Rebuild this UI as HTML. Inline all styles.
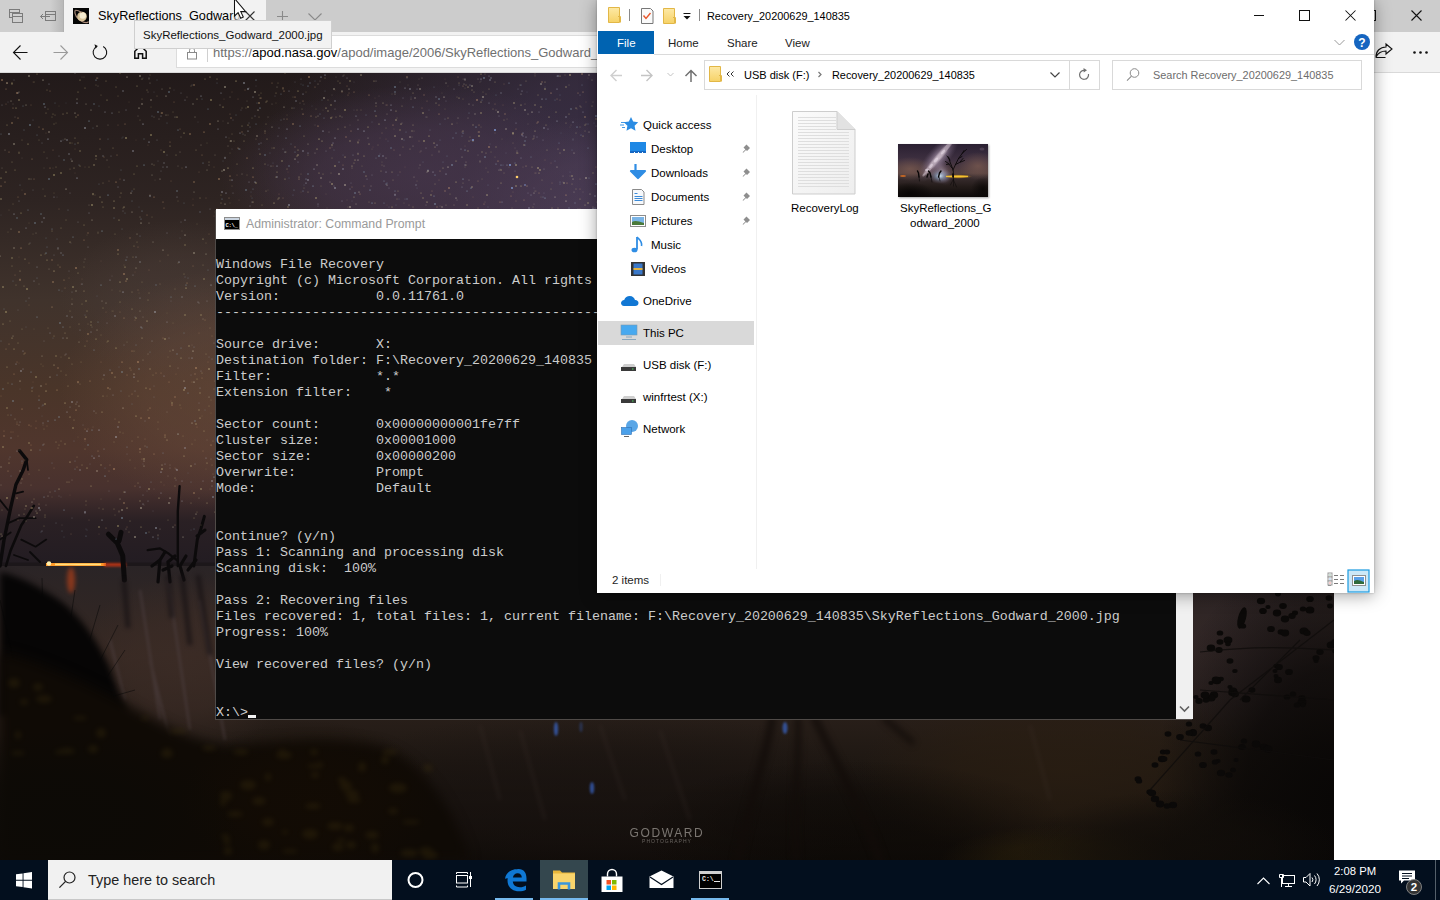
<!DOCTYPE html>
<html><head><meta charset="utf-8">
<style>
*{margin:0;padding:0;box-sizing:border-box}
html,body{width:1440px;height:900px;overflow:hidden;background:#fff;font-family:"Liberation Sans",sans-serif}
.a{position:absolute}
.t{position:absolute;white-space:nowrap;line-height:1}
svg{position:absolute;overflow:visible}
/* browser */
#tabstrip{left:0;top:0;width:1440px;height:32px;background:#cccccc}
#tableft{left:0;top:0;width:64px;height:32px;background:linear-gradient(90deg,#cfcfcf 0,#cfcfcf 50px,#b8b8b8 63px,#a8a8a8 64px)}
#tab{left:64px;top:0;width:202px;height:32px;background:#f2f2f2}
#toolbar{left:0;top:32px;width:1440px;height:41px;background:#f2f2f2}
#addr{left:176px;top:35px;width:1184px;height:33px;background:#fff;border:1px solid #dcdcdc}
#photo{left:0;top:73px;width:1334px;height:787px;overflow:hidden;background:#1a1412}
#tip{left:134px;top:20px;width:198px;height:29px;background:#f2f2f2;border:1px solid #cfcfcf}
/* cmd */
#cmd{left:216px;top:209px;width:977px;height:510px;background:#0c0c0c;box-shadow:-1px 1px 0 #4f4a47}
#cmdtitle{left:0;top:0;width:977px;height:30px;background:#fff}
#cmdtext{left:0;top:48px;font-family:"Liberation Mono",monospace;font-size:13.33px;line-height:16px;color:#cccccc;white-space:pre}
#cmdscroll{left:960px;top:30px;width:17px;height:480px;background:#f0f0f0}
/* explorer */
#exp{left:597px;top:0;width:777px;height:593px;background:#fff;box-shadow:0 2px 16px rgba(0,0,0,.38),0 0 2px rgba(0,0,0,.25)}
.ui{font-size:11.5px;color:#000}
#taskbar{left:0;top:860px;width:1440px;height:40px;background:#030f1e}
#search{left:48px;top:860px;width:344px;height:40px;background:#f1f1f1;border-bottom:1px solid #c8c8c8}
</style></head><body>
<!-- ============ BROWSER CHROME ============ -->
<div id="tabstrip" class="a"></div>
<div id="tableft" class="a"></div>
<svg style="left:0;top:0" width="64" height="32">
  <g fill="none" stroke="#7b7b7b" stroke-width="1">
    <rect x="9.5" y="9.5" width="10" height="8"/><path d="M9.5 12.5h10"/>
    <rect x="12.5" y="13.5" width="10" height="9" fill="#cfcfcf"/><path d="M12.5 16.5h10"/>
    <rect x="45.5" y="11.5" width="10" height="9"/><path d="M45.5 14.5h10"/>
    <path d="M50 16.5h-9.5M43 14l-2.5 2.5L43 19"/>
  </g>
</svg>
<div id="tab" class="a"></div>
<svg style="left:73px;top:8px" width="16" height="16">
  <rect width="16" height="16" fill="#050505"/>
  <path d="M2 2.5C1 6 4 11 9 13.5C12 15 15 15 15.5 13.5" stroke="#a88a78" stroke-width="1.2" fill="none"/>
  <circle cx="9" cy="8.5" r="4.8" fill="#d9c49a"/>
  <circle cx="9.8" cy="7.6" r="3.2" fill="#f6ecd0"/>
  <path d="M2 2.5C3 2 6 3 9 4.5" stroke="#a88a78" stroke-width="1.1" fill="none"/>
</svg>
<div class="t" style="left:98px;top:10px;font-size:12.7px;color:#000">SkyReflections_Godward</div>
<div class="a" style="left:230px;top:0;width:36px;height:32px;background:linear-gradient(90deg,rgba(242,242,242,0),#f2f2f2 12px)"></div>
<svg style="left:245px;top:11px" width="10" height="10"><path d="M0.5 0.5l9 9M9.5 0.5l-9 9" stroke="#333" stroke-width="1.1"/></svg>
<svg style="left:277px;top:11px" width="12" height="11"><path d="M5.5 0v10.5M0 5.5h11" stroke="#8a8a8a" stroke-width="1.1"/></svg>
<svg style="left:308px;top:13px" width="14" height="8"><path d="M0.5 0.5l6.5 6.5 6.5-6.5" stroke="#8a8a8a" stroke-width="1.1" fill="none"/></svg>
<!-- right side browser caption -->
<svg style="left:1360px;top:0" width="20" height="31"><rect x="5.5" y="10.5" width="10" height="10" fill="none" stroke="#111"/></svg>
<svg style="left:1411px;top:10px" width="12" height="12"><path d="M0.5 0.5l10 10M10.5 0.5l-10 10" stroke="#111" stroke-width="1.1"/></svg>
<div id="toolbar" class="a"></div>
<svg style="left:0;top:32px" width="160" height="41">
  <path d="M13.5 20.5h14M20.5 13.5l-7 7 7 7" stroke="#111" stroke-width="1.1" fill="none"/>
  <path d="M53.5 20.5h14M60.5 13.5l7 7-7 7" stroke="#9a9a9a" stroke-width="1.1" fill="none"/>
  <path d="M96.3 14.6A6.8 6.8 0 1 0 103.2 14.4" stroke="#111" stroke-width="1.1" fill="none"/>
  <path d="M94.5 12.3l3.3 1.8-2.2 2.6z" fill="#111"/>
  <path d="M134.8 26.3v-7l5.7-5.5 5.7 5.5v7h-3.6v-4.5h-4.2v4.5z" stroke="#111" stroke-width="1.5" fill="none"/>
</svg>
<div id="addr" class="a"></div>
<svg style="left:176px;top:35px" width="40" height="33">
  <rect x="11.5" y="17.5" width="9" height="6.5" fill="none" stroke="#8a8a8a"/>
  <path d="M13.5 17.5v-2a2.5 2.5 0 0 1 5 0v2" fill="none" stroke="#8a8a8a"/>
  <path d="M31.5 6v21" stroke="#d0d0d0"/>
</svg>
<div class="t" style="left:213px;top:46px;font-size:13px;color:#707070">https://<span style="color:#000">apod.nasa.gov</span>/apod/image/2006/SkyReflections_Godward_2000.jpg</div>
<svg style="left:1374px;top:32px" width="66" height="41">
  <path d="M1.5 25.5h10M2 25c0-6 4-10 10-10v-3l6 5-6 5v-3c-5 0-8 2-10 6z" stroke="#111" stroke-width="1.1" fill="none"/>
  <circle cx="40.5" cy="20.5" r="1.3" fill="#111"/><circle cx="46.5" cy="20.5" r="1.3" fill="#111"/><circle cx="52.5" cy="20.5" r="1.3" fill="#111"/>
</svg>
<div class="a" style="left:0;top:72px;width:1440px;height:1px;background:#d9d9d9"></div>

<!-- ============ PHOTO ============ -->
<div id="photo" class="a">
<svg style="left:0;top:0" width="1334" height="787" viewBox="0 73 1334 787">
<defs>
<linearGradient id="sky" x1="0" y1="73" x2="0" y2="568" gradientUnits="userSpaceOnUse">
 <stop offset="0" stop-color="#221a1a"/><stop offset="0.257" stop-color="#2e2422"/><stop offset="0.46" stop-color="#40332c"/>
 <stop offset="0.64" stop-color="#4a3529"/><stop offset="0.76" stop-color="#50362d"/><stop offset="0.84" stop-color="#48312e"/><stop offset="0.905" stop-color="#2a2024"/><stop offset="1" stop-color="#221c22"/>
</linearGradient>
<linearGradient id="water" x1="0" y1="565" x2="0" y2="865" gradientUnits="userSpaceOnUse">
 <stop offset="0" stop-color="#2a2426"/><stop offset="0.3" stop-color="#352822"/><stop offset="0.65" stop-color="#1f1813"/><stop offset="1" stop-color="#0e0a07"/>
</linearGradient>
<radialGradient id="g0"><stop offset="0" stop-color="#3a3048" stop-opacity="1.0"/><stop offset="0.5" stop-color="#3a3048" stop-opacity="0.750"/><stop offset="1" stop-color="#3a3048" stop-opacity="0"/></radialGradient>
<radialGradient id="g1"><stop offset="0" stop-color="#4d3f58" stop-opacity="0.9"/><stop offset="0.5" stop-color="#4d3f58" stop-opacity="0.675"/><stop offset="1" stop-color="#4d3f58" stop-opacity="0"/></radialGradient>
<radialGradient id="g2"><stop offset="0" stop-color="#45354a" stop-opacity="0.8"/><stop offset="0.5" stop-color="#45354a" stop-opacity="0.600"/><stop offset="1" stop-color="#45354a" stop-opacity="0"/></radialGradient>
<radialGradient id="g3"><stop offset="0" stop-color="#4a3c38" stop-opacity="0.5"/><stop offset="0.5" stop-color="#4a3c38" stop-opacity="0.375"/><stop offset="1" stop-color="#4a3c38" stop-opacity="0"/></radialGradient>
<radialGradient id="g4"><stop offset="0" stop-color="#6a4c3c" stop-opacity="0.55"/><stop offset="0.5" stop-color="#6a4c3c" stop-opacity="0.413"/><stop offset="1" stop-color="#6a4c3c" stop-opacity="0"/></radialGradient>
<radialGradient id="g5"><stop offset="0" stop-color="#3c2c26" stop-opacity="0.8"/><stop offset="0.5" stop-color="#3c2c26" stop-opacity="0.600"/><stop offset="1" stop-color="#3c2c26" stop-opacity="0"/></radialGradient>
<radialGradient id="g6"><stop offset="0" stop-color="#302628" stop-opacity="0.8"/><stop offset="0.5" stop-color="#302628" stop-opacity="0.600"/><stop offset="1" stop-color="#302628" stop-opacity="0"/></radialGradient>
<radialGradient id="g7"><stop offset="0" stop-color="#2a1e12" stop-opacity="0.8"/><stop offset="0.5" stop-color="#2a1e12" stop-opacity="0.600"/><stop offset="1" stop-color="#2a1e12" stop-opacity="0"/></radialGradient>
<radialGradient id="g8"><stop offset="0" stop-color="#181210" stop-opacity="0.6"/><stop offset="0.5" stop-color="#181210" stop-opacity="0.450"/><stop offset="1" stop-color="#181210" stop-opacity="0"/></radialGradient>
<radialGradient id="g9"><stop offset="0" stop-color="#0c0906" stop-opacity="0.6"/><stop offset="0.5" stop-color="#0c0906" stop-opacity="0.450"/><stop offset="1" stop-color="#0c0906" stop-opacity="0"/></radialGradient>
<radialGradient id="g10"><stop offset="0" stop-color="#140c04" stop-opacity="0.7"/><stop offset="0.5" stop-color="#140c04" stop-opacity="0.525"/><stop offset="1" stop-color="#140c04" stop-opacity="0"/></radialGradient>
<radialGradient id="g11"><stop offset="0" stop-color="#0c0a06" stop-opacity="0.9"/><stop offset="0.5" stop-color="#0c0a06" stop-opacity="0.675"/><stop offset="1" stop-color="#0c0a06" stop-opacity="0"/></radialGradient>
<radialGradient id="g12"><stop offset="0" stop-color="#2a200c" stop-opacity="0.7"/><stop offset="0.5" stop-color="#2a200c" stop-opacity="0.525"/><stop offset="1" stop-color="#2a200c" stop-opacity="0"/></radialGradient>
<radialGradient id="g13"><stop offset="0" stop-color="#090706" stop-opacity="1.0"/><stop offset="0.5" stop-color="#090706" stop-opacity="0.750"/><stop offset="1" stop-color="#090706" stop-opacity="0"/></radialGradient>
<radialGradient id="g14"><stop offset="0" stop-color="#120e0a" stop-opacity="0.8"/><stop offset="0.5" stop-color="#120e0a" stop-opacity="0.600"/><stop offset="1" stop-color="#120e0a" stop-opacity="0"/></radialGradient>
</defs>
<rect x="0" y="73" width="1334" height="495" fill="url(#sky)"/>
<ellipse cx="720" cy="180" rx="470" ry="250" fill="url(#g0)"/>
<ellipse cx="610" cy="205" rx="160" ry="90" fill="url(#g1)"/>
<ellipse cx="420" cy="175" rx="200" ry="90" fill="url(#g2)"/>
<ellipse cx="180" cy="300" rx="120" ry="80" fill="url(#g3)"/>
<ellipse cx="230" cy="390" rx="170" ry="120" fill="url(#g4)"/>
<rect x="0" y="565" width="1334" height="300" fill="url(#water)"/>
<ellipse cx="185" cy="665" rx="110" ry="90" fill="url(#g5)"/>
<ellipse cx="1260" cy="660" rx="140" ry="90" fill="url(#g6)"/>
<ellipse cx="1060" cy="770" rx="200" ry="90" fill="url(#g7)"/>
<ellipse cx="600" cy="800" rx="300" ry="90" fill="url(#g8)"/>
<ellipse cx="850" cy="830" rx="220" ry="70" fill="url(#g9)"/>
<g stroke="#524548" stroke-width="2.5" opacity="0.45" style="filter:blur(1.5px)"><path d="M140 590L160 720M168 580L190 730M200 600L225 740M110 640L125 700M150 660L170 740"/></g><g stroke="#4a3c38" stroke-width="3" opacity="0.2" style="filter:blur(2px)"><path d="M480 725L500 800M520 730L545 820M600 725L625 800M660 730L690 820M1030 725L1050 800"/></g>
<rect x="0" y="562.5" width="215" height="3.5" fill="#1c171a"/>
<rect x="46" y="563" width="60" height="3" fill="#ff9a28" style="filter:blur(0.7px)"/>
<rect x="55" y="563.6" width="46" height="1.6" fill="#ffe080"/>
<rect x="104" y="563" width="22" height="3.5" fill="#d03a18" opacity="0.85" style="filter:blur(0.8px)"/>
<circle cx="49" cy="563.5" r="2.2" fill="#fff0b0" style="filter:blur(0.6px)"/>
<ellipse cx="71" cy="580" rx="4" ry="13" fill="#b0401a" opacity="0.7" style="filter:blur(2px)"/>
<g fill="none" stroke="#0c0a0b" stroke-linecap="round" stroke-linejoin="round">
 <path d="M0 566L4 540L10.7 507.6L16 484.4L23.1 470.2L26.7 459.6L19.6 450.7" stroke-width="3.4"/>
 <path d="M6 566L10.7 550.2L21.3 525.3L28.4 514.7L33.8 505.8" stroke-width="2.6"/>
 <path d="M7.1 523.6L19.6 518.2L35.6 518.2M16 493.3L23.1 491.6M0 539.6L10.7 532.4M21.3 539.6L35.6 546.7L46.2 539.6M26.7 459.6L28 470M0 500L8 510M14 555L28 560M30 552L40 562" stroke-width="1.8"/>
 <path d="M124.4 580L122.7 555.6L117.3 543.1L108.4 534.2M119 541L121 532.4" stroke-width="5"/>
 <path d="M177.8 566L177.8 511L179.6 486.2" stroke-width="2.4"/>
 <path d="M193.8 566L197.3 539.6L200.9 528.9L204.4 516.4M197 536L205 530" stroke-width="3"/>
 <path d="M147.6 550.2L160 548.4L168.9 553.8L177.8 560.9" stroke-width="2.2"/>
</g>
<g fill="none" stroke="#0c0a0b" stroke-linecap="round"><path d="M158 582L160 560L165 552M170 582L168 562L175 556M184 580L180 566L186 556M152 566L160 560M163 570L172 566M188 570L196 560" stroke-width="3.2"/></g>
<g fill="none" stroke="#161113" opacity="0.7" style="filter:blur(2px)"><path d="M124 580L128 628M168 575L172 618M182 575L190 645M198 575L210 655" stroke-width="5"/></g>
<path d="M0 572C20 576 42 588 62 602C82 618 98 642 110 668C116 686 121 700 128 712L0 716z" fill="#060505" style="filter:blur(3px)"/>
<g stroke="#060505" stroke-width="1" opacity="0.5" fill="none"><path d="M30 690L10 585M45 690L42 578M60 690L75 590M75 690L100 605M85 690L118 625M95 695L125 650M20 690L0 600M100 700L135 690"/></g>
<path d="M0 652C50 664 100 690 140 712C170 728 195 742 230 746C280 742 330 736 380 746C420 760 450 800 470 860H0z" fill="#0f0a05" style="filter:blur(6px)"/>
<ellipse cx="310" cy="800" rx="130" ry="80" fill="url(#g10)"/>
<ellipse cx="60" cy="820" rx="180" ry="90" fill="url(#g11)"/>
<g fill="#3a2e0e" opacity="0.35" style="filter:blur(2.5px)"><ellipse cx="338" cy="847" rx="6" ry="4"/><ellipse cx="259" cy="801" rx="7" ry="4"/><ellipse cx="284" cy="755" rx="8" ry="4"/><ellipse cx="426" cy="851" rx="7" ry="4"/><ellipse cx="223" cy="803" rx="3" ry="3"/><ellipse cx="226" cy="796" rx="6" ry="5"/><ellipse cx="354" cy="800" rx="7" ry="3"/><ellipse cx="430" cy="855" rx="8" ry="4"/><ellipse cx="268" cy="777" rx="3" ry="4"/><ellipse cx="398" cy="788" rx="9" ry="5"/><ellipse cx="264" cy="845" rx="6" ry="5"/><ellipse cx="235" cy="814" rx="8" ry="3"/><ellipse cx="290" cy="851" rx="8" ry="2"/><ellipse cx="241" cy="752" rx="8" ry="3"/><ellipse cx="314" cy="766" rx="7" ry="2"/><ellipse cx="24" cy="702" rx="4" ry="3"/><ellipse cx="44" cy="699" rx="8" ry="4"/><ellipse cx="428" cy="768" rx="5" ry="4"/><ellipse cx="282" cy="753" rx="4" ry="4"/><ellipse cx="346" cy="786" rx="6" ry="5"/><ellipse cx="341" cy="840" rx="4" ry="2"/><ellipse cx="375" cy="848" rx="4" ry="5"/><ellipse cx="228" cy="851" rx="4" ry="4"/><ellipse cx="393" cy="811" rx="5" ry="3"/><ellipse cx="14" cy="683" rx="6" ry="5"/><ellipse cx="59" cy="752" rx="4" ry="2"/><ellipse cx="314" cy="752" rx="4" ry="3"/><ellipse cx="248" cy="785" rx="8" ry="5"/><ellipse cx="145" cy="718" rx="4" ry="2"/><ellipse cx="411" cy="822" rx="9" ry="2"/><ellipse cx="101" cy="733" rx="5" ry="5"/><ellipse cx="335" cy="826" rx="8" ry="4"/><ellipse cx="167" cy="752" rx="5" ry="4"/><ellipse cx="80" cy="718" rx="7" ry="2"/><ellipse cx="209" cy="748" rx="7" ry="3"/><ellipse cx="18" cy="735" rx="3" ry="4"/><ellipse cx="268" cy="822" rx="6" ry="4"/><ellipse cx="362" cy="767" rx="4" ry="5"/><ellipse cx="93" cy="749" rx="5" ry="4"/><ellipse cx="310" cy="834" rx="8" ry="5"/><ellipse cx="342" cy="780" rx="4" ry="3"/><ellipse cx="178" cy="731" rx="9" ry="3"/><ellipse cx="315" cy="775" rx="4" ry="3"/><ellipse cx="227" cy="841" rx="3" ry="4"/><ellipse cx="285" cy="832" rx="3" ry="2"/><ellipse cx="225" cy="836" rx="4" ry="2"/><ellipse cx="352" cy="794" rx="7" ry="4"/><ellipse cx="320" cy="765" rx="3" ry="3"/><ellipse cx="38" cy="687" rx="5" ry="4"/><ellipse cx="349" cy="828" rx="5" ry="4"/><ellipse cx="18" cy="753" rx="7" ry="2"/><ellipse cx="351" cy="845" rx="5" ry="4"/><ellipse cx="167" cy="754" rx="6" ry="4"/><ellipse cx="372" cy="835" rx="7" ry="4"/><ellipse cx="409" cy="853" rx="9" ry="4"/><ellipse cx="67" cy="751" rx="8" ry="3"/><ellipse cx="313" cy="806" rx="8" ry="3"/><ellipse cx="390" cy="752" rx="8" ry="3"/><ellipse cx="385" cy="760" rx="4" ry="4"/></g>
<g fill="none" stroke="#120c09" stroke-linecap="round" opacity="0.8" style="filter:blur(3px)">
 <path d="M772 719C768 750 752 790 738 860" stroke-width="8"/>
 <path d="M798 719C800 760 792 805 796 860" stroke-width="6"/>
 <path d="M815 719C835 760 860 805 880 860" stroke-width="8"/>
 <path d="M885 719L912 742" stroke-width="6"/>
</g>
<g fill="#3a66c8" opacity="0.7" style="filter:blur(1.2px)"><ellipse cx="556" cy="729" rx="2.2" ry="7"/><ellipse cx="785" cy="728" rx="2.5" ry="6"/><ellipse cx="592" cy="788" rx="2.2" ry="6"/><ellipse cx="581" cy="727" rx="1.5" ry="5" opacity="0.5"/></g>
<ellipse cx="1060" cy="860" rx="120" ry="35" fill="url(#g12)"/>
<ellipse cx="1334" cy="800" rx="180" ry="260" fill="url(#g13)"/>
<ellipse cx="1180" cy="850" rx="160" ry="60" fill="url(#g14)"/>
<g fill="#0b0908" style="filter:blur(0.5px)"><ellipse cx="1242" cy="618" rx="4" ry="11" transform="rotate(15 1242 618)"/><ellipse cx="1243" cy="626" rx="3.2" ry="2.6"/><ellipse cx="1268" cy="607" rx="2.6" ry="2.1"/><ellipse cx="1295" cy="613" rx="3.0" ry="2.4"/><ellipse cx="1281" cy="632" rx="3.4" ry="2.8"/><ellipse cx="1283" cy="606" rx="3.8" ry="3.0"/><ellipse cx="1285" cy="619" rx="4.2" ry="3.4"/><ellipse cx="1263" cy="611" rx="3.8" ry="3.1"/><ellipse cx="1292" cy="616" rx="3.7" ry="2.9"/><ellipse cx="1277" cy="613" rx="4.2" ry="3.4"/><ellipse cx="1211" cy="648" rx="4.3" ry="3.4"/><ellipse cx="1220" cy="633" rx="3.3" ry="2.6"/><ellipse cx="1228" cy="640" rx="4.4" ry="3.5"/><ellipse cx="1228" cy="644" rx="2.8" ry="2.2"/><ellipse cx="1230" cy="661" rx="3.4" ry="2.7"/><ellipse cx="1220" cy="642" rx="3.5" ry="2.8"/><ellipse cx="1219" cy="650" rx="3.7" ry="2.9"/><ellipse cx="1271" cy="629" rx="3.9" ry="3.1"/><ellipse cx="1304" cy="631" rx="4.5" ry="3.6"/><ellipse cx="1285" cy="633" rx="4.2" ry="3.4"/><ellipse cx="1307" cy="633" rx="3.6" ry="2.9"/><ellipse cx="1217" cy="681" rx="4.2" ry="3.3"/><ellipse cx="1211" cy="683" rx="2.6" ry="2.1"/><ellipse cx="1235" cy="671" rx="2.7" ry="2.1"/><ellipse cx="1221" cy="679" rx="2.8" ry="2.2"/><ellipse cx="1214" cy="695" rx="4.2" ry="3.4"/><ellipse cx="1230" cy="687" rx="2.6" ry="2.1"/><ellipse cx="1216" cy="680" rx="4.3" ry="3.4"/><ellipse cx="1211" cy="698" rx="4.5" ry="3.6"/><ellipse cx="1199" cy="701" rx="3.7" ry="3.0"/><ellipse cx="1206" cy="700" rx="3.3" ry="2.7"/><ellipse cx="1196" cy="697" rx="2.6" ry="2.1"/><ellipse cx="1205" cy="695" rx="4.4" ry="3.5"/><ellipse cx="1252" cy="690" rx="3.4" ry="2.7"/><ellipse cx="1232" cy="693" rx="3.7" ry="3.0"/><ellipse cx="1233" cy="691" rx="4.4" ry="3.5"/><ellipse cx="1235" cy="694" rx="3.9" ry="3.2"/><ellipse cx="1246" cy="699" rx="4.5" ry="3.6"/><ellipse cx="1275" cy="671" rx="2.5" ry="2.0"/><ellipse cx="1276" cy="676" rx="2.5" ry="2.0"/><ellipse cx="1276" cy="666" rx="2.6" ry="2.1"/><ellipse cx="1279" cy="667" rx="3.9" ry="3.1"/><ellipse cx="1278" cy="680" rx="4.0" ry="3.2"/><ellipse cx="1289" cy="672" rx="3.9" ry="3.1"/><ellipse cx="1203" cy="726" rx="3.4" ry="2.7"/><ellipse cx="1189" cy="724" rx="3.2" ry="2.6"/><ellipse cx="1193" cy="732" rx="3.7" ry="3.0"/><ellipse cx="1193" cy="733" rx="4.0" ry="3.2"/><ellipse cx="1208" cy="728" rx="4.0" ry="3.2"/><ellipse cx="1162" cy="759" rx="4.1" ry="3.3"/><ellipse cx="1164" cy="759" rx="3.4" ry="2.7"/><ellipse cx="1163" cy="752" rx="3.1" ry="2.5"/><ellipse cx="1155" cy="765" rx="3.4" ry="2.7"/><ellipse cx="1167" cy="752" rx="3.2" ry="2.5"/><ellipse cx="1138" cy="779" rx="3.4" ry="2.7"/><ellipse cx="1150" cy="792" rx="3.6" ry="2.8"/><ellipse cx="1155" cy="799" rx="4.2" ry="3.3"/><ellipse cx="1152" cy="793" rx="4.1" ry="3.3"/><ellipse cx="1139" cy="781" rx="3.2" ry="2.6"/><ellipse cx="1173" cy="805" rx="4.1" ry="3.3"/><ellipse cx="1167" cy="806" rx="3.3" ry="2.7"/><ellipse cx="1160" cy="804" rx="4.3" ry="3.5"/><ellipse cx="1310" cy="610" rx="4.4" ry="3.5"/><ellipse cx="1329" cy="598" rx="3.4" ry="2.7"/><ellipse cx="1330" cy="606" rx="2.9" ry="2.4"/><ellipse cx="1310" cy="599" rx="3.8" ry="3.1"/><ellipse cx="1303" cy="609" rx="3.2" ry="2.5"/><ellipse cx="1320" cy="652" rx="3.7" ry="2.9"/><ellipse cx="1316" cy="661" rx="2.6" ry="2.1"/><ellipse cx="1331" cy="645" rx="4.3" ry="3.5"/><ellipse cx="1335" cy="642" rx="3.7" ry="2.9"/><ellipse cx="1335" cy="651" rx="2.8" ry="2.3"/><ellipse cx="1316" cy="658" rx="3.5" ry="2.8"/><ellipse cx="1242" cy="747" rx="3.7" ry="3.0"/><ellipse cx="1256" cy="744" rx="4.2" ry="3.4"/><ellipse cx="1244" cy="741" rx="3.2" ry="2.6"/><ellipse cx="1264" cy="747" rx="4.1" ry="3.3"/><ellipse cx="1268" cy="749" rx="4.3" ry="3.5"/><ellipse cx="1236" cy="760" rx="2.5" ry="2.0"/><ellipse cx="1218" cy="761" rx="2.6" ry="2.1"/><ellipse cx="1229" cy="775" rx="3.6" ry="2.8"/><ellipse cx="1221" cy="773" rx="4.1" ry="3.2"/><ellipse cx="1233" cy="770" rx="2.8" ry="2.2"/><ellipse cx="1302" cy="702" rx="4.4" ry="3.6"/><ellipse cx="1302" cy="698" rx="3.5" ry="2.8"/><ellipse cx="1297" cy="705" rx="3.2" ry="2.6"/><ellipse cx="1293" cy="694" rx="3.2" ry="2.6"/><ellipse cx="1303" cy="705" rx="2.7" ry="2.2"/><ellipse cx="1287" cy="697" rx="3.3" ry="2.6"/><ellipse cx="1215" cy="762" rx="3.2" ry="2.6"/><ellipse cx="1198" cy="754" rx="3.3" ry="2.6"/><ellipse cx="1214" cy="752" rx="3.4" ry="2.7"/><ellipse cx="1203" cy="765" rx="3.9" ry="3.1"/><ellipse cx="1168" cy="734" rx="3.4" ry="2.7"/><ellipse cx="1180" cy="737" rx="3.9" ry="3.1"/><ellipse cx="1189" cy="733" rx="3.4" ry="2.7"/><ellipse cx="1280" cy="590" rx="3.2" ry="2.6"/><ellipse cx="1278" cy="594" rx="3.0" ry="2.4"/><ellipse cx="1261" cy="601" rx="4.1" ry="3.3"/><ellipse cx="1255" cy="589" rx="4.1" ry="3.3"/></g>
<g stroke="#0f0c0b" stroke-width="1.2" fill="none" opacity="0.8"><path d="M1334 650C1300 648 1260 645 1200 652M1334 700L1200 690M1334 620L1230 700L1150 790M1300 640L1240 700M1334 760L1180 740"/></g>
<g><circle cx="70" cy="143" r="0.75" fill="#e8d89a" opacity="0.35"/><circle cx="177" cy="117" r="0.6" fill="#e8d89a" opacity="0.8"/><circle cx="46" cy="113" r="0.55" fill="#e8d89a" opacity="0.45"/><circle cx="20" cy="271" r="0.6" fill="#e8d89a" opacity="0.45"/><circle cx="136" cy="345" r="0.4" fill="#9fc0d8" opacity="0.8"/><circle cx="86" cy="529" r="0.4" fill="#9fc0d8" opacity="0.45"/><circle cx="63" cy="140" r="0.4" fill="#9fc0d8" opacity="0.55"/><circle cx="121" cy="391" r="0.4" fill="#9fc0d8" opacity="0.8"/><circle cx="138" cy="247" r="0.6" fill="#e0b080" opacity="0.35"/><circle cx="122" cy="362" r="0.55" fill="#e0b080" opacity="0.8"/><circle cx="92" cy="220" r="0.6" fill="#f0e6c8" opacity="0.55"/><circle cx="65" cy="444" r="0.75" fill="#d8c88a" opacity="0.35"/><circle cx="124" cy="318" r="0.5" fill="#e0b080" opacity="0.65"/><circle cx="62" cy="531" r="0.4" fill="#9fc0d8" opacity="0.65"/><circle cx="36" cy="233" r="0.55" fill="#f0e6c8" opacity="0.35"/><circle cx="208" cy="109" r="0.6" fill="#9fc0d8" opacity="0.55"/><circle cx="73" cy="237" r="0.55" fill="#9fc0d8" opacity="0.65"/><circle cx="15" cy="117" r="0.5" fill="#f0e6c8" opacity="0.35"/><circle cx="13" cy="401" r="0.75" fill="#9fc0d8" opacity="0.65"/><circle cx="61" cy="253" r="0.75" fill="#cfd8e8" opacity="0.35"/><circle cx="203" cy="239" r="0.6" fill="#e8d89a" opacity="0.65"/><circle cx="13" cy="432" r="0.45" fill="#e0b080" opacity="0.45"/><circle cx="86" cy="501" r="0.55" fill="#e8d89a" opacity="0.45"/><circle cx="97" cy="330" r="0.45" fill="#f0e6c8" opacity="0.8"/><circle cx="60" cy="267" r="0.5" fill="#e0b080" opacity="0.65"/><circle cx="207" cy="143" r="0.45" fill="#d8c88a" opacity="0.45"/><circle cx="142" cy="79" r="0.6" fill="#d8c88a" opacity="0.55"/><circle cx="61" cy="141" r="0.6" fill="#cfd8e8" opacity="0.8"/><circle cx="122" cy="518" r="0.75" fill="#9fc0d8" opacity="0.8"/><circle cx="141" cy="418" r="0.55" fill="#e0b080" opacity="0.8"/><circle cx="85" cy="259" r="0.4" fill="#f0e6c8" opacity="0.65"/><circle cx="13" cy="104" r="0.45" fill="#f0e6c8" opacity="0.45"/><circle cx="24" cy="354" r="0.4" fill="#e8d89a" opacity="0.8"/><circle cx="33" cy="120" r="0.5" fill="#9fc0d8" opacity="0.35"/><circle cx="15" cy="170" r="0.55" fill="#d8c88a" opacity="0.55"/><circle cx="206" cy="354" r="0.55" fill="#e8d89a" opacity="0.35"/><circle cx="183" cy="537" r="0.55" fill="#f0e6c8" opacity="0.65"/><circle cx="67" cy="140" r="0.75" fill="#cfd8e8" opacity="0.55"/><circle cx="103" cy="396" r="0.6" fill="#e8d89a" opacity="0.45"/><circle cx="205" cy="320" r="0.45" fill="#e0b080" opacity="0.8"/><circle cx="197" cy="427" r="0.5" fill="#e0b080" opacity="0.35"/><circle cx="150" cy="195" r="0.5" fill="#d8c88a" opacity="0.55"/><circle cx="167" cy="322" r="0.6" fill="#cfd8e8" opacity="0.45"/><circle cx="132" cy="441" r="0.45" fill="#d8c88a" opacity="0.65"/><circle cx="160" cy="179" r="0.6" fill="#f0e6c8" opacity="0.55"/><circle cx="158" cy="535" r="0.5" fill="#f0e6c8" opacity="0.55"/><circle cx="42" cy="356" r="0.5" fill="#f0e6c8" opacity="0.55"/><circle cx="206" cy="243" r="0.45" fill="#e8d89a" opacity="0.45"/><circle cx="102" cy="231" r="0.55" fill="#9fc0d8" opacity="0.8"/><circle cx="182" cy="297" r="0.75" fill="#cfd8e8" opacity="0.35"/><circle cx="180" cy="129" r="0.55" fill="#e0b080" opacity="0.45"/><circle cx="103" cy="156" r="0.75" fill="#cfd8e8" opacity="0.35"/><circle cx="173" cy="527" r="0.55" fill="#f0e6c8" opacity="0.65"/><circle cx="161" cy="113" r="0.45" fill="#d8c88a" opacity="0.45"/><circle cx="6" cy="349" r="0.55" fill="#e0b080" opacity="0.45"/><circle cx="132" cy="351" r="0.55" fill="#e0b080" opacity="0.55"/><circle cx="34" cy="329" r="0.4" fill="#e8d89a" opacity="0.35"/><circle cx="114" cy="509" r="0.55" fill="#d8c88a" opacity="0.45"/><circle cx="6" cy="172" r="0.6" fill="#d8c88a" opacity="0.8"/><circle cx="70" cy="327" r="0.45" fill="#e8d89a" opacity="0.55"/><circle cx="194" cy="382" r="0.6" fill="#f0e6c8" opacity="0.8"/><circle cx="28" cy="144" r="0.6" fill="#e8d89a" opacity="0.65"/><circle cx="168" cy="357" r="0.45" fill="#d8c88a" opacity="0.45"/><circle cx="102" cy="412" r="0.6" fill="#e8d89a" opacity="0.55"/><circle cx="147" cy="321" r="0.55" fill="#e8d89a" opacity="0.8"/><circle cx="12" cy="162" r="0.4" fill="#e8d89a" opacity="0.8"/><circle cx="98" cy="86" r="0.4" fill="#f0e6c8" opacity="0.55"/><circle cx="132" cy="309" r="0.6" fill="#d8c88a" opacity="0.55"/><circle cx="98" cy="322" r="0.55" fill="#9fc0d8" opacity="0.45"/><circle cx="151" cy="482" r="0.5" fill="#9fc0d8" opacity="0.45"/><circle cx="181" cy="137" r="0.4" fill="#f0e6c8" opacity="0.65"/><circle cx="68" cy="386" r="0.55" fill="#e8d89a" opacity="0.45"/><circle cx="145" cy="439" r="0.45" fill="#e0b080" opacity="0.55"/><circle cx="31" cy="485" r="0.55" fill="#d8c88a" opacity="0.35"/><circle cx="86" cy="301" r="0.75" fill="#d8c88a" opacity="0.45"/><circle cx="153" cy="537" r="0.55" fill="#cfd8e8" opacity="0.65"/><circle cx="42" cy="222" r="0.75" fill="#cfd8e8" opacity="0.35"/><circle cx="73" cy="287" r="0.75" fill="#e8d89a" opacity="0.65"/><circle cx="72" cy="364" r="0.6" fill="#e8d89a" opacity="0.35"/><circle cx="213" cy="441" r="0.4" fill="#e8d89a" opacity="0.55"/><circle cx="59" cy="496" r="0.45" fill="#cfd8e8" opacity="0.45"/><circle cx="177" cy="470" r="0.75" fill="#cfd8e8" opacity="0.65"/><circle cx="32" cy="502" r="0.6" fill="#f0e6c8" opacity="0.55"/><circle cx="19" cy="100" r="0.75" fill="#d8c88a" opacity="0.65"/><circle cx="193" cy="199" r="0.4" fill="#e0b080" opacity="0.35"/><circle cx="173" cy="112" r="0.45" fill="#e8d89a" opacity="0.55"/><circle cx="186" cy="285" r="0.5" fill="#9fc0d8" opacity="0.65"/><circle cx="200" cy="198" r="0.45" fill="#e8d89a" opacity="0.8"/><circle cx="153" cy="511" r="0.45" fill="#cfd8e8" opacity="0.35"/><circle cx="39" cy="508" r="0.75" fill="#cfd8e8" opacity="0.8"/><circle cx="164" cy="208" r="0.6" fill="#e0b080" opacity="0.45"/><circle cx="58" cy="448" r="0.5" fill="#e8d89a" opacity="0.35"/><circle cx="4" cy="309" r="0.45" fill="#9fc0d8" opacity="0.65"/><circle cx="53" cy="282" r="0.75" fill="#e0b080" opacity="0.65"/><circle cx="142" cy="328" r="0.55" fill="#9fc0d8" opacity="0.55"/><circle cx="149" cy="532" r="0.5" fill="#d8c88a" opacity="0.45"/><circle cx="87" cy="235" r="0.4" fill="#d8c88a" opacity="0.35"/><circle cx="15" cy="419" r="0.5" fill="#f0e6c8" opacity="0.45"/><circle cx="12" cy="384" r="0.55" fill="#9fc0d8" opacity="0.55"/><circle cx="129" cy="396" r="0.4" fill="#f0e6c8" opacity="0.45"/><circle cx="34" cy="281" r="0.5" fill="#cfd8e8" opacity="0.55"/><circle cx="210" cy="328" r="0.45" fill="#e8d89a" opacity="0.55"/><circle cx="47" cy="158" r="0.5" fill="#f0e6c8" opacity="0.35"/><circle cx="103" cy="308" r="0.45" fill="#d8c88a" opacity="0.8"/><circle cx="168" cy="115" r="0.4" fill="#d8c88a" opacity="0.65"/><circle cx="127" cy="257" r="0.5" fill="#cfd8e8" opacity="0.45"/><circle cx="18" cy="520" r="0.45" fill="#e0b080" opacity="0.8"/><circle cx="84" cy="225" r="0.55" fill="#d8c88a" opacity="0.55"/><circle cx="156" cy="373" r="0.4" fill="#e0b080" opacity="0.8"/><circle cx="136" cy="416" r="0.6" fill="#d8c88a" opacity="0.8"/><circle cx="163" cy="338" r="0.4" fill="#e0b080" opacity="0.8"/><circle cx="172" cy="405" r="0.75" fill="#e0b080" opacity="0.45"/><circle cx="18" cy="93" r="0.75" fill="#cfd8e8" opacity="0.35"/><circle cx="81" cy="284" r="0.4" fill="#e0b080" opacity="0.35"/><circle cx="135" cy="391" r="0.55" fill="#cfd8e8" opacity="0.35"/><circle cx="99" cy="106" r="0.6" fill="#9fc0d8" opacity="0.35"/><circle cx="142" cy="104" r="0.75" fill="#f0e6c8" opacity="0.55"/><circle cx="175" cy="468" r="0.45" fill="#e0b080" opacity="0.45"/><circle cx="50" cy="377" r="0.55" fill="#f0e6c8" opacity="0.65"/><circle cx="17" cy="498" r="0.5" fill="#e8d89a" opacity="0.8"/><circle cx="137" cy="166" r="0.6" fill="#d8c88a" opacity="0.55"/><circle cx="55" cy="420" r="0.5" fill="#9fc0d8" opacity="0.8"/><circle cx="29" cy="298" r="0.55" fill="#cfd8e8" opacity="0.35"/><circle cx="150" cy="389" r="0.5" fill="#e0b080" opacity="0.8"/><circle cx="62" cy="291" r="0.4" fill="#9fc0d8" opacity="0.45"/><circle cx="67" cy="113" r="0.55" fill="#e8d89a" opacity="0.55"/><circle cx="99" cy="456" r="0.55" fill="#cfd8e8" opacity="0.65"/><circle cx="45" cy="515" r="0.45" fill="#e8d89a" opacity="0.8"/><circle cx="20" cy="422" r="0.5" fill="#cfd8e8" opacity="0.45"/><circle cx="130" cy="368" r="0.5" fill="#e8d89a" opacity="0.55"/><circle cx="50" cy="492" r="0.55" fill="#f0e6c8" opacity="0.35"/><circle cx="34" cy="517" r="0.75" fill="#f0e6c8" opacity="0.65"/><circle cx="65" cy="139" r="0.5" fill="#f0e6c8" opacity="0.55"/><circle cx="26" cy="228" r="0.5" fill="#cfd8e8" opacity="0.65"/><circle cx="26" cy="506" r="0.75" fill="#e8d89a" opacity="0.55"/><circle cx="55" cy="103" r="0.55" fill="#9fc0d8" opacity="0.35"/><circle cx="78" cy="273" r="0.5" fill="#e8d89a" opacity="0.55"/><circle cx="22" cy="463" r="0.5" fill="#e0b080" opacity="0.45"/><circle cx="54" cy="197" r="0.6" fill="#cfd8e8" opacity="0.45"/><circle cx="167" cy="440" r="0.55" fill="#e8d89a" opacity="0.65"/><circle cx="197" cy="512" r="0.6" fill="#d8c88a" opacity="0.35"/><circle cx="11" cy="415" r="0.55" fill="#9fc0d8" opacity="0.45"/><circle cx="139" cy="207" r="0.4" fill="#9fc0d8" opacity="0.45"/><circle cx="37" cy="267" r="0.5" fill="#cfd8e8" opacity="0.55"/><circle cx="160" cy="529" r="0.5" fill="#f0e6c8" opacity="0.45"/><circle cx="65" cy="333" r="0.55" fill="#e8d89a" opacity="0.45"/><circle cx="139" cy="108" r="0.6" fill="#f0e6c8" opacity="0.8"/><circle cx="48" cy="496" r="0.55" fill="#f0e6c8" opacity="0.45"/><circle cx="118" cy="187" r="0.45" fill="#cfd8e8" opacity="0.8"/><circle cx="20" cy="185" r="0.5" fill="#9fc0d8" opacity="0.45"/><circle cx="192" cy="423" r="0.55" fill="#f0e6c8" opacity="0.65"/><circle cx="161" cy="171" r="0.5" fill="#cfd8e8" opacity="0.35"/><circle cx="108" cy="341" r="0.5" fill="#d8c88a" opacity="0.8"/><circle cx="114" cy="442" r="0.45" fill="#e8d89a" opacity="0.55"/><circle cx="194" cy="253" r="0.75" fill="#f0e6c8" opacity="0.65"/><circle cx="206" cy="469" r="0.4" fill="#d8c88a" opacity="0.35"/><circle cx="92" cy="430" r="0.55" fill="#9fc0d8" opacity="0.65"/><circle cx="0" cy="256" r="0.6" fill="#f0e6c8" opacity="0.65"/><circle cx="54" cy="124" r="0.45" fill="#d8c88a" opacity="0.8"/><circle cx="210" cy="124" r="0.75" fill="#e0b080" opacity="0.65"/><circle cx="18" cy="436" r="0.4" fill="#d8c88a" opacity="0.45"/><circle cx="123" cy="91" r="0.75" fill="#cfd8e8" opacity="0.45"/><circle cx="135" cy="320" r="0.55" fill="#e0b080" opacity="0.35"/><circle cx="21" cy="213" r="0.6" fill="#d8c88a" opacity="0.65"/><circle cx="56" cy="442" r="0.4" fill="#e8d89a" opacity="0.8"/><circle cx="65" cy="288" r="0.5" fill="#e0b080" opacity="0.45"/><circle cx="103" cy="183" r="0.45" fill="#e8d89a" opacity="0.65"/><circle cx="152" cy="217" r="0.4" fill="#d8c88a" opacity="0.65"/><circle cx="191" cy="375" r="0.4" fill="#cfd8e8" opacity="0.45"/><circle cx="144" cy="505" r="0.45" fill="#f0e6c8" opacity="0.35"/><circle cx="150" cy="408" r="0.5" fill="#e0b080" opacity="0.65"/><circle cx="43" cy="445" r="0.75" fill="#9fc0d8" opacity="0.35"/><circle cx="44" cy="526" r="0.5" fill="#d8c88a" opacity="0.45"/><circle cx="100" cy="197" r="0.5" fill="#e8d89a" opacity="0.8"/><circle cx="107" cy="160" r="0.45" fill="#f0e6c8" opacity="0.65"/><circle cx="197" cy="99" r="0.6" fill="#d8c88a" opacity="0.65"/><circle cx="12" cy="84" r="0.6" fill="#d8c88a" opacity="0.65"/><circle cx="11" cy="101" r="0.55" fill="#f0e6c8" opacity="0.55"/><circle cx="158" cy="539" r="0.45" fill="#cfd8e8" opacity="0.45"/><circle cx="40" cy="510" r="0.75" fill="#f0e6c8" opacity="0.35"/><circle cx="67" cy="412" r="0.5" fill="#cfd8e8" opacity="0.65"/><circle cx="37" cy="74" r="0.5" fill="#e8d89a" opacity="0.55"/><circle cx="91" cy="486" r="0.6" fill="#d8c88a" opacity="0.65"/><circle cx="77" cy="457" r="0.55" fill="#e8d89a" opacity="0.35"/><circle cx="152" cy="164" r="0.6" fill="#f0e6c8" opacity="0.45"/><circle cx="70" cy="417" r="0.55" fill="#e8d89a" opacity="0.65"/><circle cx="54" cy="365" r="0.55" fill="#e8d89a" opacity="0.65"/><circle cx="8" cy="102" r="0.4" fill="#cfd8e8" opacity="0.45"/><circle cx="161" cy="493" r="0.5" fill="#cfd8e8" opacity="0.55"/><circle cx="72" cy="518" r="0.4" fill="#cfd8e8" opacity="0.55"/><circle cx="200" cy="212" r="0.75" fill="#9fc0d8" opacity="0.35"/><circle cx="5" cy="182" r="0.55" fill="#e0b080" opacity="0.65"/><circle cx="206" cy="254" r="0.5" fill="#f0e6c8" opacity="0.65"/><circle cx="29" cy="305" r="0.4" fill="#e0b080" opacity="0.55"/><circle cx="178" cy="434" r="0.6" fill="#d8c88a" opacity="0.55"/><circle cx="186" cy="288" r="0.6" fill="#e8d89a" opacity="0.8"/><circle cx="43" cy="425" r="0.45" fill="#f0e6c8" opacity="0.35"/><circle cx="140" cy="298" r="0.6" fill="#cfd8e8" opacity="0.45"/><circle cx="212" cy="486" r="0.4" fill="#cfd8e8" opacity="0.8"/><circle cx="18" cy="118" r="0.55" fill="#e0b080" opacity="0.65"/><circle cx="37" cy="135" r="0.55" fill="#9fc0d8" opacity="0.45"/><circle cx="162" cy="469" r="0.75" fill="#e8d89a" opacity="0.55"/><circle cx="63" cy="338" r="0.5" fill="#cfd8e8" opacity="0.55"/><circle cx="43" cy="189" r="0.45" fill="#d8c88a" opacity="0.45"/><circle cx="61" cy="497" r="0.45" fill="#cfd8e8" opacity="0.35"/><circle cx="86" cy="536" r="0.6" fill="#9fc0d8" opacity="0.45"/><circle cx="140" cy="120" r="0.55" fill="#e8d89a" opacity="0.35"/><circle cx="1" cy="485" r="0.45" fill="#f0e6c8" opacity="0.55"/><circle cx="9" cy="210" r="0.4" fill="#e8d89a" opacity="0.45"/><circle cx="130" cy="460" r="0.45" fill="#e8d89a" opacity="0.55"/><circle cx="111" cy="156" r="0.6" fill="#cfd8e8" opacity="0.35"/><circle cx="23" cy="351" r="0.6" fill="#cfd8e8" opacity="0.45"/><circle cx="8" cy="232" r="0.4" fill="#d8c88a" opacity="0.55"/><circle cx="8" cy="415" r="0.45" fill="#e8d89a" opacity="0.55"/><circle cx="88" cy="247" r="0.6" fill="#cfd8e8" opacity="0.35"/><circle cx="44" cy="444" r="0.6" fill="#f0e6c8" opacity="0.35"/><circle cx="88" cy="445" r="0.75" fill="#9fc0d8" opacity="0.45"/><circle cx="138" cy="116" r="0.45" fill="#f0e6c8" opacity="0.55"/><circle cx="89" cy="205" r="0.5" fill="#f0e6c8" opacity="0.35"/><circle cx="67" cy="338" r="0.5" fill="#f0e6c8" opacity="0.65"/><circle cx="4" cy="431" r="0.5" fill="#e0b080" opacity="0.45"/><circle cx="84" cy="262" r="0.4" fill="#f0e6c8" opacity="0.45"/><circle cx="92" cy="456" r="0.55" fill="#9fc0d8" opacity="0.55"/><circle cx="100" cy="149" r="0.4" fill="#e8d89a" opacity="0.8"/><circle cx="31" cy="450" r="0.55" fill="#e8d89a" opacity="0.8"/><circle cx="134" cy="246" r="0.6" fill="#d8c88a" opacity="0.45"/><circle cx="75" cy="149" r="0.45" fill="#e8d89a" opacity="0.35"/><circle cx="83" cy="425" r="0.45" fill="#cfd8e8" opacity="0.45"/><circle cx="181" cy="93" r="0.55" fill="#cfd8e8" opacity="0.35"/><circle cx="131" cy="370" r="0.4" fill="#e0b080" opacity="0.8"/><circle cx="149" cy="489" r="0.75" fill="#d8c88a" opacity="0.8"/><circle cx="87" cy="468" r="0.55" fill="#d8c88a" opacity="0.8"/><circle cx="47" cy="260" r="0.6" fill="#d8c88a" opacity="0.65"/><circle cx="78" cy="143" r="0.75" fill="#d8c88a" opacity="0.35"/><circle cx="191" cy="466" r="0.75" fill="#e8d89a" opacity="0.55"/><circle cx="25" cy="353" r="0.6" fill="#e0b080" opacity="0.55"/><circle cx="140" cy="217" r="0.45" fill="#f0e6c8" opacity="0.65"/><circle cx="142" cy="282" r="0.55" fill="#d8c88a" opacity="0.35"/><circle cx="1" cy="534" r="0.55" fill="#d8c88a" opacity="0.65"/><circle cx="165" cy="437" r="0.55" fill="#d8c88a" opacity="0.65"/><circle cx="86" cy="104" r="0.5" fill="#f0e6c8" opacity="0.55"/><circle cx="20" cy="279" r="0.6" fill="#e0b080" opacity="0.35"/><circle cx="9" cy="134" r="0.75" fill="#cfd8e8" opacity="0.8"/><circle cx="17" cy="424" r="0.55" fill="#e0b080" opacity="0.45"/><circle cx="6" cy="104" r="0.6" fill="#e0b080" opacity="0.35"/><circle cx="42" cy="531" r="0.55" fill="#cfd8e8" opacity="0.45"/><circle cx="148" cy="410" r="0.45" fill="#e8d89a" opacity="0.55"/><circle cx="132" cy="191" r="0.5" fill="#9fc0d8" opacity="0.55"/><circle cx="195" cy="286" r="0.5" fill="#9fc0d8" opacity="0.65"/><circle cx="45" cy="196" r="0.6" fill="#d8c88a" opacity="0.55"/><circle cx="80" cy="166" r="0.55" fill="#d8c88a" opacity="0.55"/><circle cx="147" cy="491" r="0.45" fill="#cfd8e8" opacity="0.35"/><circle cx="166" cy="96" r="0.5" fill="#f0e6c8" opacity="0.8"/><circle cx="113" cy="395" r="0.4" fill="#cfd8e8" opacity="0.8"/><circle cx="136" cy="257" r="0.5" fill="#cfd8e8" opacity="0.65"/><circle cx="214" cy="343" r="0.5" fill="#cfd8e8" opacity="0.35"/><circle cx="96" cy="156" r="0.75" fill="#e8d89a" opacity="0.55"/><circle cx="177" cy="191" r="0.75" fill="#9fc0d8" opacity="0.55"/><circle cx="158" cy="422" r="0.45" fill="#d8c88a" opacity="0.55"/><circle cx="133" cy="275" r="0.6" fill="#cfd8e8" opacity="0.35"/><circle cx="29" cy="179" r="0.75" fill="#e8d89a" opacity="0.35"/><circle cx="12" cy="338" r="0.5" fill="#e8d89a" opacity="0.8"/><circle cx="77" cy="178" r="0.6" fill="#cfd8e8" opacity="0.8"/><circle cx="29" cy="244" r="0.55" fill="#d8c88a" opacity="0.45"/><circle cx="3" cy="447" r="0.75" fill="#d8c88a" opacity="0.65"/><circle cx="21" cy="371" r="0.75" fill="#cfd8e8" opacity="0.65"/><circle cx="175" cy="525" r="0.4" fill="#e0b080" opacity="0.8"/><circle cx="193" cy="351" r="0.6" fill="#f0e6c8" opacity="0.8"/><circle cx="202" cy="416" r="0.45" fill="#d8c88a" opacity="0.35"/><circle cx="10" cy="321" r="0.55" fill="#d8c88a" opacity="0.45"/><circle cx="34" cy="499" r="0.4" fill="#e8d89a" opacity="0.8"/><circle cx="119" cy="512" r="0.45" fill="#f0e6c8" opacity="0.45"/><circle cx="112" cy="373" r="0.75" fill="#e0b080" opacity="0.65"/><circle cx="176" cy="155" r="0.5" fill="#e8d89a" opacity="0.55"/><circle cx="135" cy="537" r="0.75" fill="#f0e6c8" opacity="0.8"/><circle cx="1" cy="467" r="0.75" fill="#f0e6c8" opacity="0.35"/><circle cx="160" cy="284" r="0.45" fill="#e8d89a" opacity="0.55"/><circle cx="50" cy="91" r="0.5" fill="#e0b080" opacity="0.55"/><circle cx="154" cy="197" r="0.6" fill="#e0b080" opacity="0.65"/><circle cx="148" cy="501" r="0.5" fill="#cfd8e8" opacity="0.45"/><circle cx="18" cy="310" r="0.45" fill="#cfd8e8" opacity="0.45"/><circle cx="182" cy="168" r="0.45" fill="#e0b080" opacity="0.55"/><circle cx="41" cy="255" r="0.6" fill="#d8c88a" opacity="0.65"/><circle cx="196" cy="368" r="0.75" fill="#e0b080" opacity="0.8"/><circle cx="101" cy="465" r="0.75" fill="#e8d89a" opacity="0.35"/><circle cx="94" cy="411" r="0.6" fill="#cfd8e8" opacity="0.45"/><circle cx="85" cy="346" r="0.6" fill="#d8c88a" opacity="0.45"/><circle cx="7" cy="125" r="0.6" fill="#d8c88a" opacity="0.55"/><circle cx="211" cy="400" r="0.4" fill="#e8d89a" opacity="0.45"/><circle cx="150" cy="369" r="0.75" fill="#e8d89a" opacity="0.35"/><circle cx="14" cy="349" r="0.5" fill="#d8c88a" opacity="0.8"/><circle cx="193" cy="104" r="0.75" fill="#f0e6c8" opacity="0.35"/><circle cx="53" cy="168" r="0.4" fill="#e8d89a" opacity="0.35"/><circle cx="178" cy="368" r="0.5" fill="#f0e6c8" opacity="0.35"/><circle cx="29" cy="443" r="0.75" fill="#d8c88a" opacity="0.55"/><circle cx="69" cy="271" r="0.4" fill="#cfd8e8" opacity="0.55"/><circle cx="201" cy="96" r="0.5" fill="#cfd8e8" opacity="0.8"/><circle cx="109" cy="471" r="0.6" fill="#e0b080" opacity="0.35"/><circle cx="170" cy="88" r="0.6" fill="#e8d89a" opacity="0.55"/><circle cx="101" cy="95" r="0.6" fill="#d8c88a" opacity="0.35"/><circle cx="124" cy="207" r="0.55" fill="#e8d89a" opacity="0.8"/><circle cx="44" cy="429" r="0.4" fill="#e8d89a" opacity="0.55"/><circle cx="106" cy="303" r="0.45" fill="#f0e6c8" opacity="0.8"/><circle cx="75" cy="461" r="0.5" fill="#9fc0d8" opacity="0.45"/><circle cx="61" cy="173" r="0.75" fill="#d8c88a" opacity="0.65"/><circle cx="36" cy="511" r="0.4" fill="#f0e6c8" opacity="0.8"/><circle cx="170" cy="366" r="0.5" fill="#e8d89a" opacity="0.65"/><circle cx="201" cy="489" r="0.75" fill="#e8d89a" opacity="0.65"/><circle cx="192" cy="85" r="0.45" fill="#cfd8e8" opacity="0.55"/><circle cx="92" cy="327" r="0.45" fill="#f0e6c8" opacity="0.45"/><circle cx="204" cy="132" r="0.6" fill="#e0b080" opacity="0.8"/><circle cx="140" cy="236" r="0.5" fill="#9fc0d8" opacity="0.45"/><circle cx="187" cy="283" r="0.6" fill="#e0b080" opacity="0.55"/><circle cx="37" cy="278" r="0.5" fill="#9fc0d8" opacity="0.45"/><circle cx="27" cy="289" r="0.75" fill="#d8c88a" opacity="0.8"/><circle cx="41" cy="214" r="0.75" fill="#9fc0d8" opacity="0.45"/><circle cx="156" cy="528" r="0.75" fill="#cfd8e8" opacity="0.8"/><circle cx="113" cy="148" r="0.5" fill="#d8c88a" opacity="0.55"/><circle cx="211" cy="413" r="0.4" fill="#d8c88a" opacity="0.35"/><circle cx="42" cy="143" r="0.45" fill="#cfd8e8" opacity="0.55"/><circle cx="94" cy="165" r="0.75" fill="#e8d89a" opacity="0.55"/><circle cx="45" cy="254" r="0.4" fill="#e8d89a" opacity="0.65"/><circle cx="185" cy="277" r="0.45" fill="#9fc0d8" opacity="0.55"/><circle cx="100" cy="139" r="0.6" fill="#e0b080" opacity="0.65"/><circle cx="1" cy="186" r="0.55" fill="#e0b080" opacity="0.8"/><circle cx="127" cy="375" r="0.45" fill="#e0b080" opacity="0.8"/><circle cx="184" cy="390" r="0.75" fill="#e8d89a" opacity="0.65"/><circle cx="93" cy="194" r="0.75" fill="#e8d89a" opacity="0.65"/><circle cx="52" cy="260" r="0.75" fill="#e0b080" opacity="0.45"/><circle cx="54" cy="271" r="0.55" fill="#e8d89a" opacity="0.8"/><circle cx="185" cy="315" r="0.75" fill="#d8c88a" opacity="0.55"/><circle cx="168" cy="255" r="0.55" fill="#e8d89a" opacity="0.35"/><circle cx="54" cy="175" r="0.75" fill="#d8c88a" opacity="0.8"/><circle cx="75" cy="469" r="0.55" fill="#9fc0d8" opacity="0.45"/><circle cx="155" cy="312" r="0.75" fill="#cfd8e8" opacity="0.8"/><circle cx="74" cy="420" r="0.55" fill="#d8c88a" opacity="0.45"/><circle cx="85" cy="429" r="0.4" fill="#e0b080" opacity="0.8"/><circle cx="77" cy="99" r="0.5" fill="#f0e6c8" opacity="0.65"/><circle cx="13" cy="108" r="0.55" fill="#e0b080" opacity="0.55"/><circle cx="125" cy="124" r="0.5" fill="#e0b080" opacity="0.65"/><circle cx="203" cy="319" r="0.45" fill="#f0e6c8" opacity="0.65"/><circle cx="46" cy="133" r="0.4" fill="#e0b080" opacity="0.45"/><circle cx="101" cy="335" r="0.45" fill="#d8c88a" opacity="0.55"/><circle cx="144" cy="461" r="0.55" fill="#f0e6c8" opacity="0.55"/><circle cx="164" cy="376" r="0.55" fill="#cfd8e8" opacity="0.45"/><circle cx="58" cy="249" r="0.5" fill="#f0e6c8" opacity="0.45"/><circle cx="104" cy="449" r="0.5" fill="#cfd8e8" opacity="0.45"/><circle cx="141" cy="223" r="0.55" fill="#f0e6c8" opacity="0.8"/><circle cx="138" cy="381" r="0.5" fill="#d8c88a" opacity="0.55"/><circle cx="185" cy="100" r="0.6" fill="#cfd8e8" opacity="0.45"/><circle cx="115" cy="234" r="0.6" fill="#e8d89a" opacity="0.35"/><circle cx="45" cy="107" r="0.5" fill="#cfd8e8" opacity="0.8"/><circle cx="22" cy="140" r="0.45" fill="#d8c88a" opacity="0.65"/><circle cx="75" cy="144" r="0.55" fill="#9fc0d8" opacity="0.45"/><circle cx="132" cy="394" r="0.4" fill="#e0b080" opacity="0.8"/><circle cx="170" cy="465" r="0.45" fill="#f0e6c8" opacity="0.45"/><circle cx="115" cy="419" r="0.55" fill="#e0b080" opacity="0.35"/><circle cx="120" cy="197" r="0.45" fill="#d8c88a" opacity="0.65"/><circle cx="107" cy="100" r="0.55" fill="#d8c88a" opacity="0.65"/><circle cx="53" cy="150" r="0.6" fill="#e0b080" opacity="0.35"/><circle cx="35" cy="223" r="0.75" fill="#9fc0d8" opacity="0.65"/><circle cx="144" cy="466" r="0.5" fill="#f0e6c8" opacity="0.65"/><circle cx="216" cy="389" r="0.45" fill="#e0b080" opacity="0.55"/><circle cx="137" cy="86" r="0.6" fill="#e8d89a" opacity="0.55"/><circle cx="175" cy="117" r="0.55" fill="#f0e6c8" opacity="0.45"/><circle cx="7" cy="408" r="0.75" fill="#d8c88a" opacity="0.55"/><circle cx="20" cy="381" r="0.5" fill="#f0e6c8" opacity="0.8"/><circle cx="120" cy="499" r="0.5" fill="#f0e6c8" opacity="0.55"/><circle cx="91" cy="332" r="0.5" fill="#cfd8e8" opacity="0.55"/><circle cx="179" cy="262" r="0.6" fill="#cfd8e8" opacity="0.8"/><circle cx="74" cy="168" r="0.55" fill="#e8d89a" opacity="0.55"/><circle cx="42" cy="406" r="0.45" fill="#9fc0d8" opacity="0.35"/><circle cx="169" cy="92" r="0.75" fill="#9fc0d8" opacity="0.65"/><circle cx="118" cy="96" r="0.5" fill="#e8d89a" opacity="0.35"/><circle cx="10" cy="457" r="0.55" fill="#9fc0d8" opacity="0.35"/><circle cx="170" cy="498" r="0.6" fill="#f0e6c8" opacity="0.8"/><circle cx="32" cy="388" r="0.75" fill="#9fc0d8" opacity="0.35"/><circle cx="46" cy="384" r="0.55" fill="#e0b080" opacity="0.45"/><circle cx="22" cy="158" r="0.4" fill="#f0e6c8" opacity="0.35"/><circle cx="197" cy="379" r="0.5" fill="#d8c88a" opacity="0.55"/><circle cx="121" cy="193" r="0.5" fill="#d8c88a" opacity="0.65"/><circle cx="7" cy="83" r="0.6" fill="#e0b080" opacity="0.8"/><circle cx="202" cy="99" r="0.6" fill="#9fc0d8" opacity="0.35"/><circle cx="178" cy="434" r="0.55" fill="#9fc0d8" opacity="0.65"/><circle cx="96" cy="80" r="0.55" fill="#9fc0d8" opacity="0.8"/><circle cx="215" cy="381" r="0.45" fill="#f0e6c8" opacity="0.65"/><circle cx="119" cy="112" r="0.55" fill="#d8c88a" opacity="0.45"/><circle cx="135" cy="272" r="0.4" fill="#e0b080" opacity="0.35"/><circle cx="213" cy="474" r="0.45" fill="#e8d89a" opacity="0.45"/><circle cx="102" cy="202" r="0.6" fill="#d8c88a" opacity="0.65"/><circle cx="158" cy="161" r="0.4" fill="#cfd8e8" opacity="0.45"/><circle cx="158" cy="112" r="0.75" fill="#9fc0d8" opacity="0.65"/><circle cx="99" cy="508" r="0.5" fill="#e8d89a" opacity="0.35"/><circle cx="2" cy="80" r="0.75" fill="#e0b080" opacity="0.8"/><circle cx="17" cy="218" r="0.75" fill="#9fc0d8" opacity="0.45"/><circle cx="207" cy="463" r="0.6" fill="#e8d89a" opacity="0.55"/><circle cx="79" cy="342" r="0.55" fill="#f0e6c8" opacity="0.45"/><circle cx="31" cy="445" r="0.5" fill="#e0b080" opacity="0.45"/><circle cx="136" cy="268" r="0.55" fill="#f0e6c8" opacity="0.55"/><circle cx="169" cy="338" r="0.5" fill="#cfd8e8" opacity="0.35"/><circle cx="134" cy="377" r="0.6" fill="#cfd8e8" opacity="0.8"/><circle cx="157" cy="80" r="0.45" fill="#9fc0d8" opacity="0.55"/><circle cx="126" cy="529" r="0.45" fill="#f0e6c8" opacity="0.65"/><circle cx="148" cy="354" r="0.45" fill="#f0e6c8" opacity="0.55"/><circle cx="149" cy="223" r="0.5" fill="#f0e6c8" opacity="0.45"/><circle cx="127" cy="454" r="0.4" fill="#cfd8e8" opacity="0.45"/><circle cx="175" cy="478" r="0.6" fill="#d8c88a" opacity="0.55"/><circle cx="211" cy="445" r="0.6" fill="#e0b080" opacity="0.65"/><circle cx="75" cy="113" r="0.6" fill="#f0e6c8" opacity="0.65"/><circle cx="43" cy="423" r="0.45" fill="#cfd8e8" opacity="0.8"/><circle cx="12" cy="258" r="0.75" fill="#d8c88a" opacity="0.55"/><circle cx="127" cy="77" r="0.55" fill="#f0e6c8" opacity="0.8"/><circle cx="19" cy="450" r="0.4" fill="#d8c88a" opacity="0.65"/><circle cx="125" cy="492" r="0.6" fill="#cfd8e8" opacity="0.65"/><circle cx="109" cy="167" r="0.45" fill="#d8c88a" opacity="0.35"/><circle cx="39" cy="400" r="0.5" fill="#9fc0d8" opacity="0.8"/><circle cx="78" cy="437" r="0.45" fill="#d8c88a" opacity="0.35"/><circle cx="199" cy="303" r="0.4" fill="#cfd8e8" opacity="0.65"/><circle cx="170" cy="146" r="0.6" fill="#e8d89a" opacity="0.55"/><circle cx="61" cy="357" r="0.4" fill="#e8d89a" opacity="0.45"/><circle cx="214" cy="477" r="0.55" fill="#9fc0d8" opacity="0.8"/><circle cx="46" cy="505" r="0.5" fill="#f0e6c8" opacity="0.35"/><circle cx="204" cy="431" r="0.6" fill="#d8c88a" opacity="0.55"/><circle cx="182" cy="231" r="0.45" fill="#f0e6c8" opacity="0.35"/><circle cx="6" cy="89" r="0.5" fill="#e0b080" opacity="0.65"/><circle cx="105" cy="468" r="0.4" fill="#9fc0d8" opacity="0.65"/><circle cx="199" cy="403" r="0.4" fill="#cfd8e8" opacity="0.55"/><circle cx="122" cy="372" r="0.75" fill="#9fc0d8" opacity="0.65"/><circle cx="39" cy="470" r="0.5" fill="#d8c88a" opacity="0.45"/><circle cx="37" cy="513" r="0.5" fill="#e8d89a" opacity="0.8"/><circle cx="195" cy="464" r="0.4" fill="#cfd8e8" opacity="0.8"/><circle cx="153" cy="375" r="0.55" fill="#e8d89a" opacity="0.35"/><circle cx="31" cy="426" r="0.45" fill="#e0b080" opacity="0.55"/><circle cx="127" cy="279" r="0.75" fill="#e8d89a" opacity="0.65"/><circle cx="70" cy="193" r="0.4" fill="#cfd8e8" opacity="0.65"/><circle cx="82" cy="279" r="0.45" fill="#e0b080" opacity="0.35"/><circle cx="101" cy="499" r="0.4" fill="#d8c88a" opacity="0.45"/><circle cx="17" cy="362" r="0.5" fill="#e0b080" opacity="0.45"/><circle cx="168" cy="520" r="0.55" fill="#e8d89a" opacity="0.35"/><circle cx="98" cy="232" r="0.45" fill="#f0e6c8" opacity="0.35"/><circle cx="136" cy="140" r="0.45" fill="#e0b080" opacity="0.35"/><circle cx="39" cy="284" r="0.45" fill="#f0e6c8" opacity="0.45"/><circle cx="58" cy="265" r="0.45" fill="#e8d89a" opacity="0.55"/><circle cx="123" cy="211" r="0.45" fill="#cfd8e8" opacity="0.65"/><circle cx="24" cy="286" r="0.55" fill="#e8d89a" opacity="0.45"/><circle cx="211" cy="100" r="0.75" fill="#d8c88a" opacity="0.8"/><circle cx="103" cy="207" r="0.5" fill="#d8c88a" opacity="0.55"/><circle cx="93" cy="195" r="0.45" fill="#d8c88a" opacity="0.35"/><circle cx="84" cy="267" r="0.45" fill="#e8d89a" opacity="0.55"/><circle cx="31" cy="372" r="0.55" fill="#9fc0d8" opacity="0.55"/><circle cx="110" cy="280" r="0.6" fill="#cfd8e8" opacity="0.45"/><circle cx="78" cy="92" r="0.55" fill="#d8c88a" opacity="0.55"/><circle cx="123" cy="137" r="0.45" fill="#9fc0d8" opacity="0.45"/><circle cx="154" cy="165" r="0.4" fill="#e8d89a" opacity="0.8"/><circle cx="158" cy="429" r="0.45" fill="#d8c88a" opacity="0.45"/><circle cx="132" cy="404" r="0.45" fill="#9fc0d8" opacity="0.55"/><circle cx="44" cy="104" r="0.75" fill="#9fc0d8" opacity="0.65"/><circle cx="182" cy="501" r="0.6" fill="#cfd8e8" opacity="0.55"/><circle cx="61" cy="371" r="0.55" fill="#e8d89a" opacity="0.35"/><circle cx="88" cy="429" r="0.45" fill="#e0b080" opacity="0.55"/><circle cx="54" cy="336" r="0.5" fill="#e8d89a" opacity="0.45"/><circle cx="152" cy="341" r="0.4" fill="#cfd8e8" opacity="0.8"/><circle cx="201" cy="525" r="0.4" fill="#e8d89a" opacity="0.55"/><circle cx="154" cy="454" r="0.5" fill="#e0b080" opacity="0.65"/><circle cx="124" cy="492" r="0.5" fill="#e8d89a" opacity="0.65"/><circle cx="96" cy="85" r="0.6" fill="#d8c88a" opacity="0.35"/><circle cx="53" cy="114" r="0.6" fill="#d8c88a" opacity="0.45"/><circle cx="22" cy="190" r="0.4" fill="#e8d89a" opacity="0.35"/><circle cx="200" cy="418" r="0.5" fill="#e8d89a" opacity="0.8"/><circle cx="138" cy="290" r="0.45" fill="#e0b080" opacity="0.65"/><circle cx="22" cy="479" r="0.75" fill="#d8c88a" opacity="0.35"/><circle cx="59" cy="290" r="0.6" fill="#9fc0d8" opacity="0.55"/><circle cx="24" cy="130" r="0.45" fill="#9fc0d8" opacity="0.8"/><circle cx="49" cy="179" r="0.75" fill="#9fc0d8" opacity="0.65"/><circle cx="161" cy="150" r="0.4" fill="#e0b080" opacity="0.65"/><circle cx="150" cy="352" r="0.6" fill="#9fc0d8" opacity="0.35"/><circle cx="85" cy="513" r="0.5" fill="#cfd8e8" opacity="0.65"/><circle cx="52" cy="229" r="0.55" fill="#9fc0d8" opacity="0.55"/><circle cx="176" cy="469" r="0.4" fill="#cfd8e8" opacity="0.8"/><circle cx="32" cy="391" r="0.5" fill="#d8c88a" opacity="0.65"/><circle cx="143" cy="78" r="0.4" fill="#9fc0d8" opacity="0.45"/><circle cx="15" cy="275" r="0.6" fill="#e0b080" opacity="0.35"/><circle cx="49" cy="269" r="0.55" fill="#f0e6c8" opacity="0.35"/><circle cx="175" cy="486" r="0.4" fill="#e8d89a" opacity="0.8"/><circle cx="57" cy="390" r="0.5" fill="#e0b080" opacity="0.8"/><circle cx="174" cy="90" r="0.4" fill="#cfd8e8" opacity="0.35"/><circle cx="112" cy="276" r="0.4" fill="#cfd8e8" opacity="0.35"/><circle cx="66" cy="375" r="0.4" fill="#e8d89a" opacity="0.8"/><circle cx="207" cy="503" r="0.5" fill="#e8d89a" opacity="0.65"/><circle cx="127" cy="508" r="0.55" fill="#e8d89a" opacity="0.8"/><circle cx="28" cy="210" r="0.55" fill="#9fc0d8" opacity="0.55"/><circle cx="59" cy="417" r="0.75" fill="#9fc0d8" opacity="0.55"/><circle cx="181" cy="358" r="0.6" fill="#d8c88a" opacity="0.65"/><circle cx="43" cy="405" r="0.55" fill="#9fc0d8" opacity="0.55"/><circle cx="132" cy="292" r="0.5" fill="#e8d89a" opacity="0.45"/><circle cx="72" cy="161" r="0.6" fill="#f0e6c8" opacity="0.8"/><circle cx="86" cy="505" r="0.45" fill="#d8c88a" opacity="0.55"/><circle cx="120" cy="302" r="0.5" fill="#d8c88a" opacity="0.55"/><circle cx="12" cy="83" r="0.6" fill="#e8d89a" opacity="0.8"/><circle cx="188" cy="278" r="0.4" fill="#9fc0d8" opacity="0.65"/><circle cx="180" cy="238" r="0.4" fill="#9fc0d8" opacity="0.45"/><circle cx="214" cy="389" r="0.45" fill="#f0e6c8" opacity="0.55"/><circle cx="144" cy="139" r="0.45" fill="#9fc0d8" opacity="0.8"/><circle cx="184" cy="456" r="0.6" fill="#e8d89a" opacity="0.65"/><circle cx="58" cy="368" r="0.75" fill="#e0b080" opacity="0.45"/><circle cx="89" cy="121" r="0.55" fill="#9fc0d8" opacity="0.8"/><circle cx="25" cy="259" r="0.6" fill="#d8c88a" opacity="0.65"/><circle cx="184" cy="203" r="0.6" fill="#9fc0d8" opacity="0.35"/><circle cx="82" cy="284" r="0.55" fill="#cfd8e8" opacity="0.55"/><circle cx="63" cy="255" r="0.6" fill="#9fc0d8" opacity="0.65"/><circle cx="140" cy="76" r="0.75" fill="#f0e6c8" opacity="0.65"/><circle cx="96" cy="159" r="0.5" fill="#d8c88a" opacity="0.65"/><circle cx="124" cy="345" r="0.4" fill="#cfd8e8" opacity="0.55"/><circle cx="209" cy="357" r="0.45" fill="#cfd8e8" opacity="0.45"/><circle cx="210" cy="489" r="0.4" fill="#e8d89a" opacity="0.35"/><circle cx="55" cy="491" r="0.5" fill="#9fc0d8" opacity="0.55"/><circle cx="116" cy="539" r="0.6" fill="#9fc0d8" opacity="0.65"/><circle cx="84" cy="240" r="0.6" fill="#e0b080" opacity="0.55"/><circle cx="98" cy="78" r="0.4" fill="#9fc0d8" opacity="0.45"/><circle cx="21" cy="248" r="0.55" fill="#e0b080" opacity="0.8"/><circle cx="201" cy="145" r="0.45" fill="#f0e6c8" opacity="0.65"/><circle cx="87" cy="431" r="0.6" fill="#cfd8e8" opacity="0.8"/><circle cx="161" cy="116" r="0.5" fill="#cfd8e8" opacity="0.55"/><circle cx="211" cy="459" r="0.6" fill="#d8c88a" opacity="0.35"/><circle cx="142" cy="211" r="0.5" fill="#9fc0d8" opacity="0.65"/><circle cx="136" cy="318" r="0.6" fill="#d8c88a" opacity="0.8"/><circle cx="193" cy="266" r="0.4" fill="#e0b080" opacity="0.8"/><circle cx="130" cy="238" r="0.75" fill="#e0b080" opacity="0.35"/><circle cx="149" cy="78" r="0.4" fill="#cfd8e8" opacity="0.8"/><circle cx="1" cy="215" r="0.4" fill="#9fc0d8" opacity="0.35"/><circle cx="144" cy="165" r="0.55" fill="#9fc0d8" opacity="0.8"/><circle cx="57" cy="375" r="0.6" fill="#9fc0d8" opacity="0.45"/><circle cx="124" cy="265" r="0.4" fill="#d8c88a" opacity="0.45"/><circle cx="112" cy="311" r="0.4" fill="#e8d89a" opacity="0.35"/><circle cx="37" cy="317" r="0.55" fill="#9fc0d8" opacity="0.65"/><circle cx="174" cy="102" r="0.4" fill="#e0b080" opacity="0.8"/><circle cx="70" cy="407" r="0.5" fill="#cfd8e8" opacity="0.45"/><circle cx="7" cy="367" r="0.6" fill="#e8d89a" opacity="0.55"/><circle cx="41" cy="364" r="0.4" fill="#e8d89a" opacity="0.45"/><circle cx="192" cy="345" r="0.4" fill="#f0e6c8" opacity="0.35"/><circle cx="134" cy="189" r="0.4" fill="#d8c88a" opacity="0.8"/><circle cx="185" cy="220" r="0.55" fill="#cfd8e8" opacity="0.65"/><circle cx="130" cy="521" r="0.55" fill="#e8d89a" opacity="0.45"/><circle cx="146" cy="388" r="0.6" fill="#d8c88a" opacity="0.65"/><circle cx="67" cy="482" r="0.55" fill="#e8d89a" opacity="0.45"/><circle cx="19" cy="152" r="0.55" fill="#d8c88a" opacity="0.35"/><circle cx="210" cy="209" r="0.6" fill="#cfd8e8" opacity="0.35"/><circle cx="72" cy="480" r="0.5" fill="#f0e6c8" opacity="0.35"/><circle cx="208" cy="270" r="0.5" fill="#9fc0d8" opacity="0.45"/><circle cx="84" cy="291" r="0.5" fill="#d8c88a" opacity="0.65"/><circle cx="8" cy="383" r="0.5" fill="#d8c88a" opacity="0.45"/><circle cx="152" cy="116" r="0.5" fill="#9fc0d8" opacity="0.45"/><circle cx="120" cy="291" r="0.45" fill="#d8c88a" opacity="0.55"/><circle cx="76" cy="410" r="0.55" fill="#e0b080" opacity="0.8"/><circle cx="45" cy="517" r="0.6" fill="#d8c88a" opacity="0.45"/><circle cx="185" cy="388" r="0.75" fill="#cfd8e8" opacity="0.8"/><circle cx="194" cy="347" r="0.5" fill="#9fc0d8" opacity="0.45"/><circle cx="87" cy="311" r="0.45" fill="#e8d89a" opacity="0.8"/><circle cx="20" cy="471" r="0.75" fill="#f0e6c8" opacity="0.35"/><circle cx="142" cy="338" r="0.5" fill="#e8d89a" opacity="0.65"/><circle cx="154" cy="397" r="0.45" fill="#cfd8e8" opacity="0.45"/><circle cx="143" cy="124" r="0.6" fill="#cfd8e8" opacity="0.8"/><circle cx="164" cy="163" r="0.75" fill="#cfd8e8" opacity="0.35"/><circle cx="49" cy="132" r="0.75" fill="#f0e6c8" opacity="0.55"/><circle cx="77" cy="467" r="0.55" fill="#e0b080" opacity="0.45"/><circle cx="202" cy="155" r="0.5" fill="#e0b080" opacity="0.55"/><circle cx="194" cy="85" r="0.75" fill="#e0b080" opacity="0.65"/><circle cx="54" cy="468" r="0.5" fill="#e0b080" opacity="0.35"/><circle cx="39" cy="127" r="0.6" fill="#e0b080" opacity="0.45"/><circle cx="154" cy="92" r="0.4" fill="#9fc0d8" opacity="0.45"/><circle cx="93" cy="427" r="0.45" fill="#f0e6c8" opacity="0.35"/><circle cx="119" cy="367" r="0.45" fill="#9fc0d8" opacity="0.45"/><circle cx="123" cy="408" r="0.5" fill="#f0e6c8" opacity="0.8"/><circle cx="75" cy="73" r="0.75" fill="#cfd8e8" opacity="0.35"/><circle cx="189" cy="346" r="0.75" fill="#e8d89a" opacity="0.45"/><circle cx="147" cy="90" r="0.5" fill="#d8c88a" opacity="0.55"/><circle cx="162" cy="113" r="0.75" fill="#e0b080" opacity="0.65"/><circle cx="216" cy="360" r="0.45" fill="#cfd8e8" opacity="0.8"/><circle cx="19" cy="515" r="0.55" fill="#f0e6c8" opacity="0.55"/><circle cx="149" cy="418" r="0.75" fill="#e0b080" opacity="0.65"/><circle cx="110" cy="389" r="0.45" fill="#f0e6c8" opacity="0.8"/><circle cx="183" cy="436" r="0.55" fill="#d8c88a" opacity="0.35"/><circle cx="206" cy="458" r="0.6" fill="#cfd8e8" opacity="0.45"/><circle cx="118" cy="526" r="0.75" fill="#d8c88a" opacity="0.8"/><circle cx="56" cy="523" r="0.45" fill="#cfd8e8" opacity="0.55"/><circle cx="89" cy="167" r="0.5" fill="#d8c88a" opacity="0.45"/><circle cx="148" cy="300" r="0.55" fill="#d8c88a" opacity="0.45"/><circle cx="1" cy="396" r="0.45" fill="#e0b080" opacity="0.55"/><circle cx="151" cy="135" r="0.75" fill="#d8c88a" opacity="0.8"/><circle cx="122" cy="229" r="0.4" fill="#9fc0d8" opacity="0.65"/><circle cx="164" cy="152" r="0.75" fill="#d8c88a" opacity="0.8"/><circle cx="212" cy="465" r="0.55" fill="#d8c88a" opacity="0.35"/><circle cx="149" cy="79" r="0.55" fill="#d8c88a" opacity="0.35"/><circle cx="13" cy="204" r="0.45" fill="#e8d89a" opacity="0.55"/><circle cx="97" cy="126" r="0.5" fill="#f0e6c8" opacity="0.65"/><circle cx="123" cy="208" r="0.6" fill="#e8d89a" opacity="0.35"/><circle cx="2" cy="536" r="0.55" fill="#e8d89a" opacity="0.55"/><circle cx="212" cy="336" r="0.4" fill="#e0b080" opacity="0.65"/><circle cx="207" cy="301" r="0.6" fill="#cfd8e8" opacity="0.35"/><circle cx="78" cy="115" r="0.5" fill="#e0b080" opacity="0.8"/><circle cx="202" cy="378" r="0.5" fill="#e0b080" opacity="0.45"/><circle cx="17" cy="422" r="0.4" fill="#f0e6c8" opacity="0.45"/><circle cx="64" cy="160" r="0.75" fill="#9fc0d8" opacity="0.45"/><circle cx="22" cy="409" r="0.5" fill="#e0b080" opacity="0.8"/><circle cx="71" cy="159" r="0.5" fill="#cfd8e8" opacity="0.45"/><circle cx="80" cy="330" r="0.5" fill="#cfd8e8" opacity="0.45"/><circle cx="12" cy="123" r="0.75" fill="#e0b080" opacity="0.65"/><circle cx="196" cy="514" r="0.55" fill="#f0e6c8" opacity="0.65"/><circle cx="158" cy="538" r="0.6" fill="#9fc0d8" opacity="0.35"/><circle cx="31" cy="179" r="0.45" fill="#f0e6c8" opacity="0.65"/><circle cx="19" cy="92" r="0.55" fill="#f0e6c8" opacity="0.45"/><circle cx="47" cy="247" r="0.4" fill="#9fc0d8" opacity="0.8"/><circle cx="92" cy="205" r="0.75" fill="#e8d89a" opacity="0.8"/><circle cx="154" cy="489" r="0.4" fill="#f0e6c8" opacity="0.35"/><circle cx="144" cy="459" r="0.75" fill="#d8c88a" opacity="0.65"/><circle cx="64" cy="280" r="0.6" fill="#e0b080" opacity="0.55"/><circle cx="123" cy="292" r="0.6" fill="#cfd8e8" opacity="0.8"/><circle cx="99" cy="527" r="0.75" fill="#d8c88a" opacity="0.65"/><circle cx="208" cy="362" r="0.4" fill="#e0b080" opacity="0.55"/><circle cx="132" cy="212" r="0.6" fill="#f0e6c8" opacity="0.55"/><circle cx="104" cy="375" r="0.5" fill="#cfd8e8" opacity="0.8"/><circle cx="191" cy="86" r="0.45" fill="#d8c88a" opacity="0.65"/><circle cx="149" cy="142" r="0.6" fill="#cfd8e8" opacity="0.8"/><circle cx="125" cy="267" r="0.6" fill="#d8c88a" opacity="0.8"/><circle cx="95" cy="195" r="0.45" fill="#d8c88a" opacity="0.45"/><circle cx="118" cy="125" r="0.5" fill="#e0b080" opacity="0.35"/><circle cx="41" cy="386" r="0.75" fill="#f0e6c8" opacity="0.45"/><circle cx="120" cy="179" r="0.6" fill="#e0b080" opacity="0.35"/><circle cx="159" cy="498" r="0.6" fill="#e8d89a" opacity="0.65"/><circle cx="147" cy="447" r="0.45" fill="#9fc0d8" opacity="0.8"/><circle cx="110" cy="465" r="0.4" fill="#e0b080" opacity="0.8"/><circle cx="22" cy="461" r="0.55" fill="#9fc0d8" opacity="0.45"/><circle cx="209" cy="162" r="0.55" fill="#e8d89a" opacity="0.45"/><circle cx="81" cy="362" r="0.55" fill="#d8c88a" opacity="0.35"/><circle cx="80" cy="80" r="0.6" fill="#d8c88a" opacity="0.65"/><circle cx="65" cy="403" r="0.55" fill="#e8d89a" opacity="0.8"/><circle cx="214" cy="167" r="0.4" fill="#e0b080" opacity="0.55"/><circle cx="36" cy="421" r="0.5" fill="#e0b080" opacity="0.35"/><circle cx="178" cy="130" r="0.5" fill="#9fc0d8" opacity="0.8"/><circle cx="205" cy="410" r="0.4" fill="#9fc0d8" opacity="0.55"/><circle cx="22" cy="329" r="0.6" fill="#e8d89a" opacity="0.35"/><circle cx="200" cy="388" r="0.5" fill="#cfd8e8" opacity="0.45"/><circle cx="150" cy="83" r="0.6" fill="#f0e6c8" opacity="0.35"/><circle cx="171" cy="301" r="0.4" fill="#cfd8e8" opacity="0.45"/><circle cx="32" cy="508" r="0.75" fill="#e0b080" opacity="0.65"/><circle cx="181" cy="348" r="0.5" fill="#9fc0d8" opacity="0.55"/><circle cx="205" cy="79" r="0.5" fill="#d8c88a" opacity="0.65"/><circle cx="108" cy="481" r="0.4" fill="#e8d89a" opacity="0.45"/><circle cx="134" cy="374" r="0.6" fill="#f0e6c8" opacity="0.65"/><circle cx="209" cy="397" r="0.55" fill="#f0e6c8" opacity="0.45"/><circle cx="189" cy="358" r="0.4" fill="#cfd8e8" opacity="0.55"/><circle cx="114" cy="218" r="0.45" fill="#9fc0d8" opacity="0.8"/><circle cx="9" cy="152" r="0.5" fill="#e0b080" opacity="0.65"/><circle cx="72" cy="292" r="0.5" fill="#cfd8e8" opacity="0.35"/><circle cx="72" cy="299" r="0.45" fill="#e8d89a" opacity="0.45"/><circle cx="99" cy="534" r="0.4" fill="#e0b080" opacity="0.45"/><circle cx="157" cy="140" r="0.55" fill="#cfd8e8" opacity="0.35"/><circle cx="108" cy="195" r="0.6" fill="#9fc0d8" opacity="0.8"/><circle cx="126" cy="138" r="0.75" fill="#e8d89a" opacity="0.8"/><circle cx="195" cy="117" r="0.45" fill="#f0e6c8" opacity="0.8"/><circle cx="137" cy="242" r="0.5" fill="#d8c88a" opacity="0.45"/><circle cx="147" cy="215" r="0.5" fill="#e0b080" opacity="0.55"/><circle cx="110" cy="370" r="0.5" fill="#9fc0d8" opacity="0.65"/><circle cx="72" cy="402" r="0.75" fill="#cfd8e8" opacity="0.65"/><circle cx="109" cy="491" r="0.45" fill="#cfd8e8" opacity="0.45"/><circle cx="29" cy="76" r="0.75" fill="#f0e6c8" opacity="0.65"/><circle cx="96" cy="339" r="0.5" fill="#d8c88a" opacity="0.8"/><circle cx="14" cy="214" r="0.5" fill="#cfd8e8" opacity="0.8"/><circle cx="119" cy="511" r="0.5" fill="#e8d89a" opacity="0.45"/><circle cx="126" cy="110" r="0.45" fill="#cfd8e8" opacity="0.8"/><circle cx="76" cy="291" r="0.75" fill="#f0e6c8" opacity="0.35"/><circle cx="181" cy="222" r="0.45" fill="#cfd8e8" opacity="0.55"/><circle cx="118" cy="427" r="0.75" fill="#cfd8e8" opacity="0.45"/><circle cx="152" cy="175" r="0.55" fill="#f0e6c8" opacity="0.45"/><circle cx="193" cy="205" r="0.6" fill="#e0b080" opacity="0.35"/><circle cx="42" cy="416" r="0.45" fill="#9fc0d8" opacity="0.35"/><circle cx="17" cy="451" r="0.6" fill="#cfd8e8" opacity="0.45"/><circle cx="1" cy="199" r="0.75" fill="#e8d89a" opacity="0.55"/><circle cx="199" cy="172" r="0.5" fill="#e0b080" opacity="0.35"/><circle cx="140" cy="262" r="0.75" fill="#cfd8e8" opacity="0.45"/><circle cx="12" cy="266" r="0.4" fill="#e8d89a" opacity="0.8"/><circle cx="72" cy="304" r="0.6" fill="#f0e6c8" opacity="0.55"/><circle cx="203" cy="481" r="0.4" fill="#cfd8e8" opacity="0.8"/><circle cx="141" cy="219" r="0.55" fill="#9fc0d8" opacity="0.55"/><circle cx="34" cy="82" r="0.45" fill="#d8c88a" opacity="0.8"/><circle cx="166" cy="115" r="0.5" fill="#f0e6c8" opacity="0.55"/><circle cx="116" cy="348" r="0.6" fill="#d8c88a" opacity="0.8"/><circle cx="124" cy="180" r="0.6" fill="#cfd8e8" opacity="0.65"/><circle cx="165" cy="435" r="0.5" fill="#e0b080" opacity="0.8"/><circle cx="211" cy="285" r="0.5" fill="#cfd8e8" opacity="0.8"/><circle cx="114" cy="201" r="0.5" fill="#e8d89a" opacity="0.8"/><circle cx="103" cy="379" r="0.5" fill="#d8c88a" opacity="0.45"/><circle cx="87" cy="530" r="0.4" fill="#9fc0d8" opacity="0.45"/><circle cx="26" cy="327" r="0.45" fill="#9fc0d8" opacity="0.45"/><circle cx="56" cy="356" r="0.75" fill="#d8c88a" opacity="0.45"/><circle cx="188" cy="473" r="0.45" fill="#9fc0d8" opacity="0.35"/><circle cx="76" cy="404" r="0.55" fill="#f0e6c8" opacity="0.45"/><circle cx="137" cy="234" r="0.55" fill="#f0e6c8" opacity="0.45"/><circle cx="70" cy="495" r="0.4" fill="#e0b080" opacity="0.35"/><circle cx="14" cy="374" r="0.55" fill="#e0b080" opacity="0.55"/><circle cx="13" cy="336" r="0.55" fill="#f0e6c8" opacity="0.45"/><circle cx="7" cy="83" r="0.75" fill="#f0e6c8" opacity="0.45"/><circle cx="50" cy="168" r="0.55" fill="#e0b080" opacity="0.55"/><circle cx="64" cy="537" r="0.45" fill="#9fc0d8" opacity="0.45"/><circle cx="103" cy="509" r="0.5" fill="#d8c88a" opacity="0.55"/><circle cx="61" cy="228" r="0.55" fill="#d8c88a" opacity="0.45"/><circle cx="69" cy="358" r="0.55" fill="#d8c88a" opacity="0.8"/><circle cx="11" cy="438" r="0.75" fill="#cfd8e8" opacity="0.35"/><circle cx="168" cy="476" r="0.45" fill="#f0e6c8" opacity="0.45"/><circle cx="215" cy="212" r="0.4" fill="#e8d89a" opacity="0.45"/><circle cx="210" cy="77" r="0.5" fill="#d8c88a" opacity="0.8"/><circle cx="159" cy="119" r="0.45" fill="#f0e6c8" opacity="0.65"/><circle cx="19" cy="232" r="0.75" fill="#e0b080" opacity="0.65"/><circle cx="191" cy="530" r="0.4" fill="#9fc0d8" opacity="0.45"/><circle cx="43" cy="366" r="0.4" fill="#e8d89a" opacity="0.45"/><circle cx="109" cy="181" r="0.55" fill="#e0b080" opacity="0.35"/><circle cx="157" cy="96" r="0.5" fill="#e8d89a" opacity="0.35"/><circle cx="26" cy="301" r="0.45" fill="#9fc0d8" opacity="0.65"/><circle cx="1" cy="178" r="0.6" fill="#d8c88a" opacity="0.8"/><circle cx="108" cy="125" r="0.5" fill="#f0e6c8" opacity="0.35"/><circle cx="75" cy="173" r="0.45" fill="#e0b080" opacity="0.35"/><circle cx="59" cy="156" r="0.5" fill="#cfd8e8" opacity="0.35"/><circle cx="209" cy="165" r="0.4" fill="#f0e6c8" opacity="0.8"/><circle cx="206" cy="198" r="0.5" fill="#e0b080" opacity="0.35"/><circle cx="141" cy="327" r="0.6" fill="#cfd8e8" opacity="0.65"/><circle cx="212" cy="481" r="0.75" fill="#cfd8e8" opacity="0.65"/><circle cx="91" cy="325" r="0.55" fill="#d8c88a" opacity="0.65"/><circle cx="164" cy="485" r="0.45" fill="#e0b080" opacity="0.35"/><circle cx="52" cy="307" r="0.5" fill="#e0b080" opacity="0.8"/><circle cx="158" cy="536" r="0.45" fill="#e0b080" opacity="0.35"/><circle cx="19" cy="363" r="0.4" fill="#e0b080" opacity="0.35"/><circle cx="88" cy="334" r="0.75" fill="#e0b080" opacity="0.65"/><circle cx="119" cy="220" r="0.6" fill="#e8d89a" opacity="0.65"/><circle cx="161" cy="472" r="0.6" fill="#cfd8e8" opacity="0.8"/><circle cx="118" cy="250" r="0.75" fill="#e0b080" opacity="0.65"/><circle cx="77" cy="103" r="0.6" fill="#cfd8e8" opacity="0.8"/><circle cx="142" cy="459" r="0.4" fill="#e0b080" opacity="0.8"/><circle cx="143" cy="504" r="0.5" fill="#cfd8e8" opacity="0.65"/><circle cx="185" cy="235" r="0.6" fill="#f0e6c8" opacity="0.8"/><circle cx="48" cy="139" r="0.6" fill="#cfd8e8" opacity="0.8"/><circle cx="44" cy="152" r="0.5" fill="#d8c88a" opacity="0.45"/><circle cx="33" cy="382" r="0.45" fill="#e0b080" opacity="0.35"/><circle cx="70" cy="242" r="0.55" fill="#e8d89a" opacity="0.65"/><circle cx="33" cy="190" r="0.4" fill="#cfd8e8" opacity="0.55"/><circle cx="143" cy="317" r="0.5" fill="#f0e6c8" opacity="0.35"/><circle cx="59" cy="209" r="0.55" fill="#e0b080" opacity="0.35"/><circle cx="97" cy="296" r="0.45" fill="#9fc0d8" opacity="0.45"/><circle cx="1" cy="134" r="0.55" fill="#9fc0d8" opacity="0.45"/><circle cx="135" cy="317" r="0.55" fill="#cfd8e8" opacity="0.35"/><circle cx="120" cy="73" r="0.5" fill="#e8d89a" opacity="0.8"/><circle cx="39" cy="408" r="0.5" fill="#cfd8e8" opacity="0.55"/><circle cx="52" cy="463" r="0.4" fill="#9fc0d8" opacity="0.65"/><circle cx="186" cy="167" r="0.55" fill="#cfd8e8" opacity="0.8"/><circle cx="169" cy="503" r="0.75" fill="#f0e6c8" opacity="0.65"/><circle cx="79" cy="406" r="0.5" fill="#f0e6c8" opacity="0.65"/><circle cx="140" cy="452" r="0.5" fill="#d8c88a" opacity="0.65"/><circle cx="184" cy="133" r="0.6" fill="#d8c88a" opacity="0.8"/><circle cx="80" cy="384" r="0.5" fill="#e8d89a" opacity="0.35"/><circle cx="163" cy="250" r="0.6" fill="#f0e6c8" opacity="0.65"/><circle cx="202" cy="373" r="0.4" fill="#e8d89a" opacity="0.8"/><circle cx="122" cy="510" r="0.75" fill="#f0e6c8" opacity="0.65"/><circle cx="215" cy="155" r="0.4" fill="#f0e6c8" opacity="0.65"/><circle cx="106" cy="312" r="0.4" fill="#e0b080" opacity="0.45"/><circle cx="160" cy="261" r="0.4" fill="#e0b080" opacity="0.55"/><circle cx="120" cy="432" r="0.55" fill="#e8d89a" opacity="0.35"/><circle cx="48" cy="109" r="0.4" fill="#e8d89a" opacity="0.65"/><circle cx="19" cy="425" r="0.6" fill="#f0e6c8" opacity="0.35"/><circle cx="178" cy="166" r="0.5" fill="#f0e6c8" opacity="0.35"/><circle cx="119" cy="422" r="0.6" fill="#d8c88a" opacity="0.65"/><circle cx="176" cy="480" r="0.45" fill="#cfd8e8" opacity="0.55"/><circle cx="41" cy="532" r="0.45" fill="#9fc0d8" opacity="0.55"/><circle cx="112" cy="113" r="0.55" fill="#cfd8e8" opacity="0.55"/><circle cx="120" cy="312" r="0.55" fill="#e0b080" opacity="0.35"/><circle cx="66" cy="189" r="0.55" fill="#f0e6c8" opacity="0.8"/><circle cx="56" cy="167" r="0.4" fill="#d8c88a" opacity="0.8"/><circle cx="141" cy="508" r="0.75" fill="#f0e6c8" opacity="0.8"/><circle cx="31" cy="508" r="0.5" fill="#d8c88a" opacity="0.65"/><circle cx="199" cy="333" r="0.4" fill="#e0b080" opacity="0.55"/><circle cx="2" cy="105" r="0.6" fill="#cfd8e8" opacity="0.35"/><circle cx="59" cy="445" r="0.5" fill="#d8c88a" opacity="0.45"/><circle cx="173" cy="350" r="0.55" fill="#f0e6c8" opacity="0.65"/><circle cx="44" cy="168" r="0.45" fill="#f0e6c8" opacity="0.35"/><circle cx="11" cy="476" r="0.4" fill="#9fc0d8" opacity="0.65"/><circle cx="39" cy="504" r="0.6" fill="#e0b080" opacity="0.45"/><circle cx="108" cy="388" r="0.75" fill="#e0b080" opacity="0.55"/><circle cx="173" cy="323" r="0.45" fill="#d8c88a" opacity="0.45"/><circle cx="112" cy="290" r="0.45" fill="#e8d89a" opacity="0.35"/><circle cx="90" cy="381" r="0.5" fill="#e0b080" opacity="0.65"/><circle cx="148" cy="145" r="0.4" fill="#e0b080" opacity="0.45"/><circle cx="9" cy="463" r="0.5" fill="#d8c88a" opacity="0.8"/><circle cx="172" cy="403" r="0.75" fill="#d8c88a" opacity="0.55"/><circle cx="197" cy="224" r="0.45" fill="#d8c88a" opacity="0.45"/><circle cx="85" cy="88" r="0.55" fill="#d8c88a" opacity="0.55"/><circle cx="48" cy="328" r="0.4" fill="#d8c88a" opacity="0.65"/><circle cx="32" cy="159" r="0.5" fill="#e0b080" opacity="0.65"/><circle cx="25" cy="460" r="0.4" fill="#e0b080" opacity="0.45"/><circle cx="215" cy="512" r="0.6" fill="#e8d89a" opacity="0.55"/><circle cx="106" cy="81" r="0.55" fill="#e8d89a" opacity="0.45"/><circle cx="105" cy="476" r="0.6" fill="#9fc0d8" opacity="0.8"/><circle cx="163" cy="167" r="0.55" fill="#cfd8e8" opacity="0.45"/><circle cx="125" cy="213" r="0.6" fill="#9fc0d8" opacity="0.35"/><circle cx="209" cy="234" r="0.45" fill="#e0b080" opacity="0.55"/><circle cx="11" cy="229" r="0.55" fill="#f0e6c8" opacity="0.45"/><circle cx="71" cy="243" r="0.4" fill="#cfd8e8" opacity="0.35"/><circle cx="156" cy="285" r="0.75" fill="#9fc0d8" opacity="0.35"/><circle cx="170" cy="351" r="0.55" fill="#e8d89a" opacity="0.35"/><circle cx="9" cy="344" r="0.55" fill="#e0b080" opacity="0.45"/><circle cx="90" cy="464" r="0.4" fill="#cfd8e8" opacity="0.45"/><circle cx="78" cy="383" r="0.4" fill="#cfd8e8" opacity="0.35"/><circle cx="182" cy="481" r="0.55" fill="#cfd8e8" opacity="0.45"/><circle cx="56" cy="123" r="0.45" fill="#e8d89a" opacity="0.45"/><circle cx="107" cy="323" r="0.4" fill="#cfd8e8" opacity="0.65"/><circle cx="53" cy="338" r="0.4" fill="#9fc0d8" opacity="0.55"/><circle cx="79" cy="165" r="0.55" fill="#9fc0d8" opacity="0.45"/><circle cx="213" cy="497" r="0.75" fill="#9fc0d8" opacity="0.8"/><circle cx="52" cy="117" r="0.4" fill="#e8d89a" opacity="0.65"/><circle cx="171" cy="401" r="0.45" fill="#e0b080" opacity="0.45"/><circle cx="19" cy="153" r="0.5" fill="#e8d89a" opacity="0.65"/><circle cx="85" cy="315" r="0.5" fill="#9fc0d8" opacity="0.35"/><circle cx="18" cy="343" r="0.45" fill="#d8c88a" opacity="0.8"/><circle cx="167" cy="313" r="0.4" fill="#d8c88a" opacity="0.35"/><circle cx="129" cy="532" r="0.4" fill="#d8c88a" opacity="0.8"/><circle cx="167" cy="155" r="0.5" fill="#cfd8e8" opacity="0.35"/><circle cx="175" cy="289" r="0.45" fill="#e8d89a" opacity="0.55"/><circle cx="203" cy="265" r="0.55" fill="#e8d89a" opacity="0.35"/><circle cx="170" cy="142" r="0.6" fill="#e0b080" opacity="0.45"/><circle cx="33" cy="234" r="0.45" fill="#d8c88a" opacity="0.45"/><circle cx="200" cy="393" r="0.75" fill="#e8d89a" opacity="0.35"/><circle cx="171" cy="297" r="0.55" fill="#9fc0d8" opacity="0.55"/><circle cx="196" cy="424" r="0.75" fill="#e8d89a" opacity="0.45"/><circle cx="187" cy="97" r="0.5" fill="#f0e6c8" opacity="0.35"/><circle cx="141" cy="527" r="0.6" fill="#d8c88a" opacity="0.65"/><circle cx="145" cy="421" r="0.45" fill="#cfd8e8" opacity="0.55"/><circle cx="195" cy="421" r="0.75" fill="#9fc0d8" opacity="0.45"/><circle cx="94" cy="458" r="0.6" fill="#cfd8e8" opacity="0.8"/><circle cx="115" cy="515" r="0.4" fill="#e8d89a" opacity="0.55"/><circle cx="162" cy="469" r="0.45" fill="#d8c88a" opacity="0.8"/><circle cx="99" cy="184" r="0.55" fill="#9fc0d8" opacity="0.35"/><circle cx="85" cy="439" r="0.75" fill="#e0b080" opacity="0.55"/><circle cx="178" cy="263" r="0.4" fill="#d8c88a" opacity="0.55"/><circle cx="143" cy="495" r="0.55" fill="#cfd8e8" opacity="0.35"/><circle cx="65" cy="355" r="0.4" fill="#f0e6c8" opacity="0.65"/><circle cx="89" cy="213" r="0.45" fill="#cfd8e8" opacity="0.8"/><circle cx="46" cy="238" r="0.55" fill="#9fc0d8" opacity="0.35"/><circle cx="63" cy="114" r="0.5" fill="#d8c88a" opacity="0.65"/><circle cx="88" cy="324" r="0.45" fill="#e8d89a" opacity="0.45"/><circle cx="148" cy="92" r="0.45" fill="#f0e6c8" opacity="0.55"/><circle cx="72" cy="143" r="0.45" fill="#d8c88a" opacity="0.55"/><circle cx="192" cy="358" r="0.55" fill="#cfd8e8" opacity="0.65"/><circle cx="69" cy="482" r="0.6" fill="#d8c88a" opacity="0.45"/><circle cx="84" cy="77" r="0.45" fill="#e8d89a" opacity="0.45"/><circle cx="98" cy="451" r="0.5" fill="#e0b080" opacity="0.55"/><circle cx="146" cy="533" r="0.75" fill="#9fc0d8" opacity="0.65"/><circle cx="29" cy="425" r="0.5" fill="#e0b080" opacity="0.65"/><circle cx="16" cy="364" r="0.55" fill="#cfd8e8" opacity="0.55"/><circle cx="78" cy="382" r="0.75" fill="#e0b080" opacity="0.65"/><circle cx="203" cy="451" r="0.4" fill="#e0b080" opacity="0.65"/><circle cx="107" cy="396" r="0.4" fill="#e8d89a" opacity="0.35"/><circle cx="120" cy="282" r="0.6" fill="#d8c88a" opacity="0.8"/><circle cx="162" cy="89" r="0.5" fill="#f0e6c8" opacity="0.45"/><circle cx="2" cy="510" r="0.5" fill="#d8c88a" opacity="0.45"/><circle cx="127" cy="342" r="0.4" fill="#f0e6c8" opacity="0.45"/><circle cx="161" cy="373" r="0.5" fill="#e0b080" opacity="0.45"/><circle cx="63" cy="327" r="0.55" fill="#9fc0d8" opacity="0.65"/><circle cx="140" cy="449" r="0.75" fill="#e0b080" opacity="0.65"/><circle cx="106" cy="528" r="0.5" fill="#e0b080" opacity="0.55"/><circle cx="70" cy="462" r="0.55" fill="#e8d89a" opacity="0.8"/><circle cx="75" cy="138" r="0.6" fill="#e8d89a" opacity="0.45"/><circle cx="67" cy="316" r="0.75" fill="#cfd8e8" opacity="0.35"/><circle cx="127" cy="527" r="0.5" fill="#e0b080" opacity="0.45"/><circle cx="59" cy="489" r="0.55" fill="#d8c88a" opacity="0.8"/><circle cx="69" cy="278" r="0.4" fill="#e0b080" opacity="0.55"/><circle cx="78" cy="222" r="0.55" fill="#cfd8e8" opacity="0.35"/><circle cx="44" cy="497" r="0.55" fill="#9fc0d8" opacity="0.65"/><circle cx="138" cy="437" r="0.5" fill="#e8d89a" opacity="0.45"/><circle cx="60" cy="323" r="0.75" fill="#9fc0d8" opacity="0.65"/><circle cx="163" cy="202" r="0.5" fill="#e0b080" opacity="0.65"/><circle cx="114" cy="208" r="0.75" fill="#e8d89a" opacity="0.55"/><circle cx="97" cy="78" r="0.6" fill="#e0b080" opacity="0.8"/><circle cx="66" cy="354" r="0.5" fill="#cfd8e8" opacity="0.45"/><circle cx="191" cy="482" r="0.4" fill="#9fc0d8" opacity="0.65"/><circle cx="180" cy="405" r="0.5" fill="#d8c88a" opacity="0.45"/><circle cx="209" cy="369" r="0.75" fill="#e8d89a" opacity="0.65"/><circle cx="85" cy="512" r="0.75" fill="#cfd8e8" opacity="0.65"/><circle cx="85" cy="449" r="0.5" fill="#d8c88a" opacity="0.45"/><circle cx="115" cy="316" r="0.75" fill="#cfd8e8" opacity="0.45"/><circle cx="46" cy="391" r="0.55" fill="#e8d89a" opacity="0.8"/><circle cx="1" cy="341" r="0.45" fill="#9fc0d8" opacity="0.65"/><circle cx="87" cy="341" r="0.5" fill="#e0b080" opacity="0.45"/><circle cx="33" cy="387" r="0.45" fill="#9fc0d8" opacity="0.35"/><circle cx="194" cy="493" r="0.75" fill="#e0b080" opacity="0.65"/><circle cx="190" cy="134" r="0.75" fill="#e0b080" opacity="0.65"/><circle cx="132" cy="201" r="0.4" fill="#9fc0d8" opacity="0.8"/><circle cx="178" cy="201" r="0.45" fill="#d8c88a" opacity="0.55"/><circle cx="20" cy="389" r="0.4" fill="#cfd8e8" opacity="0.35"/><circle cx="151" cy="107" r="0.5" fill="#d8c88a" opacity="0.35"/><circle cx="99" cy="430" r="0.55" fill="#cfd8e8" opacity="0.8"/><circle cx="13" cy="281" r="0.6" fill="#9fc0d8" opacity="0.35"/><circle cx="9" cy="459" r="0.4" fill="#f0e6c8" opacity="0.45"/><circle cx="64" cy="510" r="0.5" fill="#9fc0d8" opacity="0.8"/><circle cx="50" cy="333" r="0.45" fill="#cfd8e8" opacity="0.8"/><circle cx="116" cy="87" r="0.45" fill="#e8d89a" opacity="0.8"/><circle cx="58" cy="248" r="0.75" fill="#cfd8e8" opacity="0.35"/><circle cx="126" cy="260" r="0.6" fill="#9fc0d8" opacity="0.65"/><circle cx="49" cy="478" r="0.4" fill="#cfd8e8" opacity="0.8"/><circle cx="71" cy="534" r="0.4" fill="#e0b080" opacity="0.65"/><circle cx="124" cy="274" r="0.75" fill="#e0b080" opacity="0.8"/><circle cx="98" cy="233" r="0.45" fill="#e8d89a" opacity="0.65"/><circle cx="36" cy="428" r="0.4" fill="#e0b080" opacity="0.8"/><circle cx="4" cy="436" r="0.75" fill="#e0b080" opacity="0.45"/><circle cx="167" cy="167" r="0.75" fill="#cfd8e8" opacity="0.35"/><circle cx="199" cy="410" r="0.75" fill="#e8d89a" opacity="0.35"/><circle cx="76" cy="268" r="0.75" fill="#e0b080" opacity="0.8"/><circle cx="57" cy="239" r="0.45" fill="#9fc0d8" opacity="0.55"/><circle cx="214" cy="216" r="0.4" fill="#e0b080" opacity="0.45"/><circle cx="149" cy="270" r="0.4" fill="#e0b080" opacity="0.65"/><circle cx="167" cy="233" r="0.45" fill="#cfd8e8" opacity="0.65"/><circle cx="105" cy="112" r="0.5" fill="#cfd8e8" opacity="0.65"/><circle cx="194" cy="529" r="0.4" fill="#9fc0d8" opacity="0.8"/><circle cx="54" cy="255" r="0.5" fill="#cfd8e8" opacity="0.35"/><circle cx="203" cy="163" r="0.5" fill="#9fc0d8" opacity="0.65"/><circle cx="167" cy="412" r="0.45" fill="#f0e6c8" opacity="0.45"/><circle cx="30" cy="125" r="0.75" fill="#9fc0d8" opacity="0.8"/><circle cx="82" cy="77" r="0.4" fill="#f0e6c8" opacity="0.35"/><circle cx="44" cy="341" r="0.4" fill="#cfd8e8" opacity="0.55"/><circle cx="135" cy="486" r="0.55" fill="#e0b080" opacity="0.45"/><circle cx="2" cy="168" r="0.5" fill="#f0e6c8" opacity="0.35"/><circle cx="21" cy="483" r="0.45" fill="#f0e6c8" opacity="0.65"/><circle cx="124" cy="503" r="0.75" fill="#e0b080" opacity="0.65"/><circle cx="165" cy="339" r="0.75" fill="#e8d89a" opacity="0.65"/><circle cx="36" cy="377" r="0.75" fill="#d8c88a" opacity="0.65"/><circle cx="149" cy="293" r="0.45" fill="#e8d89a" opacity="0.65"/><circle cx="129" cy="102" r="0.45" fill="#d8c88a" opacity="0.35"/><circle cx="85" cy="441" r="0.45" fill="#e0b080" opacity="0.35"/><circle cx="52" cy="497" r="0.45" fill="#e8d89a" opacity="0.35"/><circle cx="101" cy="261" r="0.45" fill="#e0b080" opacity="0.35"/><circle cx="201" cy="371" r="0.55" fill="#cfd8e8" opacity="0.35"/><circle cx="33" cy="82" r="0.4" fill="#e0b080" opacity="0.35"/><circle cx="40" cy="450" r="0.45" fill="#9fc0d8" opacity="0.8"/><circle cx="70" cy="311" r="0.55" fill="#e8d89a" opacity="0.35"/><circle cx="184" cy="333" r="0.4" fill="#9fc0d8" opacity="0.8"/><circle cx="134" cy="351" r="0.6" fill="#e8d89a" opacity="0.35"/><circle cx="143" cy="360" r="0.55" fill="#f0e6c8" opacity="0.35"/><circle cx="121" cy="170" r="0.45" fill="#9fc0d8" opacity="0.65"/><circle cx="45" cy="404" r="0.75" fill="#d8c88a" opacity="0.65"/><circle cx="212" cy="359" r="0.4" fill="#9fc0d8" opacity="0.8"/><circle cx="76" cy="117" r="0.75" fill="#d8c88a" opacity="0.35"/><circle cx="19" cy="201" r="0.5" fill="#cfd8e8" opacity="0.45"/><circle cx="107" cy="342" r="0.5" fill="#d8c88a" opacity="0.35"/><circle cx="17" cy="93" r="0.75" fill="#e0b080" opacity="0.8"/><circle cx="46" cy="253" r="0.55" fill="#9fc0d8" opacity="0.8"/><circle cx="140" cy="501" r="0.75" fill="#e8d89a" opacity="0.35"/><circle cx="181" cy="408" r="0.4" fill="#e0b080" opacity="0.45"/><circle cx="184" cy="274" r="0.4" fill="#d8c88a" opacity="0.8"/><circle cx="204" cy="279" r="0.75" fill="#d8c88a" opacity="0.55"/><circle cx="170" cy="468" r="0.4" fill="#cfd8e8" opacity="0.65"/><circle cx="20" cy="280" r="0.75" fill="#e0b080" opacity="0.65"/><circle cx="165" cy="464" r="0.5" fill="#cfd8e8" opacity="0.45"/><circle cx="3" cy="324" r="0.5" fill="#d8c88a" opacity="0.8"/><circle cx="191" cy="503" r="0.5" fill="#e8d89a" opacity="0.45"/><circle cx="192" cy="444" r="0.6" fill="#d8c88a" opacity="0.35"/><circle cx="8" cy="471" r="0.55" fill="#e0b080" opacity="0.55"/><circle cx="79" cy="324" r="0.55" fill="#d8c88a" opacity="0.45"/><circle cx="115" cy="377" r="0.6" fill="#d8c88a" opacity="0.65"/><circle cx="201" cy="315" r="0.75" fill="#e8d89a" opacity="0.45"/><circle cx="47" cy="426" r="0.4" fill="#e0b080" opacity="0.55"/><circle cx="93" cy="128" r="0.45" fill="#9fc0d8" opacity="0.65"/><circle cx="133" cy="151" r="0.75" fill="#cfd8e8" opacity="0.65"/><circle cx="54" cy="193" r="0.4" fill="#e8d89a" opacity="0.45"/><circle cx="138" cy="362" r="0.75" fill="#e0b080" opacity="0.8"/><circle cx="31" cy="105" r="0.4" fill="#e0b080" opacity="0.65"/><circle cx="66" cy="103" r="0.4" fill="#9fc0d8" opacity="0.35"/><circle cx="16" cy="108" r="0.6" fill="#e8d89a" opacity="0.65"/><circle cx="140" cy="311" r="0.5" fill="#f0e6c8" opacity="0.45"/><circle cx="194" cy="192" r="0.55" fill="#f0e6c8" opacity="0.45"/><circle cx="96" cy="413" r="0.4" fill="#f0e6c8" opacity="0.55"/><circle cx="70" cy="169" r="0.55" fill="#d8c88a" opacity="0.35"/><circle cx="185" cy="448" r="0.75" fill="#cfd8e8" opacity="0.55"/><circle cx="135" cy="468" r="0.4" fill="#e8d89a" opacity="0.45"/><circle cx="169" cy="382" r="0.5" fill="#e0b080" opacity="0.55"/><circle cx="39" cy="140" r="0.4" fill="#e8d89a" opacity="0.65"/><circle cx="55" cy="115" r="0.6" fill="#d8c88a" opacity="0.35"/><circle cx="14" cy="80" r="0.45" fill="#cfd8e8" opacity="0.55"/><circle cx="117" cy="155" r="0.5" fill="#e0b080" opacity="0.55"/><circle cx="80" cy="151" r="0.75" fill="#e8d89a" opacity="0.45"/><circle cx="196" cy="150" r="0.55" fill="#e8d89a" opacity="0.45"/><circle cx="140" cy="487" r="0.55" fill="#cfd8e8" opacity="0.45"/><circle cx="139" cy="293" r="0.4" fill="#e8d89a" opacity="0.35"/><circle cx="143" cy="464" r="0.45" fill="#cfd8e8" opacity="0.35"/><circle cx="102" cy="301" r="0.4" fill="#f0e6c8" opacity="0.8"/><circle cx="154" cy="117" r="0.4" fill="#f0e6c8" opacity="0.65"/><circle cx="199" cy="498" r="0.55" fill="#f0e6c8" opacity="0.35"/><circle cx="26" cy="105" r="0.5" fill="#f0e6c8" opacity="0.65"/><circle cx="52" cy="231" r="0.4" fill="#e8d89a" opacity="0.8"/><circle cx="48" cy="421" r="0.6" fill="#9fc0d8" opacity="0.65"/><circle cx="24" cy="514" r="0.6" fill="#e8d89a" opacity="0.45"/><circle cx="113" cy="311" r="0.5" fill="#d8c88a" opacity="0.35"/><circle cx="18" cy="197" r="0.55" fill="#e0b080" opacity="0.45"/><circle cx="16" cy="285" r="0.5" fill="#e8d89a" opacity="0.45"/><circle cx="61" cy="441" r="0.4" fill="#e8d89a" opacity="0.65"/><circle cx="104" cy="157" r="0.4" fill="#e0b080" opacity="0.8"/><circle cx="195" cy="374" r="0.75" fill="#e0b080" opacity="0.35"/><circle cx="116" cy="182" r="0.55" fill="#e0b080" opacity="0.8"/><circle cx="30" cy="243" r="0.55" fill="#cfd8e8" opacity="0.35"/><circle cx="185" cy="245" r="0.75" fill="#d8c88a" opacity="0.45"/><circle cx="3" cy="287" r="0.75" fill="#e8d89a" opacity="0.65"/><circle cx="47" cy="90" r="0.55" fill="#d8c88a" opacity="0.45"/><circle cx="66" cy="220" r="0.45" fill="#e8d89a" opacity="0.65"/><circle cx="5" cy="150" r="0.5" fill="#f0e6c8" opacity="0.45"/><circle cx="14" cy="248" r="0.75" fill="#f0e6c8" opacity="0.45"/><circle cx="134" cy="174" r="0.55" fill="#d8c88a" opacity="0.55"/><circle cx="216" cy="286" r="0.45" fill="#cfd8e8" opacity="0.35"/><circle cx="88" cy="233" r="0.75" fill="#e0b080" opacity="0.35"/><circle cx="123" cy="433" r="0.45" fill="#e8d89a" opacity="0.45"/><circle cx="131" cy="193" r="0.55" fill="#f0e6c8" opacity="0.8"/><circle cx="118" cy="254" r="0.5" fill="#d8c88a" opacity="0.8"/><circle cx="26" cy="521" r="0.45" fill="#d8c88a" opacity="0.8"/><circle cx="29" cy="223" r="0.4" fill="#d8c88a" opacity="0.45"/><circle cx="91" cy="110" r="0.55" fill="#f0e6c8" opacity="0.55"/><circle cx="192" cy="382" r="0.45" fill="#e0b080" opacity="0.55"/><circle cx="209" cy="406" r="0.4" fill="#e8d89a" opacity="0.65"/><circle cx="198" cy="122" r="0.4" fill="#cfd8e8" opacity="0.35"/><circle cx="62" cy="525" r="0.45" fill="#f0e6c8" opacity="0.35"/><circle cx="114" cy="469" r="0.75" fill="#e0b080" opacity="0.8"/><circle cx="126" cy="281" r="0.55" fill="#e0b080" opacity="0.8"/><circle cx="127" cy="447" r="0.6" fill="#9fc0d8" opacity="0.45"/><circle cx="94" cy="350" r="0.5" fill="#9fc0d8" opacity="0.65"/><circle cx="39" cy="396" r="0.5" fill="#e0b080" opacity="0.45"/><circle cx="89" cy="520" r="0.5" fill="#e0b080" opacity="0.35"/><circle cx="151" cy="100" r="0.75" fill="#f0e6c8" opacity="0.45"/><circle cx="145" cy="446" r="0.4" fill="#f0e6c8" opacity="0.65"/><circle cx="73" cy="428" r="0.75" fill="#d8c88a" opacity="0.65"/><circle cx="207" cy="440" r="0.45" fill="#f0e6c8" opacity="0.35"/><circle cx="207" cy="170" r="0.55" fill="#f0e6c8" opacity="0.45"/><circle cx="194" cy="182" r="0.75" fill="#e0b080" opacity="0.55"/><circle cx="82" cy="304" r="0.5" fill="#d8c88a" opacity="0.45"/><circle cx="138" cy="483" r="0.4" fill="#e8d89a" opacity="0.8"/><circle cx="29" cy="263" r="0.55" fill="#e0b080" opacity="0.35"/><circle cx="101" cy="285" r="0.5" fill="#9fc0d8" opacity="0.8"/><circle cx="77" cy="402" r="0.55" fill="#cfd8e8" opacity="0.45"/><circle cx="175" cy="397" r="0.75" fill="#e0b080" opacity="0.45"/><circle cx="85" cy="128" r="0.75" fill="#cfd8e8" opacity="0.8"/><circle cx="139" cy="369" r="0.75" fill="#9fc0d8" opacity="0.45"/><circle cx="80" cy="470" r="0.75" fill="#cfd8e8" opacity="0.45"/><circle cx="177" cy="354" r="0.75" fill="#9fc0d8" opacity="0.35"/><circle cx="43" cy="80" r="0.6" fill="#f0e6c8" opacity="0.8"/><circle cx="59" cy="106" r="0.4" fill="#d8c88a" opacity="0.35"/><circle cx="150" cy="75" r="0.45" fill="#d8c88a" opacity="0.55"/><circle cx="195" cy="440" r="0.45" fill="#e8d89a" opacity="0.35"/><circle cx="25" cy="509" r="0.45" fill="#d8c88a" opacity="0.65"/><circle cx="72" cy="317" r="0.5" fill="#cfd8e8" opacity="0.65"/><circle cx="161" cy="482" r="0.5" fill="#e8d89a" opacity="0.35"/><circle cx="57" cy="197" r="0.4" fill="#9fc0d8" opacity="0.35"/><circle cx="150" cy="196" r="0.75" fill="#cfd8e8" opacity="0.55"/><circle cx="108" cy="139" r="0.6" fill="#9fc0d8" opacity="0.35"/><circle cx="162" cy="465" r="0.55" fill="#f0e6c8" opacity="0.55"/><circle cx="155" cy="180" r="0.4" fill="#f0e6c8" opacity="0.35"/><circle cx="14" cy="144" r="0.75" fill="#f0e6c8" opacity="0.65"/><circle cx="171" cy="181" r="0.4" fill="#e0b080" opacity="0.65"/><circle cx="122" cy="138" r="0.45" fill="#9fc0d8" opacity="0.45"/><circle cx="23" cy="369" r="0.45" fill="#cfd8e8" opacity="0.8"/><circle cx="91" cy="322" r="0.75" fill="#e8d89a" opacity="0.35"/><circle cx="49" cy="84" r="0.6" fill="#cfd8e8" opacity="0.45"/><circle cx="138" cy="396" r="0.6" fill="#d8c88a" opacity="0.45"/><circle cx="44" cy="218" r="0.75" fill="#cfd8e8" opacity="0.45"/><circle cx="34" cy="179" r="0.5" fill="#e0b080" opacity="0.55"/><circle cx="86" cy="317" r="0.5" fill="#e8d89a" opacity="0.8"/><circle cx="68" cy="210" r="0.5" fill="#9fc0d8" opacity="0.45"/><circle cx="33" cy="508" r="0.45" fill="#f0e6c8" opacity="0.35"/><circle cx="43" cy="129" r="0.6" fill="#e0b080" opacity="0.8"/><circle cx="188" cy="393" r="0.55" fill="#9fc0d8" opacity="0.55"/><circle cx="167" cy="123" r="0.4" fill="#9fc0d8" opacity="0.65"/><circle cx="94" cy="104" r="0.75" fill="#9fc0d8" opacity="0.45"/><circle cx="97" cy="471" r="0.75" fill="#f0e6c8" opacity="0.55"/><circle cx="116" cy="437" r="0.75" fill="#cfd8e8" opacity="0.8"/><circle cx="11" cy="432" r="0.4" fill="#e0b080" opacity="0.55"/><circle cx="29" cy="474" r="0.6" fill="#d8c88a" opacity="0.35"/><circle cx="101" cy="362" r="0.5" fill="#e0b080" opacity="0.35"/><circle cx="184" cy="381" r="0.5" fill="#f0e6c8" opacity="0.8"/><circle cx="19" cy="257" r="0.4" fill="#e0b080" opacity="0.35"/><circle cx="7" cy="498" r="0.75" fill="#d8c88a" opacity="0.8"/><circle cx="23" cy="106" r="0.45" fill="#9fc0d8" opacity="0.8"/><circle cx="180" cy="152" r="0.45" fill="#f0e6c8" opacity="0.65"/><circle cx="153" cy="242" r="0.45" fill="#f0e6c8" opacity="0.8"/><circle cx="25" cy="194" r="0.75" fill="#e0b080" opacity="0.65"/><circle cx="102" cy="520" r="0.6" fill="#cfd8e8" opacity="0.65"/><circle cx="85" cy="167" r="0.45" fill="#e0b080" opacity="0.45"/><circle cx="198" cy="302" r="0.6" fill="#cfd8e8" opacity="0.45"/><circle cx="6" cy="312" r="0.75" fill="#d8c88a" opacity="0.8"/><circle cx="69" cy="154" r="0.75" fill="#cfd8e8" opacity="0.45"/><circle cx="142" cy="99" r="0.4" fill="#d8c88a" opacity="0.8"/><circle cx="74" cy="441" r="0.5" fill="#9fc0d8" opacity="0.35"/><circle cx="194" cy="518" r="0.5" fill="#d8c88a" opacity="0.55"/><circle cx="177" cy="197" r="0.5" fill="#cfd8e8" opacity="0.55"/><circle cx="133" cy="257" r="0.5" fill="#e8d89a" opacity="0.45"/><circle cx="3" cy="389" r="0.75" fill="#9fc0d8" opacity="0.45"/><circle cx="176" cy="374" r="0.4" fill="#e0b080" opacity="0.45"/><circle cx="163" cy="453" r="0.5" fill="#9fc0d8" opacity="0.55"/><circle cx="82" cy="465" r="0.45" fill="#d8c88a" opacity="0.8"/><circle cx="154" cy="386" r="0.4" fill="#cfd8e8" opacity="0.45"/><circle cx="539" cy="193" r="0.45" fill="#e0b080" opacity="0.8"/><circle cx="465" cy="80" r="0.6" fill="#f0e6c8" opacity="0.55"/><circle cx="395" cy="136" r="0.75" fill="#d8c88a" opacity="0.55"/><circle cx="354" cy="82" r="0.4" fill="#cfd8e8" opacity="0.35"/><circle cx="560" cy="76" r="0.5" fill="#e8d89a" opacity="0.8"/><circle cx="242" cy="174" r="0.45" fill="#f0e6c8" opacity="0.65"/><circle cx="335" cy="138" r="0.55" fill="#cfd8e8" opacity="0.8"/><circle cx="395" cy="195" r="0.75" fill="#cfd8e8" opacity="0.55"/><circle cx="434" cy="87" r="0.6" fill="#9fc0d8" opacity="0.35"/><circle cx="400" cy="130" r="0.75" fill="#d8c88a" opacity="0.45"/><circle cx="295" cy="147" r="0.75" fill="#e0b080" opacity="0.35"/><circle cx="465" cy="150" r="0.55" fill="#9fc0d8" opacity="0.8"/><circle cx="381" cy="171" r="0.55" fill="#e8d89a" opacity="0.45"/><circle cx="416" cy="185" r="0.75" fill="#cfd8e8" opacity="0.35"/><circle cx="301" cy="174" r="0.4" fill="#d8c88a" opacity="0.55"/><circle cx="552" cy="208" r="0.55" fill="#d8c88a" opacity="0.65"/><circle cx="459" cy="83" r="0.55" fill="#d8c88a" opacity="0.55"/><circle cx="331" cy="118" r="0.75" fill="#d8c88a" opacity="0.65"/><circle cx="424" cy="141" r="0.75" fill="#d8c88a" opacity="0.8"/><circle cx="580" cy="209" r="0.6" fill="#d8c88a" opacity="0.45"/><circle cx="223" cy="161" r="0.4" fill="#9fc0d8" opacity="0.55"/><circle cx="236" cy="81" r="0.6" fill="#e8d89a" opacity="0.8"/><circle cx="540" cy="170" r="0.75" fill="#d8c88a" opacity="0.8"/><circle cx="392" cy="94" r="0.45" fill="#d8c88a" opacity="0.45"/><circle cx="456" cy="182" r="0.55" fill="#d8c88a" opacity="0.8"/><circle cx="478" cy="155" r="0.45" fill="#f0e6c8" opacity="0.45"/><circle cx="412" cy="137" r="0.4" fill="#e8d89a" opacity="0.55"/><circle cx="560" cy="95" r="0.45" fill="#9fc0d8" opacity="0.55"/><circle cx="304" cy="185" r="0.45" fill="#9fc0d8" opacity="0.45"/><circle cx="560" cy="100" r="0.6" fill="#e0b080" opacity="0.35"/><circle cx="501" cy="170" r="0.75" fill="#d8c88a" opacity="0.55"/><circle cx="535" cy="131" r="0.6" fill="#e8d89a" opacity="0.65"/><circle cx="576" cy="133" r="0.4" fill="#e8d89a" opacity="0.8"/><circle cx="474" cy="92" r="0.55" fill="#d8c88a" opacity="0.45"/><circle cx="596" cy="119" r="0.75" fill="#d8c88a" opacity="0.45"/><circle cx="303" cy="191" r="0.5" fill="#9fc0d8" opacity="0.65"/><circle cx="332" cy="95" r="0.45" fill="#f0e6c8" opacity="0.35"/><circle cx="270" cy="153" r="0.4" fill="#9fc0d8" opacity="0.55"/><circle cx="286" cy="138" r="0.55" fill="#9fc0d8" opacity="0.65"/><circle cx="396" cy="111" r="0.6" fill="#d8c88a" opacity="0.65"/><circle cx="442" cy="93" r="0.45" fill="#d8c88a" opacity="0.35"/><circle cx="350" cy="125" r="0.4" fill="#f0e6c8" opacity="0.35"/><circle cx="351" cy="131" r="0.5" fill="#e0b080" opacity="0.65"/><circle cx="462" cy="136" r="0.6" fill="#9fc0d8" opacity="0.35"/><circle cx="232" cy="180" r="0.55" fill="#cfd8e8" opacity="0.8"/><circle cx="456" cy="198" r="0.55" fill="#f0e6c8" opacity="0.8"/><circle cx="330" cy="148" r="0.75" fill="#e0b080" opacity="0.35"/><circle cx="578" cy="93" r="0.5" fill="#e0b080" opacity="0.65"/><circle cx="517" cy="153" r="0.75" fill="#d8c88a" opacity="0.55"/><circle cx="521" cy="94" r="0.6" fill="#f0e6c8" opacity="0.45"/><circle cx="325" cy="91" r="0.4" fill="#9fc0d8" opacity="0.55"/><circle cx="523" cy="133" r="0.5" fill="#cfd8e8" opacity="0.8"/><circle cx="557" cy="121" r="0.6" fill="#cfd8e8" opacity="0.65"/><circle cx="260" cy="108" r="0.6" fill="#9fc0d8" opacity="0.8"/><circle cx="515" cy="108" r="0.5" fill="#f0e6c8" opacity="0.35"/><circle cx="354" cy="197" r="0.6" fill="#e8d89a" opacity="0.55"/><circle cx="556" cy="112" r="0.55" fill="#d8c88a" opacity="0.65"/><circle cx="224" cy="99" r="0.4" fill="#e0b080" opacity="0.45"/><circle cx="272" cy="104" r="0.4" fill="#f0e6c8" opacity="0.55"/><circle cx="262" cy="205" r="0.4" fill="#d8c88a" opacity="0.8"/><circle cx="426" cy="205" r="0.45" fill="#f0e6c8" opacity="0.45"/><circle cx="231" cy="141" r="0.75" fill="#f0e6c8" opacity="0.65"/><circle cx="251" cy="192" r="0.45" fill="#9fc0d8" opacity="0.45"/><circle cx="588" cy="78" r="0.4" fill="#d8c88a" opacity="0.35"/><circle cx="231" cy="118" r="0.75" fill="#e0b080" opacity="0.45"/><circle cx="259" cy="95" r="0.45" fill="#d8c88a" opacity="0.8"/><circle cx="352" cy="201" r="0.45" fill="#cfd8e8" opacity="0.35"/><circle cx="589" cy="132" r="0.55" fill="#f0e6c8" opacity="0.55"/><circle cx="386" cy="139" r="0.4" fill="#e0b080" opacity="0.45"/><circle cx="279" cy="194" r="0.5" fill="#e0b080" opacity="0.35"/><circle cx="386" cy="158" r="0.4" fill="#f0e6c8" opacity="0.8"/><circle cx="517" cy="151" r="0.55" fill="#f0e6c8" opacity="0.35"/><circle cx="445" cy="119" r="0.55" fill="#9fc0d8" opacity="0.45"/><circle cx="543" cy="197" r="0.6" fill="#9fc0d8" opacity="0.45"/><circle cx="405" cy="167" r="0.45" fill="#e0b080" opacity="0.35"/><circle cx="407" cy="199" r="0.75" fill="#9fc0d8" opacity="0.35"/><circle cx="538" cy="122" r="0.75" fill="#e0b080" opacity="0.45"/><circle cx="433" cy="172" r="0.55" fill="#cfd8e8" opacity="0.65"/><circle cx="580" cy="199" r="0.6" fill="#d8c88a" opacity="0.55"/><circle cx="557" cy="99" r="0.45" fill="#e0b080" opacity="0.8"/><circle cx="529" cy="208" r="0.75" fill="#cfd8e8" opacity="0.55"/><circle cx="461" cy="149" r="0.6" fill="#cfd8e8" opacity="0.45"/><circle cx="435" cy="147" r="0.5" fill="#e8d89a" opacity="0.65"/><circle cx="570" cy="176" r="0.45" fill="#f0e6c8" opacity="0.35"/><circle cx="434" cy="196" r="0.6" fill="#9fc0d8" opacity="0.65"/><circle cx="485" cy="74" r="0.6" fill="#d8c88a" opacity="0.35"/><circle cx="359" cy="192" r="0.6" fill="#f0e6c8" opacity="0.65"/><circle cx="552" cy="183" r="0.4" fill="#e0b080" opacity="0.65"/><circle cx="463" cy="86" r="0.55" fill="#e0b080" opacity="0.55"/><circle cx="298" cy="162" r="0.5" fill="#cfd8e8" opacity="0.45"/><circle cx="566" cy="201" r="0.6" fill="#f0e6c8" opacity="0.8"/><circle cx="480" cy="161" r="0.5" fill="#f0e6c8" opacity="0.55"/><circle cx="369" cy="202" r="0.55" fill="#e8d89a" opacity="0.35"/><circle cx="501" cy="93" r="0.75" fill="#cfd8e8" opacity="0.35"/><circle cx="445" cy="191" r="0.75" fill="#e0b080" opacity="0.45"/><circle cx="350" cy="189" r="0.45" fill="#cfd8e8" opacity="0.8"/><circle cx="229" cy="138" r="0.4" fill="#e8d89a" opacity="0.35"/><circle cx="298" cy="155" r="0.75" fill="#e8d89a" opacity="0.55"/><circle cx="347" cy="200" r="0.45" fill="#d8c88a" opacity="0.35"/><circle cx="462" cy="187" r="0.5" fill="#cfd8e8" opacity="0.45"/><circle cx="278" cy="199" r="0.55" fill="#d8c88a" opacity="0.55"/><circle cx="315" cy="81" r="0.45" fill="#9fc0d8" opacity="0.55"/><circle cx="586" cy="178" r="0.75" fill="#f0e6c8" opacity="0.8"/><circle cx="454" cy="205" r="0.45" fill="#e8d89a" opacity="0.65"/><circle cx="564" cy="183" r="0.75" fill="#e8d89a" opacity="0.65"/><circle cx="304" cy="136" r="0.6" fill="#d8c88a" opacity="0.55"/><circle cx="277" cy="166" r="0.6" fill="#cfd8e8" opacity="0.65"/><circle cx="555" cy="197" r="0.55" fill="#f0e6c8" opacity="0.65"/><circle cx="572" cy="150" r="0.4" fill="#9fc0d8" opacity="0.65"/><circle cx="506" cy="153" r="0.45" fill="#cfd8e8" opacity="0.35"/><circle cx="356" cy="204" r="0.45" fill="#f0e6c8" opacity="0.8"/><circle cx="324" cy="118" r="0.6" fill="#9fc0d8" opacity="0.45"/><circle cx="336" cy="77" r="0.45" fill="#f0e6c8" opacity="0.35"/><circle cx="581" cy="135" r="0.5" fill="#9fc0d8" opacity="0.55"/><circle cx="399" cy="199" r="0.45" fill="#9fc0d8" opacity="0.45"/><circle cx="353" cy="155" r="0.5" fill="#cfd8e8" opacity="0.45"/><circle cx="486" cy="153" r="0.55" fill="#e8d89a" opacity="0.45"/><circle cx="427" cy="101" r="0.6" fill="#e0b080" opacity="0.35"/><circle cx="503" cy="105" r="0.4" fill="#e0b080" opacity="0.55"/><circle cx="569" cy="208" r="0.75" fill="#9fc0d8" opacity="0.35"/><circle cx="318" cy="206" r="0.4" fill="#cfd8e8" opacity="0.55"/><circle cx="557" cy="167" r="0.6" fill="#f0e6c8" opacity="0.55"/><circle cx="560" cy="153" r="0.45" fill="#e8d89a" opacity="0.8"/><circle cx="293" cy="97" r="0.45" fill="#e8d89a" opacity="0.45"/><circle cx="571" cy="109" r="0.75" fill="#9fc0d8" opacity="0.55"/><circle cx="473" cy="125" r="0.75" fill="#e8d89a" opacity="0.35"/><circle cx="443" cy="168" r="0.55" fill="#e8d89a" opacity="0.55"/><circle cx="412" cy="131" r="0.75" fill="#e8d89a" opacity="0.35"/><circle cx="595" cy="208" r="0.6" fill="#9fc0d8" opacity="0.65"/><circle cx="277" cy="172" r="0.6" fill="#d8c88a" opacity="0.55"/><circle cx="566" cy="123" r="0.6" fill="#d8c88a" opacity="0.45"/><circle cx="276" cy="93" r="0.6" fill="#e8d89a" opacity="0.45"/><circle cx="334" cy="150" r="0.4" fill="#9fc0d8" opacity="0.65"/><circle cx="373" cy="147" r="0.4" fill="#e0b080" opacity="0.35"/><circle cx="306" cy="92" r="0.4" fill="#d8c88a" opacity="0.55"/><circle cx="308" cy="86" r="0.55" fill="#9fc0d8" opacity="0.65"/><circle cx="380" cy="138" r="0.4" fill="#d8c88a" opacity="0.35"/><circle cx="388" cy="141" r="0.4" fill="#9fc0d8" opacity="0.45"/><circle cx="292" cy="108" r="0.5" fill="#e8d89a" opacity="0.55"/><circle cx="463" cy="131" r="0.5" fill="#e8d89a" opacity="0.8"/><circle cx="513" cy="134" r="0.75" fill="#d8c88a" opacity="0.45"/><circle cx="332" cy="117" r="0.4" fill="#e0b080" opacity="0.8"/><circle cx="379" cy="96" r="0.4" fill="#f0e6c8" opacity="0.35"/><circle cx="593" cy="173" r="0.75" fill="#d8c88a" opacity="0.35"/><circle cx="325" cy="78" r="0.4" fill="#e8d89a" opacity="0.8"/><circle cx="499" cy="170" r="0.6" fill="#f0e6c8" opacity="0.45"/><circle cx="303" cy="101" r="0.5" fill="#e0b080" opacity="0.65"/><circle cx="251" cy="196" r="0.4" fill="#e0b080" opacity="0.45"/><circle cx="468" cy="87" r="0.55" fill="#e8d89a" opacity="0.8"/><circle cx="478" cy="208" r="0.5" fill="#d8c88a" opacity="0.55"/><circle cx="468" cy="118" r="0.4" fill="#f0e6c8" opacity="0.65"/><circle cx="478" cy="132" r="0.45" fill="#e8d89a" opacity="0.35"/><circle cx="238" cy="99" r="0.5" fill="#e0b080" opacity="0.35"/><circle cx="362" cy="166" r="0.5" fill="#d8c88a" opacity="0.35"/><circle cx="471" cy="140" r="0.55" fill="#cfd8e8" opacity="0.35"/><circle cx="572" cy="184" r="0.55" fill="#d8c88a" opacity="0.45"/><circle cx="242" cy="132" r="0.75" fill="#e0b080" opacity="0.35"/><circle cx="482" cy="152" r="0.75" fill="#e8d89a" opacity="0.35"/><circle cx="259" cy="117" r="0.4" fill="#d8c88a" opacity="0.8"/><circle cx="577" cy="109" r="0.45" fill="#e0b080" opacity="0.55"/><circle cx="371" cy="186" r="0.45" fill="#f0e6c8" opacity="0.65"/><circle cx="284" cy="91" r="0.6" fill="#e0b080" opacity="0.65"/><circle cx="545" cy="160" r="0.45" fill="#e0b080" opacity="0.55"/><circle cx="489" cy="89" r="0.55" fill="#e8d89a" opacity="0.45"/><circle cx="217" cy="79" r="0.5" fill="#e8d89a" opacity="0.55"/><circle cx="596" cy="116" r="0.75" fill="#9fc0d8" opacity="0.8"/><circle cx="384" cy="203" r="0.6" fill="#9fc0d8" opacity="0.45"/><circle cx="335" cy="101" r="0.75" fill="#cfd8e8" opacity="0.45"/><circle cx="358" cy="142" r="0.6" fill="#d8c88a" opacity="0.8"/><circle cx="322" cy="141" r="0.6" fill="#e8d89a" opacity="0.65"/><circle cx="380" cy="154" r="0.4" fill="#9fc0d8" opacity="0.55"/><circle cx="321" cy="178" r="0.75" fill="#f0e6c8" opacity="0.55"/><circle cx="413" cy="107" r="0.6" fill="#9fc0d8" opacity="0.65"/><circle cx="423" cy="113" r="0.75" fill="#e8d89a" opacity="0.55"/><circle cx="400" cy="172" r="0.45" fill="#e0b080" opacity="0.65"/><circle cx="544" cy="169" r="0.55" fill="#cfd8e8" opacity="0.35"/><circle cx="504" cy="173" r="0.45" fill="#d8c88a" opacity="0.65"/><circle cx="465" cy="165" r="0.75" fill="#cfd8e8" opacity="0.35"/><circle cx="320" cy="81" r="0.5" fill="#f0e6c8" opacity="0.35"/><circle cx="383" cy="156" r="0.75" fill="#cfd8e8" opacity="0.45"/><circle cx="346" cy="137" r="0.75" fill="#e0b080" opacity="0.45"/><circle cx="402" cy="123" r="0.5" fill="#f0e6c8" opacity="0.35"/><circle cx="487" cy="195" r="0.55" fill="#f0e6c8" opacity="0.55"/><circle cx="376" cy="116" r="0.75" fill="#d8c88a" opacity="0.45"/><circle cx="350" cy="81" r="0.75" fill="#d8c88a" opacity="0.55"/><circle cx="230" cy="97" r="0.4" fill="#f0e6c8" opacity="0.65"/><circle cx="289" cy="178" r="0.5" fill="#9fc0d8" opacity="0.35"/><circle cx="258" cy="110" r="0.6" fill="#f0e6c8" opacity="0.8"/><circle cx="593" cy="207" r="0.55" fill="#f0e6c8" opacity="0.45"/><circle cx="361" cy="75" r="0.5" fill="#e8d89a" opacity="0.55"/><circle cx="343" cy="165" r="0.6" fill="#e0b080" opacity="0.45"/><circle cx="295" cy="152" r="0.6" fill="#9fc0d8" opacity="0.45"/><circle cx="328" cy="100" r="0.45" fill="#d8c88a" opacity="0.65"/><circle cx="439" cy="151" r="0.5" fill="#e8d89a" opacity="0.35"/><circle cx="434" cy="143" r="0.6" fill="#e8d89a" opacity="0.8"/><circle cx="391" cy="105" r="0.55" fill="#cfd8e8" opacity="0.65"/><circle cx="565" cy="75" r="0.45" fill="#e8d89a" opacity="0.55"/><circle cx="592" cy="106" r="0.55" fill="#d8c88a" opacity="0.55"/><circle cx="440" cy="124" r="0.4" fill="#9fc0d8" opacity="0.8"/><circle cx="525" cy="110" r="0.75" fill="#f0e6c8" opacity="0.65"/><circle cx="592" cy="80" r="0.55" fill="#f0e6c8" opacity="0.45"/><circle cx="444" cy="97" r="0.6" fill="#f0e6c8" opacity="0.8"/><circle cx="580" cy="95" r="0.4" fill="#cfd8e8" opacity="0.65"/><circle cx="574" cy="192" r="0.5" fill="#f0e6c8" opacity="0.45"/><circle cx="480" cy="82" r="0.4" fill="#d8c88a" opacity="0.55"/><circle cx="218" cy="129" r="0.55" fill="#cfd8e8" opacity="0.55"/><circle cx="413" cy="207" r="0.45" fill="#e8d89a" opacity="0.8"/><circle cx="417" cy="89" r="0.5" fill="#9fc0d8" opacity="0.45"/><circle cx="300" cy="126" r="0.5" fill="#9fc0d8" opacity="0.8"/><circle cx="429" cy="110" r="0.4" fill="#9fc0d8" opacity="0.55"/><circle cx="537" cy="123" r="0.6" fill="#e0b080" opacity="0.55"/><circle cx="268" cy="165" r="0.4" fill="#cfd8e8" opacity="0.45"/><circle cx="375" cy="203" r="0.5" fill="#d8c88a" opacity="0.65"/><circle cx="217" cy="209" r="0.45" fill="#e0b080" opacity="0.8"/><circle cx="386" cy="128" r="0.45" fill="#d8c88a" opacity="0.65"/><circle cx="279" cy="198" r="0.75" fill="#e8d89a" opacity="0.35"/><circle cx="360" cy="194" r="0.5" fill="#e0b080" opacity="0.65"/><circle cx="473" cy="141" r="0.55" fill="#d8c88a" opacity="0.8"/><circle cx="282" cy="161" r="0.75" fill="#d8c88a" opacity="0.55"/><circle cx="525" cy="141" r="0.75" fill="#9fc0d8" opacity="0.45"/><circle cx="467" cy="191" r="0.5" fill="#9fc0d8" opacity="0.8"/><circle cx="267" cy="139" r="0.6" fill="#e8d89a" opacity="0.45"/><circle cx="320" cy="114" r="0.45" fill="#9fc0d8" opacity="0.8"/><circle cx="516" cy="201" r="0.45" fill="#e0b080" opacity="0.65"/><circle cx="499" cy="116" r="0.45" fill="#cfd8e8" opacity="0.65"/><circle cx="387" cy="205" r="0.4" fill="#e0b080" opacity="0.35"/><circle cx="247" cy="158" r="0.6" fill="#e0b080" opacity="0.8"/><circle cx="493" cy="109" r="0.4" fill="#d8c88a" opacity="0.8"/><circle cx="225" cy="157" r="0.45" fill="#f0e6c8" opacity="0.35"/><circle cx="532" cy="167" r="0.6" fill="#d8c88a" opacity="0.45"/><circle cx="293" cy="195" r="0.5" fill="#9fc0d8" opacity="0.35"/><circle cx="266" cy="124" r="0.4" fill="#e8d89a" opacity="0.8"/><circle cx="490" cy="80" r="0.75" fill="#cfd8e8" opacity="0.55"/><circle cx="331" cy="173" r="0.4" fill="#d8c88a" opacity="0.65"/><circle cx="446" cy="205" r="0.6" fill="#e8d89a" opacity="0.35"/><circle cx="495" cy="104" r="0.4" fill="#e0b080" opacity="0.8"/><circle cx="400" cy="155" r="0.45" fill="#f0e6c8" opacity="0.8"/><circle cx="393" cy="180" r="0.55" fill="#d8c88a" opacity="0.45"/><circle cx="323" cy="174" r="0.6" fill="#d8c88a" opacity="0.45"/><circle cx="481" cy="127" r="0.45" fill="#e8d89a" opacity="0.45"/><circle cx="384" cy="181" r="0.55" fill="#9fc0d8" opacity="0.55"/><circle cx="407" cy="77" r="0.75" fill="#e0b080" opacity="0.55"/><circle cx="369" cy="95" r="0.55" fill="#e0b080" opacity="0.65"/><circle cx="276" cy="177" r="0.55" fill="#d8c88a" opacity="0.65"/><circle cx="586" cy="102" r="0.45" fill="#e0b080" opacity="0.45"/><circle cx="351" cy="183" r="0.4" fill="#cfd8e8" opacity="0.55"/><circle cx="349" cy="89" r="0.5" fill="#f0e6c8" opacity="0.8"/><circle cx="436" cy="103" r="0.55" fill="#e8d89a" opacity="0.55"/><circle cx="313" cy="186" r="0.6" fill="#9fc0d8" opacity="0.8"/><circle cx="431" cy="195" r="0.75" fill="#d8c88a" opacity="0.55"/><circle cx="472" cy="86" r="0.75" fill="#f0e6c8" opacity="0.65"/><circle cx="382" cy="165" r="0.55" fill="#d8c88a" opacity="0.35"/><circle cx="275" cy="96" r="0.45" fill="#cfd8e8" opacity="0.45"/><circle cx="462" cy="132" r="0.5" fill="#d8c88a" opacity="0.35"/><circle cx="286" cy="152" r="0.45" fill="#d8c88a" opacity="0.65"/><circle cx="439" cy="99" r="0.75" fill="#9fc0d8" opacity="0.65"/><circle cx="535" cy="75" r="0.45" fill="#f0e6c8" opacity="0.35"/><circle cx="555" cy="161" r="0.4" fill="#9fc0d8" opacity="0.65"/><circle cx="299" cy="179" r="0.5" fill="#e0b080" opacity="0.8"/><circle cx="303" cy="151" r="0.75" fill="#cfd8e8" opacity="0.55"/><circle cx="256" cy="183" r="0.75" fill="#d8c88a" opacity="0.55"/><circle cx="274" cy="148" r="0.75" fill="#e8d89a" opacity="0.35"/><circle cx="536" cy="191" r="0.4" fill="#d8c88a" opacity="0.45"/><circle cx="294" cy="108" r="0.4" fill="#cfd8e8" opacity="0.65"/><circle cx="285" cy="73" r="0.55" fill="#d8c88a" opacity="0.55"/><circle cx="308" cy="192" r="0.55" fill="#e8d89a" opacity="0.45"/><circle cx="545" cy="89" r="0.75" fill="#e8d89a" opacity="0.65"/><circle cx="482" cy="179" r="0.45" fill="#d8c88a" opacity="0.55"/><circle cx="230" cy="176" r="0.55" fill="#e0b080" opacity="0.8"/><circle cx="366" cy="115" r="0.4" fill="#9fc0d8" opacity="0.8"/><circle cx="501" cy="165" r="0.6" fill="#9fc0d8" opacity="0.65"/><circle cx="321" cy="186" r="0.55" fill="#d8c88a" opacity="0.35"/><circle cx="429" cy="136" r="0.6" fill="#d8c88a" opacity="0.8"/><circle cx="410" cy="89" r="0.75" fill="#cfd8e8" opacity="0.65"/><circle cx="589" cy="75" r="0.75" fill="#f0e6c8" opacity="0.45"/><circle cx="537" cy="137" r="0.45" fill="#cfd8e8" opacity="0.65"/><circle cx="488" cy="172" r="0.45" fill="#d8c88a" opacity="0.65"/><circle cx="466" cy="162" r="0.4" fill="#f0e6c8" opacity="0.65"/><circle cx="490" cy="144" r="0.45" fill="#cfd8e8" opacity="0.35"/><circle cx="265" cy="164" r="0.5" fill="#e8d89a" opacity="0.55"/><circle cx="332" cy="147" r="0.45" fill="#e8d89a" opacity="0.35"/><circle cx="495" cy="82" r="0.5" fill="#e8d89a" opacity="0.55"/><circle cx="485" cy="157" r="0.75" fill="#9fc0d8" opacity="0.65"/><circle cx="557" cy="89" r="0.55" fill="#cfd8e8" opacity="0.65"/><circle cx="585" cy="125" r="0.55" fill="#d8c88a" opacity="0.65"/><circle cx="585" cy="117" r="0.75" fill="#e0b080" opacity="0.65"/><circle cx="366" cy="176" r="0.5" fill="#e8d89a" opacity="0.8"/><circle cx="232" cy="134" r="0.45" fill="#d8c88a" opacity="0.65"/><circle cx="364" cy="156" r="0.5" fill="#d8c88a" opacity="0.8"/><circle cx="414" cy="131" r="0.5" fill="#d8c88a" opacity="0.35"/><circle cx="430" cy="130" r="0.4" fill="#9fc0d8" opacity="0.65"/><circle cx="469" cy="180" r="0.6" fill="#f0e6c8" opacity="0.35"/><circle cx="255" cy="182" r="0.55" fill="#cfd8e8" opacity="0.8"/><circle cx="489" cy="76" r="0.55" fill="#cfd8e8" opacity="0.45"/><circle cx="520" cy="85" r="0.4" fill="#d8c88a" opacity="0.8"/><circle cx="301" cy="84" r="0.4" fill="#9fc0d8" opacity="0.45"/><circle cx="446" cy="83" r="0.5" fill="#f0e6c8" opacity="0.65"/><circle cx="312" cy="106" r="0.4" fill="#9fc0d8" opacity="0.35"/><circle cx="423" cy="162" r="0.5" fill="#9fc0d8" opacity="0.35"/><circle cx="545" cy="87" r="0.4" fill="#9fc0d8" opacity="0.45"/><circle cx="440" cy="171" r="0.5" fill="#e0b080" opacity="0.65"/><circle cx="326" cy="151" r="0.4" fill="#cfd8e8" opacity="0.65"/><circle cx="439" cy="114" r="0.5" fill="#e0b080" opacity="0.8"/><circle cx="249" cy="182" r="0.55" fill="#cfd8e8" opacity="0.45"/><circle cx="356" cy="116" r="0.6" fill="#cfd8e8" opacity="0.55"/><circle cx="358" cy="129" r="0.6" fill="#cfd8e8" opacity="0.8"/><circle cx="590" cy="194" r="0.55" fill="#f0e6c8" opacity="0.55"/><circle cx="576" cy="189" r="0.45" fill="#d8c88a" opacity="0.8"/><circle cx="463" cy="183" r="0.6" fill="#e8d89a" opacity="0.35"/><circle cx="314" cy="169" r="0.5" fill="#cfd8e8" opacity="0.8"/><circle cx="570" cy="127" r="0.45" fill="#e0b080" opacity="0.35"/><circle cx="330" cy="182" r="0.45" fill="#f0e6c8" opacity="0.8"/><circle cx="478" cy="79" r="0.45" fill="#f0e6c8" opacity="0.65"/><circle cx="477" cy="100" r="0.75" fill="#e0b080" opacity="0.8"/><circle cx="498" cy="161" r="0.55" fill="#e0b080" opacity="0.8"/><circle cx="368" cy="127" r="0.55" fill="#d8c88a" opacity="0.8"/><circle cx="512" cy="208" r="0.55" fill="#e8d89a" opacity="0.35"/><circle cx="308" cy="174" r="0.75" fill="#9fc0d8" opacity="0.45"/><circle cx="534" cy="193" r="0.5" fill="#f0e6c8" opacity="0.65"/><circle cx="343" cy="155" r="0.45" fill="#9fc0d8" opacity="0.45"/><circle cx="281" cy="94" r="0.6" fill="#9fc0d8" opacity="0.45"/><circle cx="398" cy="191" r="0.6" fill="#d8c88a" opacity="0.45"/><circle cx="489" cy="103" r="0.5" fill="#cfd8e8" opacity="0.55"/><circle cx="247" cy="101" r="0.4" fill="#f0e6c8" opacity="0.45"/><circle cx="361" cy="75" r="0.75" fill="#f0e6c8" opacity="0.35"/><circle cx="252" cy="202" r="0.55" fill="#cfd8e8" opacity="0.45"/><circle cx="225" cy="87" r="0.75" fill="#f0e6c8" opacity="0.8"/><circle cx="470" cy="85" r="0.55" fill="#cfd8e8" opacity="0.45"/><circle cx="586" cy="124" r="0.4" fill="#e8d89a" opacity="0.8"/><circle cx="224" cy="170" r="0.75" fill="#f0e6c8" opacity="0.8"/><circle cx="272" cy="127" r="0.6" fill="#f0e6c8" opacity="0.55"/><circle cx="348" cy="95" r="0.4" fill="#e0b080" opacity="0.8"/><circle cx="515" cy="163" r="0.5" fill="#9fc0d8" opacity="0.65"/><circle cx="567" cy="183" r="0.6" fill="#e0b080" opacity="0.55"/><circle cx="234" cy="141" r="0.6" fill="#e8d89a" opacity="0.35"/><circle cx="343" cy="169" r="0.75" fill="#cfd8e8" opacity="0.55"/><circle cx="573" cy="179" r="0.55" fill="#f0e6c8" opacity="0.65"/><circle cx="394" cy="150" r="0.4" fill="#e0b080" opacity="0.8"/><circle cx="283" cy="88" r="0.75" fill="#e0b080" opacity="0.45"/><circle cx="296" cy="101" r="0.75" fill="#cfd8e8" opacity="0.45"/><circle cx="578" cy="209" r="0.55" fill="#f0e6c8" opacity="0.35"/><circle cx="457" cy="97" r="0.4" fill="#d8c88a" opacity="0.65"/><circle cx="245" cy="135" r="0.4" fill="#f0e6c8" opacity="0.65"/><circle cx="408" cy="85" r="0.45" fill="#d8c88a" opacity="0.35"/><circle cx="439" cy="105" r="0.5" fill="#e0b080" opacity="0.65"/><circle cx="374" cy="81" r="0.6" fill="#e8d89a" opacity="0.55"/><circle cx="230" cy="180" r="0.55" fill="#d8c88a" opacity="0.45"/><circle cx="344" cy="75" r="0.4" fill="#e8d89a" opacity="0.65"/><circle cx="543" cy="140" r="0.55" fill="#cfd8e8" opacity="0.35"/><circle cx="439" cy="152" r="0.4" fill="#f0e6c8" opacity="0.55"/><circle cx="372" cy="203" r="0.55" fill="#9fc0d8" opacity="0.8"/><circle cx="359" cy="140" r="0.55" fill="#e0b080" opacity="0.35"/><circle cx="406" cy="132" r="0.6" fill="#9fc0d8" opacity="0.35"/><circle cx="260" cy="154" r="0.5" fill="#e8d89a" opacity="0.8"/><circle cx="551" cy="163" r="0.5" fill="#e0b080" opacity="0.35"/><circle cx="531" cy="195" r="0.45" fill="#cfd8e8" opacity="0.8"/><circle cx="395" cy="87" r="0.75" fill="#9fc0d8" opacity="0.8"/><circle cx="236" cy="115" r="0.45" fill="#9fc0d8" opacity="0.65"/><circle cx="564" cy="150" r="0.75" fill="#e8d89a" opacity="0.65"/><circle cx="391" cy="148" r="0.75" fill="#9fc0d8" opacity="0.45"/><circle cx="453" cy="138" r="0.75" fill="#9fc0d8" opacity="0.35"/><circle cx="485" cy="202" r="0.4" fill="#d8c88a" opacity="0.55"/><circle cx="486" cy="168" r="0.45" fill="#e8d89a" opacity="0.45"/><circle cx="521" cy="105" r="0.55" fill="#d8c88a" opacity="0.8"/><circle cx="589" cy="178" r="0.6" fill="#9fc0d8" opacity="0.45"/><circle cx="580" cy="179" r="0.4" fill="#d8c88a" opacity="0.65"/><circle cx="413" cy="125" r="0.5" fill="#d8c88a" opacity="0.65"/><circle cx="283" cy="149" r="0.5" fill="#cfd8e8" opacity="0.35"/><circle cx="417" cy="181" r="0.4" fill="#e8d89a" opacity="0.45"/><circle cx="535" cy="73" r="0.6" fill="#e0b080" opacity="0.35"/><circle cx="340" cy="83" r="0.55" fill="#d8c88a" opacity="0.55"/><circle cx="422" cy="78" r="0.4" fill="#f0e6c8" opacity="0.8"/><circle cx="502" cy="139" r="0.4" fill="#d8c88a" opacity="0.45"/><circle cx="525" cy="104" r="0.4" fill="#e8d89a" opacity="0.55"/><circle cx="253" cy="177" r="0.55" fill="#e0b080" opacity="0.8"/><circle cx="533" cy="207" r="0.5" fill="#d8c88a" opacity="0.45"/><circle cx="335" cy="166" r="0.75" fill="#d8c88a" opacity="0.8"/><circle cx="387" cy="183" r="0.6" fill="#9fc0d8" opacity="0.45"/><circle cx="268" cy="190" r="0.45" fill="#d8c88a" opacity="0.35"/><circle cx="472" cy="90" r="0.5" fill="#e8d89a" opacity="0.55"/><circle cx="339" cy="174" r="0.75" fill="#f0e6c8" opacity="0.8"/><circle cx="277" cy="87" r="0.5" fill="#f0e6c8" opacity="0.45"/><circle cx="278" cy="83" r="0.4" fill="#e8d89a" opacity="0.65"/><circle cx="248" cy="107" r="0.75" fill="#e8d89a" opacity="0.65"/><circle cx="454" cy="89" r="0.55" fill="#cfd8e8" opacity="0.45"/><circle cx="308" cy="180" r="0.75" fill="#cfd8e8" opacity="0.65"/><circle cx="419" cy="168" r="0.45" fill="#f0e6c8" opacity="0.35"/><circle cx="328" cy="111" r="0.75" fill="#e8d89a" opacity="0.45"/><circle cx="382" cy="133" r="0.45" fill="#e0b080" opacity="0.65"/><circle cx="332" cy="158" r="0.4" fill="#e8d89a" opacity="0.65"/><circle cx="240" cy="133" r="0.55" fill="#cfd8e8" opacity="0.65"/><circle cx="315" cy="87" r="0.6" fill="#e0b080" opacity="0.45"/><circle cx="411" cy="99" r="0.4" fill="#f0e6c8" opacity="0.65"/><circle cx="534" cy="204" r="0.5" fill="#f0e6c8" opacity="0.35"/><circle cx="428" cy="171" r="0.4" fill="#f0e6c8" opacity="0.45"/><circle cx="333" cy="143" r="0.5" fill="#cfd8e8" opacity="0.65"/><circle cx="532" cy="112" r="0.6" fill="#f0e6c8" opacity="0.8"/><circle cx="583" cy="92" r="0.5" fill="#e0b080" opacity="0.8"/><circle cx="548" cy="129" r="0.4" fill="#cfd8e8" opacity="0.8"/><circle cx="528" cy="124" r="0.45" fill="#f0e6c8" opacity="0.35"/><circle cx="394" cy="129" r="0.45" fill="#e0b080" opacity="0.35"/><circle cx="250" cy="206" r="0.45" fill="#cfd8e8" opacity="0.65"/><circle cx="293" cy="124" r="0.75" fill="#e0b080" opacity="0.65"/><circle cx="457" cy="123" r="0.4" fill="#d8c88a" opacity="0.35"/><circle cx="334" cy="89" r="0.75" fill="#f0e6c8" opacity="0.65"/><circle cx="468" cy="151" r="0.75" fill="#d8c88a" opacity="0.45"/><circle cx="574" cy="153" r="0.6" fill="#f0e6c8" opacity="0.55"/><circle cx="311" cy="116" r="0.55" fill="#e0b080" opacity="0.65"/><circle cx="230" cy="141" r="0.6" fill="#d8c88a" opacity="0.35"/><circle cx="526" cy="81" r="0.5" fill="#e8d89a" opacity="0.45"/><circle cx="306" cy="179" r="0.55" fill="#9fc0d8" opacity="0.65"/><circle cx="419" cy="79" r="0.4" fill="#d8c88a" opacity="0.45"/><circle cx="479" cy="125" r="0.6" fill="#e0b080" opacity="0.55"/><circle cx="354" cy="92" r="0.5" fill="#e0b080" opacity="0.65"/><circle cx="301" cy="79" r="0.55" fill="#cfd8e8" opacity="0.35"/><circle cx="544" cy="128" r="0.75" fill="#cfd8e8" opacity="0.55"/><circle cx="386" cy="105" r="0.45" fill="#f0e6c8" opacity="0.45"/><circle cx="277" cy="177" r="0.75" fill="#cfd8e8" opacity="0.45"/><circle cx="443" cy="162" r="0.55" fill="#9fc0d8" opacity="0.35"/><circle cx="289" cy="205" r="0.75" fill="#cfd8e8" opacity="0.8"/><circle cx="306" cy="183" r="0.6" fill="#cfd8e8" opacity="0.65"/><circle cx="304" cy="188" r="0.4" fill="#e8d89a" opacity="0.65"/><circle cx="479" cy="132" r="0.75" fill="#e0b080" opacity="0.55"/><circle cx="331" cy="105" r="0.75" fill="#d8c88a" opacity="0.55"/><circle cx="295" cy="159" r="0.6" fill="#f0e6c8" opacity="0.8"/><circle cx="352" cy="168" r="0.55" fill="#e8d89a" opacity="0.35"/><circle cx="435" cy="175" r="0.6" fill="#9fc0d8" opacity="0.65"/><circle cx="456" cy="161" r="0.55" fill="#d8c88a" opacity="0.65"/><circle cx="515" cy="148" r="0.45" fill="#f0e6c8" opacity="0.35"/><circle cx="395" cy="194" r="0.5" fill="#f0e6c8" opacity="0.35"/><circle cx="481" cy="113" r="0.75" fill="#d8c88a" opacity="0.65"/><circle cx="521" cy="158" r="0.45" fill="#cfd8e8" opacity="0.8"/><circle cx="403" cy="98" r="0.45" fill="#cfd8e8" opacity="0.65"/><circle cx="347" cy="86" r="0.5" fill="#e0b080" opacity="0.45"/><circle cx="436" cy="97" r="0.75" fill="#cfd8e8" opacity="0.35"/><circle cx="358" cy="153" r="0.4" fill="#cfd8e8" opacity="0.55"/><circle cx="506" cy="129" r="0.75" fill="#f0e6c8" opacity="0.55"/><circle cx="507" cy="165" r="0.6" fill="#cfd8e8" opacity="0.55"/><circle cx="467" cy="205" r="0.75" fill="#e8d89a" opacity="0.45"/><circle cx="342" cy="117" r="0.45" fill="#f0e6c8" opacity="0.55"/><circle cx="558" cy="76" r="0.75" fill="#cfd8e8" opacity="0.55"/><circle cx="221" cy="195" r="0.5" fill="#d8c88a" opacity="0.45"/><circle cx="355" cy="160" r="0.5" fill="#e8d89a" opacity="0.8"/><circle cx="284" cy="107" r="0.6" fill="#f0e6c8" opacity="0.65"/><circle cx="332" cy="145" r="0.75" fill="#e8d89a" opacity="0.55"/><circle cx="376" cy="158" r="0.5" fill="#9fc0d8" opacity="0.45"/><circle cx="397" cy="118" r="0.45" fill="#d8c88a" opacity="0.55"/><circle cx="448" cy="86" r="0.45" fill="#d8c88a" opacity="0.35"/><circle cx="291" cy="144" r="0.45" fill="#9fc0d8" opacity="0.65"/><circle cx="350" cy="141" r="0.75" fill="#e8d89a" opacity="0.45"/><circle cx="469" cy="104" r="0.6" fill="#f0e6c8" opacity="0.45"/><circle cx="233" cy="120" r="0.4" fill="#cfd8e8" opacity="0.55"/><circle cx="261" cy="93" r="0.6" fill="#d8c88a" opacity="0.35"/><circle cx="413" cy="93" r="0.55" fill="#d8c88a" opacity="0.55"/><circle cx="299" cy="177" r="0.55" fill="#e8d89a" opacity="0.65"/><circle cx="345" cy="127" r="0.5" fill="#e8d89a" opacity="0.65"/><circle cx="555" cy="100" r="0.6" fill="#9fc0d8" opacity="0.35"/><circle cx="479" cy="136" r="0.75" fill="#d8c88a" opacity="0.8"/><circle cx="507" cy="119" r="0.45" fill="#e8d89a" opacity="0.45"/><circle cx="515" cy="171" r="0.5" fill="#cfd8e8" opacity="0.35"/><circle cx="372" cy="175" r="0.4" fill="#cfd8e8" opacity="0.65"/><circle cx="523" cy="136" r="0.5" fill="#cfd8e8" opacity="0.55"/><circle cx="527" cy="186" r="0.45" fill="#f0e6c8" opacity="0.45"/><circle cx="246" cy="190" r="0.75" fill="#9fc0d8" opacity="0.65"/><circle cx="288" cy="172" r="0.4" fill="#e0b080" opacity="0.35"/><circle cx="417" cy="188" r="0.4" fill="#9fc0d8" opacity="0.45"/><circle cx="222" cy="199" r="0.55" fill="#9fc0d8" opacity="0.55"/><circle cx="321" cy="77" r="0.6" fill="#cfd8e8" opacity="0.8"/><circle cx="232" cy="92" r="0.45" fill="#e0b080" opacity="0.45"/><circle cx="309" cy="77" r="0.75" fill="#e0b080" opacity="0.8"/><circle cx="319" cy="139" r="0.5" fill="#e8d89a" opacity="0.65"/><circle cx="376" cy="81" r="0.4" fill="#f0e6c8" opacity="0.8"/><circle cx="536" cy="173" r="0.4" fill="#f0e6c8" opacity="0.45"/><circle cx="404" cy="140" r="0.45" fill="#9fc0d8" opacity="0.65"/><circle cx="522" cy="91" r="0.55" fill="#cfd8e8" opacity="0.55"/><circle cx="248" cy="89" r="0.75" fill="#cfd8e8" opacity="0.8"/><circle cx="253" cy="189" r="0.6" fill="#9fc0d8" opacity="0.45"/><circle cx="593" cy="102" r="0.4" fill="#e8d89a" opacity="0.55"/><circle cx="304" cy="104" r="0.4" fill="#f0e6c8" opacity="0.45"/><circle cx="229" cy="198" r="0.55" fill="#e0b080" opacity="0.45"/><circle cx="505" cy="114" r="0.75" fill="#e0b080" opacity="0.45"/><circle cx="271" cy="166" r="0.55" fill="#f0e6c8" opacity="0.45"/><circle cx="232" cy="149" r="0.45" fill="#cfd8e8" opacity="0.35"/><circle cx="495" cy="133" r="0.4" fill="#e0b080" opacity="0.55"/><circle cx="463" cy="179" r="0.6" fill="#9fc0d8" opacity="0.8"/><circle cx="273" cy="166" r="0.4" fill="#e0b080" opacity="0.55"/><circle cx="440" cy="140" r="0.55" fill="#9fc0d8" opacity="0.35"/><circle cx="265" cy="131" r="0.55" fill="#e8d89a" opacity="0.65"/><circle cx="308" cy="144" r="0.6" fill="#f0e6c8" opacity="0.45"/><circle cx="379" cy="124" r="0.6" fill="#e8d89a" opacity="0.65"/><circle cx="222" cy="171" r="0.55" fill="#f0e6c8" opacity="0.65"/><circle cx="283" cy="89" r="0.4" fill="#d8c88a" opacity="0.8"/><circle cx="222" cy="192" r="0.75" fill="#cfd8e8" opacity="0.65"/><circle cx="473" cy="197" r="0.45" fill="#e0b080" opacity="0.45"/><circle cx="387" cy="185" r="0.55" fill="#f0e6c8" opacity="0.65"/><circle cx="260" cy="98" r="0.5" fill="#e8d89a" opacity="0.55"/><circle cx="442" cy="207" r="0.75" fill="#f0e6c8" opacity="0.45"/><circle cx="585" cy="131" r="0.45" fill="#e8d89a" opacity="0.65"/><circle cx="470" cy="137" r="0.6" fill="#d8c88a" opacity="0.35"/><circle cx="481" cy="74" r="0.55" fill="#d8c88a" opacity="0.8"/><circle cx="570" cy="172" r="0.4" fill="#9fc0d8" opacity="0.45"/><circle cx="383" cy="103" r="0.5" fill="#e8d89a" opacity="0.65"/><circle cx="449" cy="188" r="0.75" fill="#e0b080" opacity="0.8"/><circle cx="342" cy="201" r="0.4" fill="#cfd8e8" opacity="0.8"/><circle cx="223" cy="107" r="0.6" fill="#d8c88a" opacity="0.8"/><circle cx="347" cy="78" r="0.4" fill="#cfd8e8" opacity="0.8"/><circle cx="294" cy="190" r="0.6" fill="#9fc0d8" opacity="0.45"/><circle cx="559" cy="143" r="0.5" fill="#9fc0d8" opacity="0.55"/><circle cx="386" cy="172" r="0.5" fill="#cfd8e8" opacity="0.65"/><circle cx="297" cy="156" r="0.6" fill="#d8c88a" opacity="0.65"/><circle cx="266" cy="102" r="0.5" fill="#d8c88a" opacity="0.65"/><circle cx="528" cy="114" r="0.55" fill="#f0e6c8" opacity="0.45"/><circle cx="511" cy="196" r="0.55" fill="#e0b080" opacity="0.55"/><circle cx="283" cy="198" r="0.5" fill="#e0b080" opacity="0.45"/><circle cx="361" cy="110" r="0.45" fill="#d8c88a" opacity="0.55"/><circle cx="596" cy="184" r="0.6" fill="#9fc0d8" opacity="0.8"/><circle cx="295" cy="97" r="0.5" fill="#e0b080" opacity="0.8"/><circle cx="317" cy="165" r="0.75" fill="#f0e6c8" opacity="0.45"/><circle cx="242" cy="108" r="0.45" fill="#e8d89a" opacity="0.55"/><circle cx="426" cy="117" r="0.45" fill="#cfd8e8" opacity="0.55"/><circle cx="516" cy="165" r="0.75" fill="#e8d89a" opacity="0.8"/><circle cx="465" cy="88" r="0.4" fill="#e8d89a" opacity="0.45"/><circle cx="432" cy="191" r="0.4" fill="#e0b080" opacity="0.8"/><circle cx="546" cy="99" r="0.55" fill="#9fc0d8" opacity="0.55"/><circle cx="389" cy="188" r="0.5" fill="#cfd8e8" opacity="0.35"/><circle cx="367" cy="179" r="0.6" fill="#cfd8e8" opacity="0.35"/><circle cx="500" cy="202" r="0.6" fill="#e0b080" opacity="0.55"/><circle cx="323" cy="110" r="0.4" fill="#d8c88a" opacity="0.35"/><circle cx="248" cy="125" r="0.6" fill="#d8c88a" opacity="0.65"/><circle cx="345" cy="110" r="0.75" fill="#d8c88a" opacity="0.8"/><circle cx="411" cy="97" r="0.4" fill="#9fc0d8" opacity="0.45"/><circle cx="228" cy="123" r="0.6" fill="#f0e6c8" opacity="0.45"/><circle cx="427" cy="172" r="0.6" fill="#f0e6c8" opacity="0.45"/><circle cx="232" cy="186" r="0.4" fill="#e0b080" opacity="0.55"/><circle cx="535" cy="76" r="0.4" fill="#d8c88a" opacity="0.45"/><circle cx="332" cy="184" r="0.75" fill="#e8d89a" opacity="0.8"/><circle cx="478" cy="181" r="0.55" fill="#e0b080" opacity="0.45"/><circle cx="423" cy="113" r="0.45" fill="#d8c88a" opacity="0.65"/><circle cx="279" cy="128" r="0.45" fill="#cfd8e8" opacity="0.65"/><circle cx="268" cy="117" r="0.45" fill="#f0e6c8" opacity="0.55"/><circle cx="521" cy="85" r="0.5" fill="#9fc0d8" opacity="0.65"/><circle cx="545" cy="198" r="0.6" fill="#9fc0d8" opacity="0.8"/><circle cx="547" cy="150" r="0.6" fill="#e8d89a" opacity="0.45"/><circle cx="549" cy="117" r="0.55" fill="#e8d89a" opacity="0.8"/><circle cx="253" cy="97" r="0.55" fill="#cfd8e8" opacity="0.55"/><circle cx="237" cy="175" r="0.5" fill="#e0b080" opacity="0.35"/><circle cx="358" cy="120" r="0.45" fill="#f0e6c8" opacity="0.65"/><circle cx="465" cy="79" r="0.5" fill="#cfd8e8" opacity="0.8"/><circle cx="255" cy="116" r="0.4" fill="#cfd8e8" opacity="0.8"/><circle cx="370" cy="190" r="0.6" fill="#9fc0d8" opacity="0.8"/><circle cx="354" cy="110" r="0.4" fill="#cfd8e8" opacity="0.35"/><circle cx="480" cy="162" r="0.55" fill="#e8d89a" opacity="0.35"/><circle cx="525" cy="145" r="0.6" fill="#9fc0d8" opacity="0.45"/><circle cx="372" cy="149" r="0.4" fill="#d8c88a" opacity="0.45"/><circle cx="255" cy="92" r="0.75" fill="#f0e6c8" opacity="0.8"/><circle cx="523" cy="167" r="0.45" fill="#e8d89a" opacity="0.45"/><circle cx="220" cy="105" r="0.45" fill="#f0e6c8" opacity="0.8"/><circle cx="551" cy="93" r="0.6" fill="#e0b080" opacity="0.8"/><circle cx="368" cy="138" r="0.5" fill="#e8d89a" opacity="0.45"/><circle cx="475" cy="114" r="0.75" fill="#f0e6c8" opacity="0.35"/><circle cx="355" cy="193" r="0.75" fill="#9fc0d8" opacity="0.65"/><circle cx="265" cy="155" r="0.75" fill="#9fc0d8" opacity="0.55"/><circle cx="582" cy="74" r="0.75" fill="#e0b080" opacity="0.65"/><circle cx="426" cy="148" r="0.4" fill="#cfd8e8" opacity="0.65"/><circle cx="488" cy="185" r="0.5" fill="#9fc0d8" opacity="0.35"/><circle cx="463" cy="79" r="0.4" fill="#f0e6c8" opacity="0.35"/><circle cx="250" cy="127" r="0.45" fill="#cfd8e8" opacity="0.65"/><circle cx="463" cy="133" r="0.6" fill="#9fc0d8" opacity="0.65"/><circle cx="437" cy="145" r="0.6" fill="#cfd8e8" opacity="0.65"/><circle cx="588" cy="203" r="0.75" fill="#d8c88a" opacity="0.65"/><circle cx="245" cy="90" r="0.5" fill="#e0b080" opacity="0.45"/><circle cx="423" cy="198" r="0.75" fill="#d8c88a" opacity="0.45"/><circle cx="300" cy="103" r="0.4" fill="#f0e6c8" opacity="0.55"/><circle cx="325" cy="75" r="0.55" fill="#cfd8e8" opacity="0.8"/><circle cx="364" cy="172" r="0.75" fill="#9fc0d8" opacity="0.45"/><circle cx="395" cy="136" r="0.5" fill="#f0e6c8" opacity="0.35"/><circle cx="253" cy="202" r="0.5" fill="#d8c88a" opacity="0.8"/><circle cx="551" cy="189" r="0.55" fill="#d8c88a" opacity="0.45"/><circle cx="319" cy="173" r="0.6" fill="#e8d89a" opacity="0.55"/><circle cx="218" cy="121" r="0.5" fill="#f0e6c8" opacity="0.8"/><circle cx="502" cy="202" r="0.5" fill="#cfd8e8" opacity="0.55"/><circle cx="527" cy="92" r="0.4" fill="#9fc0d8" opacity="0.35"/><circle cx="392" cy="207" r="0.5" fill="#d8c88a" opacity="0.8"/><circle cx="256" cy="124" r="0.55" fill="#9fc0d8" opacity="0.55"/><circle cx="581" cy="107" r="0.4" fill="#e8d89a" opacity="0.8"/><circle cx="317" cy="149" r="0.5" fill="#e8d89a" opacity="0.8"/><circle cx="428" cy="170" r="0.55" fill="#9fc0d8" opacity="0.55"/><circle cx="563" cy="176" r="0.5" fill="#f0e6c8" opacity="0.35"/><circle cx="576" cy="108" r="0.5" fill="#e8d89a" opacity="0.8"/><circle cx="238" cy="148" r="0.6" fill="#e0b080" opacity="0.65"/><circle cx="252" cy="198" r="0.4" fill="#9fc0d8" opacity="0.55"/><circle cx="349" cy="93" r="0.4" fill="#e0b080" opacity="0.65"/><circle cx="387" cy="105" r="0.45" fill="#e0b080" opacity="0.8"/><circle cx="524" cy="200" r="0.5" fill="#e0b080" opacity="0.65"/><circle cx="471" cy="188" r="0.55" fill="#9fc0d8" opacity="0.8"/><circle cx="435" cy="184" r="0.4" fill="#e8d89a" opacity="0.8"/><circle cx="421" cy="151" r="0.45" fill="#f0e6c8" opacity="0.55"/><circle cx="287" cy="129" r="0.6" fill="#cfd8e8" opacity="0.65"/><circle cx="289" cy="166" r="0.75" fill="#9fc0d8" opacity="0.45"/><circle cx="265" cy="133" r="0.6" fill="#e0b080" opacity="0.45"/><circle cx="488" cy="207" r="0.4" fill="#9fc0d8" opacity="0.55"/><circle cx="338" cy="81" r="0.5" fill="#d8c88a" opacity="0.45"/><circle cx="440" cy="206" r="0.45" fill="#e8d89a" opacity="0.45"/><circle cx="257" cy="103" r="0.55" fill="#9fc0d8" opacity="0.35"/><circle cx="340" cy="116" r="0.55" fill="#d8c88a" opacity="0.65"/><circle cx="395" cy="94" r="0.55" fill="#f0e6c8" opacity="0.45"/><circle cx="420" cy="165" r="0.4" fill="#f0e6c8" opacity="0.8"/><circle cx="566" cy="87" r="0.75" fill="#d8c88a" opacity="0.55"/><circle cx="541" cy="84" r="0.75" fill="#f0e6c8" opacity="0.65"/><circle cx="588" cy="124" r="0.45" fill="#9fc0d8" opacity="0.65"/><circle cx="405" cy="199" r="0.5" fill="#9fc0d8" opacity="0.35"/><circle cx="558" cy="208" r="0.6" fill="#d8c88a" opacity="0.55"/><circle cx="358" cy="154" r="0.75" fill="#d8c88a" opacity="0.45"/><circle cx="386" cy="184" r="0.55" fill="#9fc0d8" opacity="0.65"/><circle cx="382" cy="162" r="0.45" fill="#d8c88a" opacity="0.45"/><circle cx="348" cy="207" r="0.4" fill="#e8d89a" opacity="0.55"/><circle cx="261" cy="98" r="0.55" fill="#e0b080" opacity="0.65"/><circle cx="217" cy="83" r="0.4" fill="#9fc0d8" opacity="0.65"/><circle cx="288" cy="207" r="0.75" fill="#d8c88a" opacity="0.45"/><circle cx="504" cy="120" r="0.5" fill="#d8c88a" opacity="0.55"/><circle cx="463" cy="99" r="0.5" fill="#d8c88a" opacity="0.35"/><circle cx="575" cy="203" r="0.75" fill="#9fc0d8" opacity="0.35"/><circle cx="230" cy="114" r="0.6" fill="#e0b080" opacity="0.35"/><circle cx="225" cy="204" r="0.6" fill="#f0e6c8" opacity="0.65"/><circle cx="352" cy="187" r="0.4" fill="#e0b080" opacity="0.8"/><circle cx="483" cy="92" r="0.4" fill="#d8c88a" opacity="0.65"/><circle cx="335" cy="109" r="0.6" fill="#f0e6c8" opacity="0.35"/><circle cx="326" cy="194" r="0.4" fill="#e8d89a" opacity="0.35"/><circle cx="560" cy="184" r="0.4" fill="#9fc0d8" opacity="0.65"/><circle cx="542" cy="180" r="0.55" fill="#e8d89a" opacity="0.35"/><circle cx="318" cy="126" r="0.6" fill="#e0b080" opacity="0.8"/><circle cx="580" cy="127" r="0.45" fill="#e8d89a" opacity="0.55"/><circle cx="448" cy="167" r="0.6" fill="#f0e6c8" opacity="0.8"/><circle cx="437" cy="207" r="0.75" fill="#e0b080" opacity="0.35"/><circle cx="247" cy="175" r="0.45" fill="#d8c88a" opacity="0.55"/><circle cx="596" cy="126" r="0.4" fill="#cfd8e8" opacity="0.65"/><circle cx="469" cy="141" r="0.55" fill="#d8c88a" opacity="0.55"/><circle cx="414" cy="177" r="0.5" fill="#f0e6c8" opacity="0.45"/><circle cx="500" cy="169" r="0.45" fill="#cfd8e8" opacity="0.35"/><circle cx="539" cy="173" r="0.6" fill="#d8c88a" opacity="0.65"/><circle cx="571" cy="125" r="0.4" fill="#e8d89a" opacity="0.35"/><circle cx="335" cy="90" r="0.4" fill="#e0b080" opacity="0.35"/><circle cx="495" cy="157" r="0.45" fill="#e8d89a" opacity="0.45"/><circle cx="531" cy="157" r="0.45" fill="#9fc0d8" opacity="0.8"/><circle cx="376" cy="106" r="0.5" fill="#d8c88a" opacity="0.55"/><circle cx="457" cy="200" r="0.45" fill="#f0e6c8" opacity="0.55"/><circle cx="583" cy="136" r="0.5" fill="#d8c88a" opacity="0.8"/><circle cx="303" cy="114" r="0.6" fill="#e0b080" opacity="0.8"/><circle cx="439" cy="180" r="0.5" fill="#e0b080" opacity="0.35"/><circle cx="496" cy="147" r="0.75" fill="#d8c88a" opacity="0.35"/><circle cx="259" cy="103" r="0.75" fill="#e0b080" opacity="0.45"/><circle cx="538" cy="95" r="0.45" fill="#e8d89a" opacity="0.8"/><circle cx="315" cy="125" r="0.45" fill="#f0e6c8" opacity="0.35"/><circle cx="526" cy="166" r="0.5" fill="#d8c88a" opacity="0.65"/><circle cx="316" cy="117" r="0.45" fill="#e8d89a" opacity="0.8"/><circle cx="535" cy="173" r="0.55" fill="#e0b080" opacity="0.35"/><circle cx="464" cy="84" r="0.55" fill="#f0e6c8" opacity="0.45"/><circle cx="533" cy="139" r="0.45" fill="#e8d89a" opacity="0.8"/><circle cx="389" cy="207" r="0.4" fill="#cfd8e8" opacity="0.45"/><circle cx="452" cy="165" r="0.75" fill="#9fc0d8" opacity="0.8"/><circle cx="524" cy="145" r="0.75" fill="#e8d89a" opacity="0.45"/><circle cx="535" cy="191" r="0.5" fill="#e8d89a" opacity="0.35"/><circle cx="281" cy="120" r="0.45" fill="#9fc0d8" opacity="0.65"/><circle cx="322" cy="100" r="0.55" fill="#9fc0d8" opacity="0.35"/><circle cx="473" cy="105" r="0.55" fill="#f0e6c8" opacity="0.35"/><circle cx="378" cy="145" r="0.45" fill="#d8c88a" opacity="0.55"/><circle cx="273" cy="163" r="0.45" fill="#9fc0d8" opacity="0.45"/><circle cx="404" cy="203" r="0.45" fill="#d8c88a" opacity="0.45"/><circle cx="272" cy="83" r="0.5" fill="#e0b080" opacity="0.55"/><circle cx="466" cy="85" r="0.45" fill="#e8d89a" opacity="0.8"/><circle cx="570" cy="75" r="0.75" fill="#e8d89a" opacity="0.8"/><circle cx="432" cy="155" r="0.4" fill="#e8d89a" opacity="0.55"/><circle cx="308" cy="153" r="0.6" fill="#cfd8e8" opacity="0.55"/><circle cx="577" cy="127" r="0.55" fill="#9fc0d8" opacity="0.8"/><circle cx="596" cy="167" r="0.45" fill="#e0b080" opacity="0.8"/><circle cx="563" cy="182" r="0.4" fill="#cfd8e8" opacity="0.45"/><circle cx="298" cy="150" r="0.55" fill="#d8c88a" opacity="0.65"/><circle cx="514" cy="103" r="0.75" fill="#e8d89a" opacity="0.65"/><circle cx="516" cy="129" r="0.5" fill="#e0b080" opacity="0.55"/><circle cx="593" cy="209" r="0.75" fill="#cfd8e8" opacity="0.65"/><circle cx="481" cy="79" r="0.55" fill="#cfd8e8" opacity="0.8"/><circle cx="226" cy="137" r="0.6" fill="#cfd8e8" opacity="0.55"/><circle cx="256" cy="139" r="0.4" fill="#d8c88a" opacity="0.65"/><circle cx="385" cy="120" r="0.6" fill="#cfd8e8" opacity="0.8"/><circle cx="345" cy="157" r="0.55" fill="#e8d89a" opacity="0.8"/><circle cx="249" cy="123" r="0.45" fill="#cfd8e8" opacity="0.55"/><circle cx="338" cy="129" r="0.6" fill="#e8d89a" opacity="0.45"/><circle cx="267" cy="101" r="0.5" fill="#d8c88a" opacity="0.65"/><circle cx="342" cy="91" r="0.6" fill="#f0e6c8" opacity="0.8"/><circle cx="435" cy="204" r="0.75" fill="#9fc0d8" opacity="0.8"/><circle cx="535" cy="105" r="0.75" fill="#e8d89a" opacity="0.45"/><circle cx="420" cy="152" r="0.4" fill="#e0b080" opacity="0.55"/><circle cx="358" cy="160" r="0.5" fill="#f0e6c8" opacity="0.8"/><circle cx="357" cy="110" r="0.45" fill="#d8c88a" opacity="0.65"/><circle cx="319" cy="139" r="0.6" fill="#e8d89a" opacity="0.45"/><circle cx="395" cy="191" r="0.55" fill="#9fc0d8" opacity="0.55"/><circle cx="518" cy="89" r="0.4" fill="#cfd8e8" opacity="0.65"/><circle cx="526" cy="137" r="0.55" fill="#cfd8e8" opacity="0.55"/><circle cx="541" cy="197" r="0.45" fill="#e8d89a" opacity="0.45"/><circle cx="482" cy="100" r="0.55" fill="#9fc0d8" opacity="0.45"/><circle cx="302" cy="109" r="0.4" fill="#e8d89a" opacity="0.65"/><circle cx="316" cy="198" r="0.75" fill="#d8c88a" opacity="0.8"/><circle cx="539" cy="112" r="0.4" fill="#cfd8e8" opacity="0.8"/><circle cx="541" cy="107" r="0.75" fill="#d8c88a" opacity="0.45"/><circle cx="462" cy="157" r="0.6" fill="#f0e6c8" opacity="0.45"/><circle cx="395" cy="92" r="0.75" fill="#9fc0d8" opacity="0.55"/><circle cx="334" cy="186" r="0.4" fill="#cfd8e8" opacity="0.65"/><circle cx="242" cy="126" r="0.55" fill="#d8c88a" opacity="0.55"/><circle cx="513" cy="192" r="0.4" fill="#d8c88a" opacity="0.45"/><circle cx="409" cy="205" r="0.55" fill="#d8c88a" opacity="0.35"/><circle cx="336" cy="117" r="0.55" fill="#d8c88a" opacity="0.45"/><circle cx="274" cy="203" r="0.55" fill="#e8d89a" opacity="0.8"/><circle cx="400" cy="82" r="0.4" fill="#f0e6c8" opacity="0.45"/><circle cx="301" cy="192" r="0.45" fill="#d8c88a" opacity="0.35"/><circle cx="339" cy="162" r="0.55" fill="#9fc0d8" opacity="0.55"/><circle cx="253" cy="168" r="0.6" fill="#d8c88a" opacity="0.8"/><circle cx="410" cy="137" r="0.75" fill="#f0e6c8" opacity="0.55"/><circle cx="252" cy="118" r="0.4" fill="#e8d89a" opacity="0.65"/><circle cx="256" cy="80" r="0.5" fill="#9fc0d8" opacity="0.8"/><circle cx="585" cy="205" r="0.5" fill="#e8d89a" opacity="0.65"/><circle cx="580" cy="106" r="0.55" fill="#e8d89a" opacity="0.45"/><circle cx="298" cy="91" r="0.6" fill="#d8c88a" opacity="0.8"/><circle cx="509" cy="167" r="0.4" fill="#e8d89a" opacity="0.45"/><circle cx="316" cy="109" r="0.4" fill="#e8d89a" opacity="0.55"/><circle cx="558" cy="149" r="0.6" fill="#e8d89a" opacity="0.45"/><circle cx="447" cy="156" r="0.6" fill="#9fc0d8" opacity="0.35"/><circle cx="259" cy="103" r="0.75" fill="#e8d89a" opacity="0.35"/><circle cx="498" cy="112" r="0.75" fill="#f0e6c8" opacity="0.8"/><circle cx="368" cy="138" r="0.4" fill="#9fc0d8" opacity="0.45"/><circle cx="243" cy="134" r="0.4" fill="#cfd8e8" opacity="0.65"/><circle cx="393" cy="125" r="0.6" fill="#e0b080" opacity="0.65"/><circle cx="285" cy="152" r="0.5" fill="#9fc0d8" opacity="0.65"/><circle cx="221" cy="93" r="0.6" fill="#cfd8e8" opacity="0.55"/><circle cx="419" cy="141" r="0.55" fill="#e0b080" opacity="0.35"/><circle cx="326" cy="108" r="0.6" fill="#e8d89a" opacity="0.8"/><circle cx="546" cy="125" r="0.55" fill="#d8c88a" opacity="0.55"/><circle cx="342" cy="92" r="0.5" fill="#e0b080" opacity="0.55"/><circle cx="310" cy="83" r="0.75" fill="#9fc0d8" opacity="0.35"/><circle cx="226" cy="193" r="0.5" fill="#cfd8e8" opacity="0.8"/><circle cx="384" cy="166" r="0.45" fill="#f0e6c8" opacity="0.55"/><circle cx="303" cy="85" r="0.55" fill="#9fc0d8" opacity="0.35"/><circle cx="261" cy="143" r="0.4" fill="#cfd8e8" opacity="0.8"/><circle cx="402" cy="139" r="0.75" fill="#f0e6c8" opacity="0.65"/><circle cx="223" cy="121" r="0.4" fill="#f0e6c8" opacity="0.35"/><circle cx="573" cy="139" r="0.4" fill="#cfd8e8" opacity="0.55"/><circle cx="582" cy="85" r="0.4" fill="#9fc0d8" opacity="0.8"/><circle cx="397" cy="199" r="0.45" fill="#e8d89a" opacity="0.65"/><circle cx="228" cy="168" r="0.6" fill="#e8d89a" opacity="0.8"/><circle cx="407" cy="78" r="0.55" fill="#9fc0d8" opacity="0.35"/><circle cx="445" cy="79" r="0.4" fill="#e0b080" opacity="0.35"/><circle cx="424" cy="95" r="0.75" fill="#e0b080" opacity="0.35"/><circle cx="318" cy="204" r="0.55" fill="#cfd8e8" opacity="0.45"/><circle cx="285" cy="152" r="0.5" fill="#e8d89a" opacity="0.35"/><circle cx="240" cy="149" r="0.6" fill="#f0e6c8" opacity="0.35"/><circle cx="448" cy="118" r="0.5" fill="#d8c88a" opacity="0.65"/><circle cx="487" cy="195" r="0.75" fill="#d8c88a" opacity="0.45"/><circle cx="509" cy="83" r="0.6" fill="#9fc0d8" opacity="0.65"/><circle cx="573" cy="140" r="0.4" fill="#cfd8e8" opacity="0.45"/><circle cx="516" cy="186" r="0.75" fill="#d8c88a" opacity="0.65"/><circle cx="422" cy="108" r="0.5" fill="#e0b080" opacity="0.45"/><circle cx="391" cy="110" r="0.55" fill="#cfd8e8" opacity="0.8"/><circle cx="303" cy="94" r="0.55" fill="#cfd8e8" opacity="0.65"/><circle cx="241" cy="110" r="0.4" fill="#cfd8e8" opacity="0.55"/><circle cx="256" cy="86" r="0.45" fill="#cfd8e8" opacity="0.35"/><circle cx="597" cy="202" r="0.55" fill="#f0e6c8" opacity="0.45"/><circle cx="415" cy="98" r="0.75" fill="#f0e6c8" opacity="0.45"/><circle cx="469" cy="113" r="0.4" fill="#9fc0d8" opacity="0.8"/><circle cx="534" cy="136" r="0.45" fill="#f0e6c8" opacity="0.8"/><circle cx="466" cy="165" r="0.55" fill="#e8d89a" opacity="0.55"/><circle cx="595" cy="196" r="0.75" fill="#cfd8e8" opacity="0.45"/><circle cx="402" cy="106" r="0.55" fill="#e8d89a" opacity="0.45"/><circle cx="446" cy="174" r="0.5" fill="#cfd8e8" opacity="0.8"/><circle cx="534" cy="188" r="0.45" fill="#cfd8e8" opacity="0.35"/><circle cx="372" cy="122" r="0.4" fill="#9fc0d8" opacity="0.55"/><circle cx="403" cy="147" r="0.55" fill="#e8d89a" opacity="0.35"/><circle cx="352" cy="166" r="0.6" fill="#e8d89a" opacity="0.65"/><circle cx="472" cy="187" r="0.75" fill="#e8d89a" opacity="0.55"/><circle cx="225" cy="158" r="0.75" fill="#cfd8e8" opacity="0.55"/><circle cx="446" cy="101" r="0.4" fill="#cfd8e8" opacity="0.55"/><circle cx="244" cy="141" r="0.55" fill="#d8c88a" opacity="0.55"/><circle cx="580" cy="189" r="0.4" fill="#e0b080" opacity="0.8"/><circle cx="542" cy="82" r="0.75" fill="#e0b080" opacity="0.45"/><circle cx="364" cy="131" r="0.6" fill="#cfd8e8" opacity="0.8"/><circle cx="516" cy="123" r="0.6" fill="#cfd8e8" opacity="0.45"/><circle cx="219" cy="179" r="0.75" fill="#e0b080" opacity="0.8"/><circle cx="244" cy="83" r="0.75" fill="#cfd8e8" opacity="0.8"/><circle cx="396" cy="205" r="0.45" fill="#9fc0d8" opacity="0.45"/><circle cx="239" cy="149" r="0.75" fill="#9fc0d8" opacity="0.45"/><circle cx="266" cy="191" r="0.5" fill="#d8c88a" opacity="0.55"/><circle cx="489" cy="147" r="0.75" fill="#e0b080" opacity="0.8"/><circle cx="284" cy="119" r="0.5" fill="#f0e6c8" opacity="0.45"/><circle cx="327" cy="208" r="0.4" fill="#e8d89a" opacity="0.35"/><circle cx="392" cy="172" r="0.6" fill="#d8c88a" opacity="0.55"/><circle cx="594" cy="123" r="0.4" fill="#9fc0d8" opacity="0.45"/><circle cx="456" cy="133" r="0.55" fill="#9fc0d8" opacity="0.55"/><circle cx="465" cy="167" r="0.45" fill="#d8c88a" opacity="0.45"/><circle cx="418" cy="85" r="0.55" fill="#f0e6c8" opacity="0.35"/><circle cx="239" cy="200" r="0.45" fill="#e0b080" opacity="0.35"/><circle cx="588" cy="148" r="0.5" fill="#9fc0d8" opacity="0.65"/><circle cx="257" cy="136" r="0.75" fill="#f0e6c8" opacity="0.55"/><circle cx="369" cy="144" r="0.5" fill="#e8d89a" opacity="0.8"/><circle cx="289" cy="91" r="0.6" fill="#cfd8e8" opacity="0.45"/><circle cx="491" cy="78" r="0.75" fill="#cfd8e8" opacity="0.45"/><circle cx="569" cy="114" r="0.55" fill="#d8c88a" opacity="0.55"/><circle cx="420" cy="89" r="0.75" fill="#f0e6c8" opacity="0.65"/><circle cx="458" cy="118" r="0.45" fill="#f0e6c8" opacity="0.8"/><circle cx="428" cy="171" r="0.75" fill="#f0e6c8" opacity="0.65"/><circle cx="249" cy="88" r="0.45" fill="#cfd8e8" opacity="0.45"/><circle cx="450" cy="194" r="0.5" fill="#d8c88a" opacity="0.45"/><circle cx="521" cy="186" r="0.55" fill="#d8c88a" opacity="0.8"/><circle cx="504" cy="84" r="0.4" fill="#e0b080" opacity="0.65"/><circle cx="379" cy="156" r="0.75" fill="#9fc0d8" opacity="0.65"/><circle cx="498" cy="188" r="0.55" fill="#cfd8e8" opacity="0.35"/><circle cx="459" cy="85" r="0.4" fill="#cfd8e8" opacity="0.55"/><circle cx="358" cy="143" r="0.5" fill="#e8d89a" opacity="0.45"/><circle cx="545" cy="82" r="0.6" fill="#d8c88a" opacity="0.55"/><circle cx="583" cy="192" r="0.45" fill="#f0e6c8" opacity="0.35"/><circle cx="542" cy="99" r="0.5" fill="#cfd8e8" opacity="0.8"/><circle cx="318" cy="116" r="0.45" fill="#f0e6c8" opacity="0.8"/><circle cx="272" cy="148" r="0.5" fill="#d8c88a" opacity="0.35"/><circle cx="323" cy="131" r="0.6" fill="#cfd8e8" opacity="0.8"/><circle cx="464" cy="79" r="0.4" fill="#d8c88a" opacity="0.45"/><circle cx="427" cy="117" r="0.4" fill="#d8c88a" opacity="0.65"/><circle cx="572" cy="176" r="0.75" fill="#d8c88a" opacity="0.65"/><circle cx="287" cy="115" r="0.4" fill="#d8c88a" opacity="0.45"/><circle cx="458" cy="77" r="0.4" fill="#e0b080" opacity="0.8"/><circle cx="405" cy="88" r="0.55" fill="#cfd8e8" opacity="0.65"/><circle cx="484" cy="78" r="0.75" fill="#9fc0d8" opacity="0.8"/><circle cx="233" cy="193" r="0.6" fill="#cfd8e8" opacity="0.35"/><circle cx="324" cy="98" r="0.75" fill="#f0e6c8" opacity="0.8"/><circle cx="237" cy="164" r="0.6" fill="#e8d89a" opacity="0.45"/><circle cx="496" cy="95" r="0.6" fill="#9fc0d8" opacity="0.35"/><circle cx="364" cy="186" r="0.45" fill="#e0b080" opacity="0.8"/><circle cx="259" cy="149" r="0.55" fill="#9fc0d8" opacity="0.45"/><circle cx="221" cy="203" r="0.55" fill="#e8d89a" opacity="0.45"/><circle cx="534" cy="138" r="0.45" fill="#e8d89a" opacity="0.65"/><circle cx="518" cy="153" r="0.55" fill="#d8c88a" opacity="0.35"/><circle cx="483" cy="97" r="0.75" fill="#f0e6c8" opacity="0.8"/><circle cx="248" cy="131" r="0.6" fill="#cfd8e8" opacity="0.65"/><circle cx="476" cy="127" r="0.6" fill="#9fc0d8" opacity="0.8"/><circle cx="445" cy="109" r="0.4" fill="#e8d89a" opacity="0.45"/><circle cx="345" cy="185" r="0.75" fill="#f0e6c8" opacity="0.8"/><circle cx="522" cy="135" r="0.55" fill="#cfd8e8" opacity="0.65"/><circle cx="465" cy="146" r="0.45" fill="#e8d89a" opacity="0.35"/><circle cx="308" cy="155" r="0.6" fill="#d8c88a" opacity="0.35"/><circle cx="230" cy="153" r="0.4" fill="#d8c88a" opacity="0.55"/><circle cx="503" cy="165" r="0.55" fill="#9fc0d8" opacity="0.35"/><circle cx="427" cy="202" r="0.6" fill="#e8d89a" opacity="0.8"/><circle cx="375" cy="98" r="0.45" fill="#e0b080" opacity="0.35"/><circle cx="513" cy="133" r="0.75" fill="#e8d89a" opacity="0.8"/><circle cx="401" cy="124" r="0.6" fill="#e8d89a" opacity="0.8"/><circle cx="421" cy="193" r="0.6" fill="#d8c88a" opacity="0.55"/><circle cx="501" cy="183" r="0.55" fill="#d8c88a" opacity="0.65"/><circle cx="287" cy="119" r="0.6" fill="#e0b080" opacity="0.45"/><circle cx="387" cy="114" r="0.55" fill="#f0e6c8" opacity="0.35"/><circle cx="376" cy="103" r="0.55" fill="#f0e6c8" opacity="0.65"/><circle cx="354" cy="163" r="0.55" fill="#e8d89a" opacity="0.45"/><circle cx="583" cy="112" r="0.6" fill="#cfd8e8" opacity="0.45"/><circle cx="295" cy="82" r="0.45" fill="#cfd8e8" opacity="0.45"/><circle cx="569" cy="85" r="0.45" fill="#e8d89a" opacity="0.55"/><circle cx="566" cy="117" r="0.75" fill="#cfd8e8" opacity="0.45"/><circle cx="561" cy="133" r="0.45" fill="#9fc0d8" opacity="0.35"/><circle cx="259" cy="144" r="0.75" fill="#9fc0d8" opacity="0.35"/><circle cx="522" cy="134" r="0.6" fill="#e0b080" opacity="0.8"/><circle cx="285" cy="179" r="0.6" fill="#d8c88a" opacity="0.65"/><circle cx="287" cy="169" r="0.45" fill="#e8d89a" opacity="0.8"/><circle cx="375" cy="111" r="0.55" fill="#9fc0d8" opacity="0.8"/><circle cx="557" cy="76" r="0.6" fill="#cfd8e8" opacity="0.35"/><circle cx="452" cy="124" r="0.55" fill="#e8d89a" opacity="0.8"/><circle cx="486" cy="94" r="0.55" fill="#d8c88a" opacity="0.35"/><circle cx="335" cy="188" r="0.75" fill="#cfd8e8" opacity="0.8"/><circle cx="230" cy="203" r="0.45" fill="#e8d89a" opacity="0.35"/><circle cx="481" cy="81" r="0.45" fill="#cfd8e8" opacity="0.35"/><circle cx="481" cy="102" r="0.5" fill="#e8d89a" opacity="0.8"/><circle cx="396" cy="120" r="0.75" fill="#e8d89a" opacity="0.65"/><circle cx="513" cy="143" r="0.4" fill="#d8c88a" opacity="0.65"/><circle cx="566" cy="195" r="0.6" fill="#e0b080" opacity="0.8"/><circle cx="276" cy="103" r="0.4" fill="#d8c88a" opacity="0.45"/><circle cx="343" cy="76" r="0.4" fill="#cfd8e8" opacity="0.8"/><circle cx="573" cy="122" r="0.5" fill="#cfd8e8" opacity="0.8"/><circle cx="350" cy="207" r="0.75" fill="#f0e6c8" opacity="0.8"/><circle cx="491" cy="152" r="0.45" fill="#d8c88a" opacity="0.55"/><circle cx="527" cy="186" r="0.45" fill="#e0b080" opacity="0.8"/><circle cx="318" cy="84" r="0.4" fill="#f0e6c8" opacity="0.8"/><circle cx="398" cy="175" r="0.4" fill="#9fc0d8" opacity="0.45"/><circle cx="315" cy="153" r="0.5" fill="#f0e6c8" opacity="0.45"/><circle cx="278" cy="136" r="0.6" fill="#cfd8e8" opacity="0.35"/><circle cx="496" cy="110" r="0.6" fill="#e8d89a" opacity="0.35"/><circle cx="484" cy="204" r="0.55" fill="#e0b080" opacity="0.55"/><circle cx="410" cy="149" r="0.55" fill="#e8d89a" opacity="0.45"/><circle cx="528" cy="193" r="0.5" fill="#cfd8e8" opacity="0.35"/><circle cx="544" cy="193" r="0.4" fill="#cfd8e8" opacity="0.45"/><circle cx="228" cy="146" r="0.45" fill="#f0e6c8" opacity="0.65"/><circle cx="560" cy="182" r="0.5" fill="#9fc0d8" opacity="0.45"/><circle cx="496" cy="164" r="0.55" fill="#9fc0d8" opacity="0.65"/><circle cx="413" cy="146" r="0.5" fill="#f0e6c8" opacity="0.45"/><circle cx="538" cy="168" r="0.75" fill="#e8d89a" opacity="0.8"/><circle cx="459" cy="98" r="0.6" fill="#e8d89a" opacity="0.65"/><circle cx="329" cy="132" r="0.5" fill="#f0e6c8" opacity="0.35"/><circle cx="246" cy="108" r="0.45" fill="#e8d89a" opacity="0.55"/></g>
<circle cx="517" cy="177" r="1.3" fill="#ffcf6a"/>
<g fill="#8fb0f0" opacity="0.8"><circle cx="495" cy="130" r="1"/><circle cx="473" cy="140" r=".9"/><circle cx="510" cy="165" r="1"/><circle cx="512" cy="188" r=".9"/><circle cx="525" cy="185" r=".8"/></g>
<text x="667" y="837" text-anchor="middle" font-family="Liberation Sans" font-size="12" letter-spacing="1.6" fill="#8c8782" opacity="0.85">GODWARD</text>
<text x="667" y="843" text-anchor="middle" font-family="Liberation Sans" font-size="5" letter-spacing="1" fill="#8c8782" opacity="0.7">PHOTOGRAPHY</text>
</svg>
</div>

<!-- ============ CMD ============ -->
<div id="cmd" class="a">
  <div id="cmdtitle" class="a"></div>
  <svg style="left:8px;top:8px" width="16" height="13">
    <rect x="0.5" y="0.5" width="15" height="12" fill="#000" stroke="#8d8d8d"/>
    <rect x="1" y="1" width="14" height="2" fill="#c9d3df"/>
    <text x="1.5" y="10" font-family="Liberation Mono" font-size="5.5" fill="#fff" font-weight="bold" letter-spacing="-0.3">C:\_</text>
  </svg>
  <div class="t" style="left:30px;top:9px;font-size:12.3px;color:#9a9a9a">Administrator: Command Prompt</div>
  <div id="cmdtext" class="a">Windows File Recovery
Copyright (c) Microsoft Corporation. All rights reserved
Version:            0.0.11761.0
---------------------------------------------------------------------------------------------------------

Source drive:       X:
Destination folder: F:\Recovery_20200629_140835
Filter:             *.*
Extension filter:    *

Sector count:       0x00000000001fe7ff
Cluster size:       0x00001000
Sector size:        0x00000200
Overwrite:          Prompt
Mode:               Default


Continue? (y/n)
Pass 1: Scanning and processing disk
Scanning disk:  100%

Pass 2: Recovering files
Files recovered: 1, total files: 1, current filename: F:\Recovery_20200629_140835\SkyReflections_Godward_2000.jpg
Progress: 100%

View recovered files? (y/n)


X:\&gt;</div>
  <div class="a" style="left:32px;top:506px;width:8px;height:3px;background:#f2f2f2"></div>
  <div id="cmdscroll" class="a"></div>
  <svg style="left:963px;top:496px" width="11" height="8"><path d="M1 1.5l4.5 4.5 4.5-4.5" stroke="#606060" stroke-width="1.6" fill="none"/></svg>
</div>

<!-- ============ EXPLORER ============ -->
<div id="exp" class="a">
  <!-- title bar (coords relative to 597,0) -->
  <svg style="left:0;top:0" width="110" height="31">
    <defs><linearGradient id="fg" x1="0" y1="0" x2="0" y2="1"><stop offset="0" stop-color="#fde9a6"/><stop offset="1" stop-color="#f6d267"/></linearGradient></defs>
    <path d="M11.5 7.5h11v15h-11z" fill="url(#fg)" stroke="#e2b746"/><path d="M21 16.5h2.5v6" fill="none" stroke="#e2b746"/>
    <path d="M32.5 9v12" stroke="#8a8a8a"/>
    <path d="M44.5 8.5h9l2.5 2.5v12.5h-11.5z" fill="#fafafa" stroke="#777"/>
    <path d="M46.5 15.5l2.5 3 4.5-5.5" stroke="#e8562a" stroke-width="1.4" fill="none"/>
    <path d="M66.5 8.5h11v15h-11z" fill="url(#fg)" stroke="#e2b746"/><path d="M76 17.5h2.5v6" fill="none" stroke="#e2b746"/>
    <path d="M86.5 13.5h7" stroke="#111"/><path d="M86.5 16h7l-3.5 3.5z" fill="#111"/>
    <path d="M102.5 9v12" stroke="#8a8a8a"/>
  </svg>
  <div class="t" style="left:110px;top:11px;font-size:10.9px;color:#000">Recovery_20200629_140835</div>
  <svg style="left:650px;top:0" width="127" height="31">
    <path d="M7 15.5h10" stroke="#111"/>
    <rect x="52.5" y="10.5" width="10" height="10" fill="none" stroke="#111"/>
    <path d="M98.5 10.5l10 10M108.5 10.5l-10 10" stroke="#111" stroke-width="1.05"/>
  </svg>
  <!-- ribbon tabs -->
  <div class="a" style="left:1px;top:31px;width:56px;height:23px;background:#0063b1"></div>
  <div class="t ui" style="left:20px;top:38px;color:#fff">File</div>
  <div class="t ui" style="left:71px;top:38px;color:#222">Home</div>
  <div class="t ui" style="left:130px;top:38px;color:#222">Share</div>
  <div class="t ui" style="left:188px;top:38px;color:#222">View</div>
  <svg style="left:735px;top:31px" width="42" height="23">
    <path d="M2.5 9l5 5 5-5" stroke="#9a9a9a" fill="none"/>
    <circle cx="30" cy="11" r="8" fill="#1565c0"/>
    <text x="30" y="15.5" text-anchor="middle" font-family="Liberation Sans" font-weight="bold" font-size="12" fill="#fff">?</text>
  </svg>
  <div class="a" style="left:57px;top:54px;width:720px;height:1px;background:#dadada"></div>
  <!-- nav row -->
  <svg style="left:0;top:55px" width="110" height="40">
    <path d="M14 20.5h11M19.5 15l-5.5 5.5 5.5 5.5" stroke="#cfcfcf" stroke-width="1.4" fill="none"/>
    <path d="M44 20.5h11M49.5 15l5.5 5.5-5.5 5.5" stroke="#c4c4c4" stroke-width="1.4" fill="none"/>
    <path d="M70.5 18l3 3 3-3" stroke="#c4c4c4" fill="none"/>
    <path d="M94 27v-11.5M88.5 21l5.5-5.5 5.5 5.5" stroke="#707070" stroke-width="1.5" fill="none"/>
  </svg>
  <div class="a" style="left:107px;top:60px;width:396px;height:30px;border:1px solid #d9d9d9;background:#fff"></div>
  <svg style="left:107px;top:60px" width="400" height="30">
    <path d="M5.5 6.5h11v15h-11z" fill="url(#fg)" stroke="#e2b746"/><path d="M15 15.5h2.5v6" fill="none" stroke="#e2b746"/>
    <path d="M25.5 11.5l-2.5 2.5 2.5 2.5M29.5 11.5l-2.5 2.5 2.5 2.5" stroke="#333" fill="none"/>
    <path d="M114.5 12l2.5 2.5-2.5 2.5" stroke="#777" stroke-width="1.2" fill="none"/>
    <path d="M346.5 12.5l4.5 4.5 4.5-4.5" stroke="#444" stroke-width="1.2" fill="none"/>
    <path d="M365.5 0v30" stroke="#d9d9d9"/>
  </svg>
  <div class="t ui" style="left:147px;top:70px;font-size:11px">USB disk (F:)</div>
  <div class="t ui" style="left:235px;top:70px;font-size:10.9px">Recovery_20200629_140835</div>
  <svg style="left:480px;top:67px" width="16" height="16">
    <path d="M11.5 7A4.5 4.5 0 1 1 7.5 3.3" stroke="#707070" stroke-width="1.2" fill="none"/>
    <path d="M6.5 1l3.5 2.3-3.3 2.3z" fill="#707070"/>
  </svg>
  <div class="a" style="left:515px;top:60px;width:250px;height:30px;border:1px solid #d9d9d9;background:#fff"></div>
  <svg style="left:528px;top:66px" width="16" height="18">
    <circle cx="9.5" cy="7" r="4.3" fill="none" stroke="#8a8a8a" stroke-width="1"/>
    <path d="M6.5 10.2l-4.5 4.5" stroke="#8a8a8a" stroke-width="1.1"/>
  </svg>
  <div class="t" style="left:556px;top:70px;font-size:10.9px;color:#6d6d6d">Search Recovery_20200629_140835</div>
  <!-- nav pane -->
  <div class="a" style="left:1px;top:321px;width:156px;height:24px;background:#d9d9d9"></div>
  <div class="a" style="left:159px;top:95px;width:1px;height:474px;background:#f0f0f0"></div>
  <svg style="left:0;top:95px" width="160" height="360">
    <!-- quick access star -->
    <path d="M34 22l2.2 4.5 5 .7-3.6 3.5.9 5-4.5-2.4-4.5 2.4.9-5-3.6-3.5 5-.7z" fill="#2b8ce3"/>
    <path d="M24 27.5h5M23 30h4M25 32.5h3" stroke="#2b8ce3" stroke-width="0.9"/>
    <!-- desktop -->
    <rect x="33" y="47" width="16" height="11" fill="#1e88e5"/><path d="M33 57h16" stroke="#0d47a1"/>
    <path d="M37 57.5h1M41 57.5h1M45 57.5h1" stroke="#fff"/>
    <!-- downloads -->
    <path d="M38.5 69v8M34 76l7 7 7-7z" fill="#2f8de4" stroke="#2f8de4" stroke-width="2.2" stroke-linejoin="round"/>
    <!-- documents -->
    <path d="M35.5 94.5h9l2.5 2.5v12.5h-11.5z" fill="#f6f8fb" stroke="#8a8a8a"/>
    <path d="M37.5 98.5h3M37.5 101.5h8M37.5 103.5h8M37.5 105.5h8" stroke="#3a8ad8"/>
    <!-- pictures -->
    <rect x="33.5" y="120.5" width="15" height="11" fill="#fff" stroke="#8c8c8c"/>
    <rect x="35" y="122" width="12" height="8" fill="#7ab4e6"/><path d="M35 130v-3c3-2 6-1 12 1v2z" fill="#4a7a3a"/>
    <!-- music -->
    <path d="M40 142v12.5" stroke="#2f8de4" stroke-width="1.8"/><ellipse cx="37.5" cy="155" rx="3" ry="2.3" fill="#2f8de4"/><path d="M40 142c2 2.5 5.5 4 4.5 9" stroke="#2f8de4" stroke-width="1.6" fill="none"/>
    <!-- videos -->
    <rect x="34" y="167" width="14" height="14" fill="#333"/><rect x="36.5" y="168.5" width="9" height="11" fill="#3a78c9"/><path d="M36.5 174h9" stroke="#e3b341" stroke-width="2"/>
    <!-- onedrive -->
    <path d="M27 211c-2 0-3-1.5-3-3s1.5-3 3.2-3c.8-2.5 3-4 5.5-4 2.8 0 4.8 1.8 5.3 4 2-.2 3.5 1.2 3.5 3s-1.5 3-3.3 3z" fill="#1177d4"/>
    <!-- this pc -->
    <rect x="24" y="230" width="16" height="10" fill="#47a9f0" stroke="#7a9bb3" stroke-width="0.6"/><path d="M29 242h6M25 244.5h14" stroke="#8aa7bd"/>
    <!-- usb drive -->
    <path d="M25 272l2-3h10l2 3z" fill="#cfcfcf"/><rect x="24" y="272" width="15" height="4" fill="#3a3a3a"/><rect x="35" y="273.5" width="1.5" height="1" fill="#4bd35f"/>
    <path d="M25 304l2-3h10l2 3z" fill="#cfcfcf"/><rect x="24" y="304" width="15" height="4" fill="#3a3a3a"/><rect x="35" y="305.5" width="1.5" height="1" fill="#4bd35f"/>
    <!-- network -->
    <circle cx="35" cy="331" r="6" fill="#5aa6e6"/><rect x="24.5" y="332.5" width="10" height="7" fill="#4aa0ea" stroke="#2d6fb3" stroke-width="0.6"/><path d="M27 341.5h5" stroke="#666"/>
  </svg>
  <svg style="left:140px;top:88px" width="20" height="140">
    <g fill="#8e8e8e">
      <path d="M6.5 59.5l3-3 3.5 3.5-3 3-1-1-2.8 2.8-.6-.6 2.8-2.8z"/>
      <path d="M6.5 83.5l3-3 3.5 3.5-3 3-1-1-2.8 2.8-.6-.6 2.8-2.8z"/>
      <path d="M6.5 107.5l3-3 3.5 3.5-3 3-1-1-2.8 2.8-.6-.6 2.8-2.8z"/>
      <path d="M6.5 131.5l3-3 3.5 3.5-3 3-1-1-2.8 2.8-.6-.6 2.8-2.8z"/>
    </g>
  </svg>
  <div class="t ui" style="left:46px;top:120px">Quick access</div>
  <div class="t ui" style="left:54px;top:144px">Desktop</div>
  <div class="t ui" style="left:54px;top:168px">Downloads</div>
  <div class="t ui" style="left:54px;top:192px">Documents</div>
  <div class="t ui" style="left:54px;top:216px">Pictures</div>
  <div class="t ui" style="left:54px;top:240px">Music</div>
  <div class="t ui" style="left:54px;top:264px">Videos</div>
  <div class="t ui" style="left:46px;top:296px">OneDrive</div>
  <div class="t ui" style="left:46px;top:328px">This PC</div>
  <div class="t ui" style="left:46px;top:360px">USB disk (F:)</div>
  <div class="t ui" style="left:46px;top:392px">winfrtest (X:)</div>
  <div class="t ui" style="left:46px;top:424px">Network</div>
  <!-- content -->
  <svg style="left:195px;top:110px" width="66" height="86">
    <defs><linearGradient id="dg" x1="0" y1="0" x2="1" y2="1"><stop offset="0" stop-color="#fbfbfb"/><stop offset="1" stop-color="#eeeeee"/></linearGradient></defs>
    <path d="M0.5 1.5h44.5l18 18v64.5h-62.5z" fill="url(#dg)" stroke="#cdcdcd"/>
    <path d="M45 1.5v18h18" fill="#e2e2e2" stroke="#cdcdcd"/>
    <g stroke="#dedede">
      <path d="M6 7.5h38M6 10.5h38M6 13.5h38M6 16.5h38M6 19.5h38"/>
      <path d="M6 22.5h51M6 25.5h51M6 28.5h51M6 31.5h51M6 34.5h51M6 37.5h51M6 40.5h51M6 43.5h51M6 46.5h51M6 49.5h51M6 52.5h51M6 55.5h51M6 58.5h51M6 61.5h51M6 64.5h51M6 67.5h51M6 70.5h51M6 73.5h51M6 76.5h51"/>
    </g>
  </svg>
  <div class="t ui" style="left:194px;top:203px">RecoveryLog</div>
  <div id="thumb" class="a" style="left:301px;top:144px;width:90px;height:53px;box-shadow:1px 1px 2px rgba(0,0,0,.35);overflow:hidden;background:#1a1414">
  <svg style="left:0;top:0" width="90" height="53" viewBox="0 0 90 53">
    <defs>
      <linearGradient id="tsky" x1="0" y1="0" x2="0" y2="1"><stop offset="0" stop-color="#2a2032"/><stop offset="0.3" stop-color="#3e3040"/><stop offset="0.55" stop-color="#54403f"/><stop offset="0.62" stop-color="#3a2e30"/><stop offset="0.8" stop-color="#241c1a"/><stop offset="1" stop-color="#0c0908"/></linearGradient>
      <radialGradient id="tglow"><stop offset="0" stop-color="#d8f0ff" stop-opacity="0.95"/><stop offset="0.35" stop-color="#90a8c8" stop-opacity="0.6"/><stop offset="1" stop-color="#7a6a80" stop-opacity="0"/></radialGradient>
      <radialGradient id="tmw"><stop offset="0" stop-color="#d0c0d0" stop-opacity="0.8"/><stop offset="0.5" stop-color="#9a86a0" stop-opacity="0.45"/><stop offset="1" stop-color="#6a5a70" stop-opacity="0"/></radialGradient>
      <radialGradient id="tdark"><stop offset="0" stop-color="#070504" stop-opacity="1"/><stop offset="1" stop-color="#070504" stop-opacity="0"/></radialGradient>
      <radialGradient id="tyel"><stop offset="0" stop-color="#ffd040" stop-opacity="1"/><stop offset="0.6" stop-color="#e0a020" stop-opacity="0.6"/><stop offset="1" stop-color="#c08020" stop-opacity="0"/></radialGradient>
    </defs>
    <rect width="90" height="53" fill="url(#tsky)"/>
    <radialGradient id="twarm2"><stop offset="0" stop-color="#7a5a50" stop-opacity="0.75"/><stop offset="1" stop-color="#7a5a50" stop-opacity="0"/></radialGradient>
    <ellipse cx="12" cy="25" rx="22" ry="12" fill="url(#twarm2)"/>
    <ellipse cx="80" cy="22" rx="20" ry="14" fill="url(#twarm2)"/>
    <ellipse cx="84" cy="5" rx="2.5" ry="1.6" fill="#8a7a90" opacity="0.3"/>
    <ellipse cx="40" cy="14" rx="30" ry="11" transform="rotate(-50 40 14)" fill="url(#tmw)"/>
    <ellipse cx="40" cy="14" rx="24" ry="2.6" transform="rotate(-50 40 14)" fill="#e0d0dc" opacity="0.55" style="filter:blur(0.6px)"/>
    <ellipse cx="44" cy="28" rx="9" ry="14" transform="rotate(-25 44 28)" fill="url(#tmw)" opacity="0.7"/>
    <g fill="#f0e4f0" opacity="0.5" style="filter:blur(0.5px)"><ellipse cx="33" cy="22" rx="2.5" ry="1.3" transform="rotate(-50 33 22)"/><ellipse cx="38" cy="16" rx="3" ry="1.4" transform="rotate(-50 38 16)"/><ellipse cx="45" cy="8" rx="3" ry="1.3" transform="rotate(-50 45 8)"/><ellipse cx="29" cy="26" rx="2" ry="1.2"/></g>
    <ellipse cx="42" cy="32" rx="12" ry="8" fill="url(#tglow)"/>
    <ellipse cx="60" cy="32.5" rx="14" ry="2.2" fill="url(#tyel)"/>
    <rect x="48" y="31.8" width="22" height="1.3" fill="#f8c830" opacity="0.9"/>
    <ellipse cx="5" cy="32" rx="3" ry="1" fill="#e07020" opacity="0.8"/>
    <ellipse cx="12" cy="50" rx="24" ry="12" fill="url(#tdark)"/>
    <ellipse cx="85" cy="45" rx="12" ry="12" fill="url(#tdark)" opacity="0.8"/>
    <g fill="none" stroke="#080606" stroke-linecap="round" stroke-linejoin="round">
      <path d="M55.3 33L55.3 27L54 23L52 18L50.5 13M55 26L57.5 20.5L60.5 14.5L64.5 9L68.5 5.5M60.5 14.5L64 12.5M57.5 20.5L61.5 18.5L66.5 16.5M62 18L65 14.5M54 24L50.5 19.5L47.5 17.5M51 20L48.5 20.5M52 16L49 12M64.5 9L66 6.5" stroke-width="0.85"/>
      <path d="M55 30L55 33" stroke-width="1.6"/>
      <path d="M55.5 33L55.5 42M55.5 35L52.5 41M55.5 36L58.5 43" stroke-width="0.7" opacity="0.7"/>
      <path d="M21 33L20.5 29L19.5 27M33 33L32 29L30.5 27M40.5 33L41.5 29L43 27M29 33L30 30" stroke-width="1.4"/>
      <path d="M33 33L34 38M41 33L42 37M21 33L21.5 37" stroke-width="1" opacity="0.6"/>
    </g>
  </svg>
</div>
  <div class="t ui" style="left:303px;top:203px">SkyReflections_G</div>
  <div class="t ui" style="left:313px;top:218px">odward_2000</div>
  <!-- status bar -->
  <div class="t ui" style="left:15px;top:575px;color:#1e1e1e">2 items</div>
  <div class="a" style="left:63px;top:574px;width:1px;height:12px;background:#f0f0f0"></div>
  <svg style="left:729px;top:569px" width="48" height="24">
    <g fill="none" stroke="#8c8c8c"><rect x="2.5" y="4.5" width="2" height="12"/></g>
    <rect x="2" y="4" width="4" height="4" fill="#fff" stroke="#999"/><rect x="2" y="8" width="4" height="4" fill="#fff" stroke="#999"/><rect x="2" y="12" width="4" height="4" fill="#fff" stroke="#999"/>
    <rect x="3.5" y="5.5" width="1" height="1" fill="#3a8a5a"/><rect x="3.5" y="9.5" width="1" height="1" fill="#4a8ae0"/><rect x="3.5" y="13.5" width="1" height="1" fill="#e03030"/>
    <path d="M8 6.5h4M14 6.5h4M8 10.5h4M14 10.5h4M8 14.5h4M14 14.5h4" stroke="#7a7a7a" stroke-width="1.2"/>
    <rect x="19" y="1" width="21" height="22" fill="#cde8f7" stroke="#1a9ae0" stroke-width="1.2" transform="translate(3,0)"/>
    <rect x="26.5" y="6.5" width="13" height="10" fill="#fff" stroke="#909090"/>
    <rect x="28" y="8" width="10" height="7" fill="#5aa0e8"/><path d="M28 15v-3c3-2 5-1 10 1v2z" fill="#2f6a3a"/>
  </svg>
</div>

<!-- ============ TOOLTIP ============ -->
<div id="tip" class="a"></div>
<div class="t" style="left:143px;top:30px;font-size:11.5px;color:#111">SkyReflections_Godward_2000.jpg</div>

<svg style="left:230px;top:-2px" width="20" height="24">
  <path d="M4.5 0.5v17.5l3.6-3.4 2.6 5.6 2.6-1.2-2.5-5.4h4.9z" fill="#fff" stroke="#111" stroke-width="1.05" stroke-linejoin="miter"/>
</svg>
<!-- ============ TASKBAR ============ -->
<div id="taskbar" class="a"></div>
<svg style="left:0;top:860px" width="48" height="40">
  <path d="M16 14.3l6.6-.9v6.4H16zM23.5 13.3l8.5-1.2v7.7h-8.5zM16 20.7h6.6v6.4L16 26.2zM23.5 20.7H32v7.7l-8.5-1.2z" fill="#fff"/>
</svg>
<div id="search" class="a"></div>
<svg style="left:48px;top:860px" width="40" height="40">
  <circle cx="21.5" cy="17.5" r="5.5" fill="none" stroke="#222" stroke-width="1.2"/>
  <path d="M17.6 21.4l-6.2 6.2" stroke="#222" stroke-width="1.3"/>
</svg>
<div class="t" style="left:88px;top:873px;font-size:14.4px;color:#222">Type here to search</div>
<svg style="left:392px;top:860px" width="360" height="40">
  <!-- cortana -->
  <circle cx="23.5" cy="20" r="7" fill="none" stroke="#fff" stroke-width="2"/>
  <!-- task view -->
  <g fill="none" stroke="#fff" stroke-width="1"><path d="M64.5 14v-1.5h11v1.5M64.5 25.5v1.5h11v-1.5"/><rect x="64.5" y="15.5" width="11" height="7.5"/><path d="M78.5 12v15"/></g><rect x="77" y="16" width="3" height="3" fill="#fff"/>
  <!-- edge -->
  <path d="M115.5 20.5C115.5 13.5 120.5 9 126.5 9C132 9 134.5 13 134.5 18.5V21.5H120.8C121.2 25.2 123.8 27.2 127.8 27.2C130.3 27.2 132.3 26.5 134 25.4V29.8C132.2 30.8 129.8 31.3 127 31.3C120.2 31.3 115.5 27 115.5 20.5ZM120.9 17.6H129.8C129.8 15 128.2 13.2 125.6 13.2C123.1 13.2 121.3 15 120.9 17.6Z" fill="#0f78d4"/>
  <path d="M113 18.8C113.8 13.2 118.6 9.3 124.5 9.3C120.8 10.8 117.5 13.8 116.6 18.6C115.6 18 114.3 18.2 113 18.8Z" fill="#0f78d4"/>
  <path d="M103 39h38" stroke="#76b9ed" stroke-width="2"/>
  <!-- explorer active -->
  <rect x="148" y="0" width="48" height="40" fill="#34474e"/>
  <path d="M148 39h48" stroke="#76b9ed" stroke-width="2"/>
  <path d="M161 10.5h7l2 2h13v16.5h-22z" fill="#e8b63a"/>
  <rect x="161" y="13.5" width="22" height="15.5" fill="#f9d46b"/>
  <path d="M167 29.5v-6h10v6" fill="none" stroke="#3a96dd" stroke-width="2.6"/>
  <!-- store -->
  <path d="M209.5 16.5h21v15.5h-21z" fill="#fff"/>
  <path d="M215.5 16.5v-2.5a4.5 4.5 0 0 1 9 0v2.5" fill="none" stroke="#fff" stroke-width="1.4"/>
  <rect x="214.5" y="20" width="4.5" height="4.5" fill="#f25022"/><rect x="220" y="20" width="4.5" height="4.5" fill="#7fba00"/>
  <rect x="214.5" y="25.5" width="4.5" height="4.5" fill="#00a4ef"/><rect x="220" y="25.5" width="4.5" height="4.5" fill="#ffb900"/>
  <!-- mail -->
  <path d="M257.5 16.5l12-6 12 6v11.5h-24z" fill="#fff"/>
  <path d="M258 17l11.5 7.5 11.5-7.5" fill="none" stroke="#030f1e" stroke-width="1.2"/>
  <!-- cmd -->
  <rect x="307.5" y="11.5" width="22" height="17" fill="#000" stroke="#cfcfcf"/>
  <rect x="308" y="12" width="21" height="2" fill="#cfcfcf"/>
  <text x="310" y="21" font-family="Liberation Mono" font-size="6.5" font-weight="bold" fill="#e8e8e8">C:\</text><path d="M322 21.5h6" stroke="#e8e8e8" stroke-width="1"/>
  <path d="M299 39h38" stroke="#76b9ed" stroke-width="2"/>
</svg>
<!-- tray -->
<svg style="left:1240px;top:860px" width="200" height="40">
  <path d="M17.5 24l6-6 6 6" fill="none" stroke="#fff" stroke-width="1.1"/>
  <g fill="none" stroke="#fff" stroke-width="1">
    <rect x="42.5" y="15.5" width="12" height="8"/><path d="M48.5 23.5v2.5M45 26.5h7M39.5 14.5h4v3h-4zM41.5 17.5v9.5"/>
  </g>
  <g fill="none" stroke="#fff" stroke-width="1">
    <path d="M63.5 17.5h2.5l4-4v12.5l-4-4h-2.5z"/><path d="M72 17.5a3.5 3.5 0 0 1 0 4.5M74.5 15.5a6.5 6.5 0 0 1 0 8.5M77 13.5a9.5 9.5 0 0 1 0 12.5"/>
  </g>
  <path d="M159 10.5h16v10h-11l-3 3v-3h-2z" fill="#fff"/>
  <path d="M162 13.5h10M162 16h10M162 18.5h7" stroke="#030f1e" stroke-width="1"/>
  <circle cx="174" cy="27" r="7.5" fill="#333" stroke="#8a8a8a" stroke-width="0.9"/>
  <text x="174" y="31.2" text-anchor="middle" font-family="Liberation Sans" font-weight="bold" font-size="11.5" fill="#fff">2</text>
  <path d="M195.5 0v40" stroke="#55606a"/>
</svg>
<div class="t" style="left:1334px;top:866px;font-size:11.3px;color:#fff">2:08 PM</div>
<div class="t" style="left:1329px;top:883px;font-size:11.7px;color:#fff">6/29/2020</div>
</body></html>
